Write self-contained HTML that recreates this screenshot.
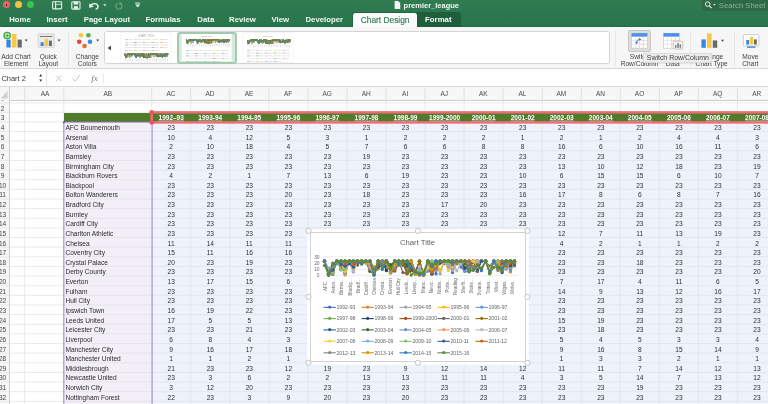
<!DOCTYPE html>
<html><head><meta charset="utf-8"><title>premier_league</title>
<style>
html,body{margin:0;padding:0}
body{width:768px;height:404px;overflow:hidden;position:relative;background:#fff;will-change:transform;font-family:"Liberation Sans",sans-serif;-webkit-font-smoothing:antialiased}
.abs{position:absolute}
.t{position:absolute;white-space:nowrap;line-height:1;transform:translate(-50%,-50%)}
.tl{position:absolute;white-space:nowrap;line-height:1;transform:translate(0,-50%)}
.tab{position:absolute;top:20.1px;font-size:7.8px;font-weight:bold;color:#f3f8f4;white-space:nowrap;line-height:1;transform:translate(-50%,-50%)}
.rl{position:absolute;font-size:6.6px;color:#3f3f3f;white-space:nowrap;line-height:1;transform:translate(-50%,-50%)}
.sep{position:absolute;width:1px;background:#e8e8e8;top:31px;height:35px}
.ch{position:absolute;font-size:6.5px;color:#4a4a4a;top:94.2px;line-height:1;transform:translate(-50%,-50%)}
.rh{position:absolute;font-size:6.6px;color:#444;line-height:1;white-space:nowrap;transform:translate(-50%,-50%)}
.c{position:absolute;font-size:6.6px;color:#2e2e2e;line-height:1;transform:translate(-50%,-50%);white-space:nowrap}
.n{position:absolute;font-size:6.6px;color:#2a2a2a;line-height:1;transform:translate(0,-50%);white-space:nowrap}
.h{position:absolute;font-size:6.5px;font-weight:bold;color:#fff;line-height:1;transform:translate(-50%,-50%);white-space:nowrap;text-decoration:underline}
</style></head><body>

<div class="abs" style="left:0;top:0;width:768px;height:26.8px;background:linear-gradient(#317b51,#27754b)"></div>
<div class="abs" style="left:0;top:25.6px;width:768px;height:1.2px;background:#1f6b42"></div>
<div class="abs" style="left:2.8px;top:1.0999999999999996px;width:7.4px;height:7.4px;border-radius:50%;background:#f05f62"></div>
<div class="abs" style="left:14.8px;top:1.0999999999999996px;width:7.4px;height:7.4px;border-radius:50%;background:#fac044"></div>
<div class="abs" style="left:26.8px;top:1.0999999999999996px;width:7.4px;height:7.4px;border-radius:50%;background:#38c64c"></div>
<div class="abs" style="left:5.8px;top:4.1px;width:1.4px;height:1.6px;border-radius:50%;background:#3a1414"></div>
<svg class="abs" style="left:0;top:0" width="768" height="27" viewBox="0 0 768 27">
<g fill="none" stroke="#e9f2ec" stroke-width="1.1">
<rect x="52.6" y="1.7" width="9" height="7.2" rx="0.8"/><line x1="55.6" y1="1.7" x2="55.6" y2="8.9"/><line x1="55.6" y1="4.4" x2="61.6" y2="4.4" stroke-width="0.8"/>
<rect x="71.8" y="1.7" width="8.2" height="7.4" rx="0.9"/><rect x="73.7" y="1.9" width="4.4" height="2.6" fill="#e9f2ec" stroke="none"/><rect x="73.9" y="6.2" width="4" height="2.7" fill="#e9f2ec" stroke="none"/>
<path d="M90.2 6.6 C91.5 2.6 97.8 2.6 98 6.6 C98 8 97 9 95.6 9.1" stroke-width="1.4"/>
</g>
<path d="M89 3.4 L89.4 8 L93.8 6.6 Z" fill="#e9f2ec"/>
<path d="M103.2 4.2 L106.4 4.2 L104.8 6.2 Z" fill="#e9f2ec"/>
<g fill="none" stroke="#6fa585" stroke-width="1.1"><path d="M117.6 3.4 A3.1 3.1 0 1 0 120.6 3.6"/></g>
<path d="M119.4 1.6 L122.2 3.4 L119.6 5.2 Z" fill="#6fa585"/>
<rect x="135.2" y="2.6" width="5" height="1" fill="#e9f2ec"/><path d="M135.2 4.6 L140.2 4.6 L137.7 7.4 Z" fill="#e9f2ec"/>
<path d="M394.6 0.9 L398.2 0.9 L400.2 2.9 L400.2 9 L394.6 9 Z" fill="#f2f7f3"/>
</svg>
<div class="tl" style="left:403.6px;top:6px;font-size:7.5px;font-weight:bold;color:#eef5f0">premier_league</div>
<div class="abs" style="left:702px;top:0;width:66px;height:10.6px;background:#2f6846;border-radius:0 0 0 2px"></div>
<svg class="abs" style="left:702px;top:0" width="20" height="11" viewBox="0 0 20 11"><circle cx="5.7" cy="4.1" r="2.3" fill="none" stroke="#e4efe7" stroke-width="1"/><line x1="7.4" y1="5.9" x2="9.6" y2="8.2" stroke="#e4efe7" stroke-width="1.2"/><path d="M11 3.9 L13.8 3.9 L12.4 5.6 Z" fill="#e4efe7"/></svg>
<div class="tl" style="left:718.8px;top:5.5px;font-size:7.7px;color:#86b197">Search Sheet</div>
<div class="tab" style="left:20px">Home</div>
<div class="tab" style="left:57px">Insert</div>
<div class="tab" style="left:107px">Page Layout</div>
<div class="tab" style="left:163px">Formulas</div>
<div class="tab" style="left:205.8px">Data</div>
<div class="tab" style="left:242.5px">Review</div>
<div class="tab" style="left:280.3px">View</div>
<div class="tab" style="left:324.3px">Developer</div>
<div class="abs" style="left:352.6px;top:12.6px;width:64.4px;height:15px;background:#fbfbfb;border-radius:2.5px 2.5px 0 0;box-shadow:0 0 0 0.9px #1e6640"></div>
<div class="tab" style="left:385.1px;top:20.1px;color:#2d7a50;font-weight:normal;font-size:8.35px;-webkit-text-stroke:0.12px #2d7a50">Chart Design</div>
<div class="abs" style="left:416.5px;top:12.4px;width:44.2px;height:14.4px;background:#1e5e3b;border-radius:0 2.5px 0 0"></div>
<div class="tab" style="left:438.3px;color:#fff">Format</div>
<div class="abs" style="left:0;top:27px;width:768px;height:42px;background:#f6f6f6"></div>
<div class="abs" style="left:0;top:68.4px;width:768px;height:1px;background:#d8d8d8"></div>
<svg class="abs" style="left:0;top:27px" width="768" height="42" viewBox="0 27 768 42">
<!-- add chart element -->
<rect x="6.4" y="39.6" width="4.3" height="7.9" fill="#3b86e0"/>
<rect x="11.9" y="33.9" width="4.6" height="13.6" fill="#f8c843"/>
<rect x="17.6" y="39.6" width="4.2" height="7.9" fill="#6b6b6b"/>
<circle cx="7.2" cy="35.6" r="3.1" fill="#fff" stroke="#3fae49" stroke-width="1.5"/>
<path d="M5.4 35.6 H9 M7.2 33.8 V37.4" stroke="#3fae49" stroke-width="1.1"/>
<path d="M24.7 39.4 L27.7 39.4 L26.2 41.4 Z" fill="#444"/>
<!-- quick layout -->
<rect x="38.2" y="34" width="16" height="13.2" rx="0.8" fill="#ececec" stroke="#c9c9c9" stroke-width="0.8"/>
<rect x="40" y="36" width="12.4" height="1" fill="#777"/>
<rect x="40.6" y="42.2" width="3" height="3.8" fill="#3b86e0"/>
<rect x="44.6" y="38.8" width="3.3" height="7.2" fill="#f8c843"/>
<rect x="48.9" y="40.6" width="3" height="5.4" fill="#6b6b6b"/>
<path d="M57.5 39.4 L60.5 39.4 L59 41.4 Z" fill="#444"/>
<!-- change colors -->
<circle cx="81" cy="35.3" r="2.3" fill="#f8c843"/>
<circle cx="88.4" cy="35.3" r="2.3" fill="#4fb355"/>
<circle cx="79.2" cy="41.8" r="2.3" fill="#e0453f"/>
<circle cx="90" cy="41.8" r="2.3" fill="#3b86e0"/>
<circle cx="84.5" cy="46" r="2.3" fill="#ee6b2d"/>
<path d="M96.2 39.4 L99.2 39.4 L97.7 41.4 Z" fill="#444"/>
</svg>
<div class="sep" style="left:68px"></div>
<div class="rl" style="left:16px;top:56.8px">Add Chart</div>
<div class="rl" style="left:16px;top:63.9px">Element</div>
<div class="rl" style="left:48.3px;top:56.8px">Quick</div>
<div class="rl" style="left:48.3px;top:63.9px">Layout</div>
<div class="rl" style="left:87.4px;top:56.8px">Change</div>
<div class="rl" style="left:87.4px;top:63.9px">Colors</div>
<div class="abs" style="left:103.5px;top:31.2px;width:506.5px;height:33.3px;background:#fff;border:0.8px solid #d4d4d4;border-radius:2.5px;box-sizing:border-box"></div>
<svg class="abs" style="left:105px;top:42px" width="8" height="10" viewBox="0 0 8 10"><path d="M6 3.4 L6 8.4 L2.6 5.9 Z" fill="#4a4a4a"/></svg>
<div class="abs" style="left:176.6px;top:31.6px;width:60px;height:32px;background:#d6e9dc;border:2px solid #a3cab0;border-radius:3px;box-sizing:border-box"></div>
<svg class="abs" style="left:0;top:27px" width="768" height="42" viewBox="0 27 768 42">
<rect x="121" y="32.4" width="50" height="30" fill="#fff" stroke="#ececec" stroke-width="0.5"/>
<text x="146" y="36.6" font-size="2.6" fill="#a5a5a5" text-anchor="middle" font-family="Liberation Sans, sans-serif">CHART TITLE</text>
<rect x="125.0" y="39.4" width="3" height="0.7" fill="#4472C4" opacity="0.55"/>
<rect x="128.4" y="39.4" width="4.2" height="0.6" fill="#9a9a9a" opacity="0.4"/>
<rect x="133.8" y="39.4" width="3" height="0.7" fill="#ED7D31" opacity="0.55"/>
<rect x="137.2" y="39.4" width="4.2" height="0.6" fill="#9a9a9a" opacity="0.4"/>
<rect x="142.6" y="39.4" width="3" height="0.7" fill="#A5A5A5" opacity="0.55"/>
<rect x="146.0" y="39.4" width="4.2" height="0.6" fill="#9a9a9a" opacity="0.4"/>
<rect x="151.4" y="39.4" width="3" height="0.7" fill="#FFC000" opacity="0.55"/>
<rect x="154.8" y="39.4" width="4.2" height="0.6" fill="#9a9a9a" opacity="0.4"/>
<rect x="160.2" y="39.4" width="3" height="0.7" fill="#5B9BD5" opacity="0.55"/>
<rect x="163.6" y="39.4" width="4.2" height="0.6" fill="#9a9a9a" opacity="0.4"/>
<rect x="125.0" y="42.0" width="3" height="0.7" fill="#70AD47" opacity="0.55"/>
<rect x="128.4" y="42.1" width="4.2" height="0.6" fill="#9a9a9a" opacity="0.4"/>
<rect x="133.8" y="42.0" width="3" height="0.7" fill="#264478" opacity="0.55"/>
<rect x="137.2" y="42.1" width="4.2" height="0.6" fill="#9a9a9a" opacity="0.4"/>
<rect x="142.6" y="42.0" width="3" height="0.7" fill="#9E480E" opacity="0.55"/>
<rect x="146.0" y="42.1" width="4.2" height="0.6" fill="#9a9a9a" opacity="0.4"/>
<rect x="151.4" y="42.0" width="3" height="0.7" fill="#636363" opacity="0.55"/>
<rect x="154.8" y="42.1" width="4.2" height="0.6" fill="#9a9a9a" opacity="0.4"/>
<rect x="160.2" y="42.0" width="3" height="0.7" fill="#997300" opacity="0.55"/>
<rect x="163.6" y="42.1" width="4.2" height="0.6" fill="#9a9a9a" opacity="0.4"/>
<rect x="125.0" y="44.6" width="3" height="0.7" fill="#255E91" opacity="0.55"/>
<rect x="128.4" y="44.7" width="4.2" height="0.6" fill="#9a9a9a" opacity="0.4"/>
<rect x="133.8" y="44.6" width="3" height="0.7" fill="#43682B" opacity="0.55"/>
<rect x="137.2" y="44.7" width="4.2" height="0.6" fill="#9a9a9a" opacity="0.4"/>
<rect x="142.6" y="44.6" width="3" height="0.7" fill="#698ED0" opacity="0.55"/>
<rect x="146.0" y="44.7" width="4.2" height="0.6" fill="#9a9a9a" opacity="0.4"/>
<rect x="151.4" y="44.6" width="3" height="0.7" fill="#F1975A" opacity="0.55"/>
<rect x="154.8" y="44.7" width="4.2" height="0.6" fill="#9a9a9a" opacity="0.4"/>
<rect x="160.2" y="44.6" width="3" height="0.7" fill="#B7B7B7" opacity="0.55"/>
<rect x="163.6" y="44.7" width="4.2" height="0.6" fill="#9a9a9a" opacity="0.4"/>
<rect x="125.0" y="47.3" width="3" height="0.7" fill="#FFCD33" opacity="0.55"/>
<rect x="128.4" y="47.4" width="4.2" height="0.6" fill="#9a9a9a" opacity="0.4"/>
<rect x="133.8" y="47.3" width="3" height="0.7" fill="#7CAFDD" opacity="0.55"/>
<rect x="137.2" y="47.4" width="4.2" height="0.6" fill="#9a9a9a" opacity="0.4"/>
<rect x="142.6" y="47.3" width="3" height="0.7" fill="#8CC168" opacity="0.55"/>
<rect x="146.0" y="47.4" width="4.2" height="0.6" fill="#9a9a9a" opacity="0.4"/>
<rect x="151.4" y="47.3" width="3" height="0.7" fill="#335AA1" opacity="0.55"/>
<rect x="154.8" y="47.4" width="4.2" height="0.6" fill="#9a9a9a" opacity="0.4"/>
<rect x="160.2" y="47.3" width="3" height="0.7" fill="#D26012" opacity="0.55"/>
<rect x="163.6" y="47.4" width="4.2" height="0.6" fill="#9a9a9a" opacity="0.4"/>
<rect x="125.0" y="50.0" width="3" height="0.7" fill="#848484" opacity="0.55"/>
<rect x="128.4" y="50.0" width="4.2" height="0.6" fill="#9a9a9a" opacity="0.4"/>
<rect x="133.8" y="50.0" width="3" height="0.7" fill="#CC9A00" opacity="0.55"/>
<rect x="137.2" y="50.0" width="4.2" height="0.6" fill="#9a9a9a" opacity="0.4"/>
<rect x="142.6" y="50.0" width="3" height="0.7" fill="#327DC2" opacity="0.55"/>
<rect x="146.0" y="50.0" width="4.2" height="0.6" fill="#9a9a9a" opacity="0.4"/>
<rect x="151.4" y="50.0" width="3" height="0.7" fill="#5A8A39" opacity="0.55"/>
<rect x="154.8" y="50.0" width="4.2" height="0.6" fill="#9a9a9a" opacity="0.4"/>
<polyline points="125.0,53.8 125.9,56.3 126.8,57.8 127.8,53.8 128.7,53.8 129.6,57.4 130.6,53.8 131.5,53.8 132.5,53.8 133.4,53.8 134.3,53.8 135.3,53.8 136.2,56.1 137.1,55.3 138.1,54.4 139.0,53.8 139.9,55.7 140.9,53.8 141.8,53.8 142.8,55.1 143.7,54.9 144.6,53.8 145.6,57.1 146.5,56.5 147.4,58.0 148.4,54.2 149.3,53.8 150.2,57.6 151.2,54.0 152.1,54.6 153.1,53.8 154.0,57.2 154.9,53.8 155.9,55.5 156.8,56.9 157.7,54.7 158.7,53.8 159.6,53.8 160.5,53.8 161.5,53.8 162.4,56.7 163.4,53.8 164.3,53.8 165.2,53.8 166.2,53.8 167.1,55.9 168.0,53.8" fill="none" stroke="#4472C4" stroke-width="0.95" stroke-linejoin="round" opacity="0.9"/>
<polyline points="125.0,53.8 125.9,57.4 126.8,56.3 127.8,53.8 128.7,53.8 129.6,57.8 130.6,53.8 131.5,53.8 132.5,53.8 133.4,53.8 134.3,53.8 135.3,53.8 136.2,55.5 137.1,56.1 138.1,53.8 139.0,53.8 139.9,54.9 140.9,53.8 141.8,53.8 142.8,54.6 143.7,57.2 144.6,53.8 145.6,56.7 146.5,55.1 147.4,58.0 148.4,53.8 149.3,57.6 150.2,55.9 151.2,53.8 152.1,54.2 153.1,53.8 154.0,56.5 154.9,53.8 155.9,54.4 156.8,56.9 157.7,54.7 158.7,53.8 159.6,53.8 160.5,53.8 161.5,54.0 162.4,55.3 163.4,53.8 164.3,53.8 165.2,55.7 166.2,53.8 167.1,57.1 168.0,53.8" fill="none" stroke="#ED7D31" stroke-width="0.95" stroke-linejoin="round" opacity="0.9"/>
<polyline points="125.0,53.8 125.9,55.9 126.8,54.7 127.8,53.8 128.7,53.8 129.6,58.0 130.6,53.8 131.5,53.8 132.5,53.8 133.4,53.8 134.3,53.8 135.3,53.8 136.2,56.1 137.1,55.1 138.1,54.6 139.0,53.8 139.9,55.3 140.9,53.8 141.8,53.8 142.8,54.0 143.7,57.2 144.6,54.2 145.6,57.4 146.5,54.9 147.4,57.8 148.4,53.8 149.3,57.1 150.2,54.4 151.2,57.6 152.1,53.8 153.1,53.8 154.0,56.7 154.9,53.8 155.9,53.8 156.8,55.7 157.7,56.3 158.7,53.8 159.6,53.8 160.5,53.8 161.5,53.8 162.4,56.9 163.4,53.8 164.3,53.8 165.2,55.5 166.2,53.8 167.1,56.5 168.0,53.8" fill="none" stroke="#A5A5A5" stroke-width="0.95" stroke-linejoin="round" opacity="0.9"/>
<polyline points="125.0,53.8 125.9,57.2 126.8,57.4 127.8,53.8 128.7,53.8 129.6,56.9 130.6,53.8 131.5,54.4 132.5,53.8 133.4,53.8 134.3,53.8 135.3,53.8 136.2,56.1 137.1,55.1 138.1,53.8 139.0,53.8 139.9,57.1 140.9,53.8 141.8,53.8 142.8,53.8 143.7,55.7 144.6,53.8 145.6,57.6 146.5,54.7 147.4,58.0 148.4,55.9 149.3,57.8 150.2,53.8 151.2,56.5 152.1,53.8 153.1,53.8 154.0,54.6 154.9,53.8 155.9,53.8 156.8,55.3 157.7,54.9 158.7,53.8 159.6,53.8 160.5,53.8 161.5,53.8 162.4,56.7 163.4,53.8 164.3,53.8 165.2,56.3 166.2,53.8 167.1,55.5 168.0,53.8" fill="none" stroke="#FFC000" stroke-width="0.95" stroke-linejoin="round" opacity="0.9"/>
<polyline points="125.0,53.8 125.9,57.6 126.8,57.2 127.8,53.8 128.7,53.8 129.6,55.7 130.6,53.8 131.5,53.8 132.5,53.8 133.4,53.8 134.3,53.8 135.3,55.3 136.2,57.1 137.1,54.9 138.1,53.8 139.0,55.9 139.9,55.3 140.9,53.8 141.8,53.8 142.8,53.8 143.7,56.1 144.6,56.5 145.6,57.4 146.5,53.8 147.4,58.0 148.4,54.6 149.3,57.8 150.2,53.8 151.2,54.4 152.1,53.8 153.1,53.8 154.0,53.8 154.9,53.8 155.9,53.8 156.8,56.9 157.7,55.1 158.7,53.8 159.6,54.7 160.5,53.8 161.5,53.8 162.4,56.3 163.4,53.8 164.3,53.8 165.2,55.5 166.2,53.8 167.1,56.7 168.0,53.8" fill="none" stroke="#5B9BD5" stroke-width="0.95" stroke-linejoin="round" opacity="0.9"/>
<polyline points="125.0,53.8 125.9,58.0 126.8,56.9 127.8,54.6 128.7,53.8 129.6,57.1 130.6,53.8 131.5,54.7 132.5,53.8 133.4,53.8 134.3,53.8 135.3,53.8 136.2,57.4 137.1,56.1 138.1,54.4 139.0,56.5 139.9,54.9 140.9,53.8 141.8,53.8 142.8,53.8 143.7,57.2 144.6,56.3 145.6,57.6 146.5,53.8 147.4,57.8 148.4,53.8 149.3,55.7 150.2,53.8 151.2,53.8 152.1,53.8 153.1,53.8 154.0,53.8 154.9,53.8 155.9,53.8 156.8,55.1 157.7,55.9 158.7,53.8 159.6,53.8 160.5,53.8 161.5,53.8 162.4,55.5 163.4,53.8 164.3,53.8 165.2,56.7 166.2,53.8 167.1,55.3 168.0,53.8" fill="none" stroke="#70AD47" stroke-width="0.95" stroke-linejoin="round" opacity="0.9"/>
<polyline points="125.0,53.8 125.9,57.8 126.8,57.1 127.8,53.8 128.7,53.8 129.6,54.6 130.6,53.8 131.5,53.8 132.5,53.8 133.4,53.8 134.3,53.8 135.3,54.7 136.2,57.6 137.1,55.3 138.1,53.8 139.0,56.7 139.9,55.5 140.9,53.8 141.8,53.8 142.8,53.8 143.7,57.4 144.6,56.3 145.6,56.9 146.5,53.8 147.4,58.0 148.4,56.5 149.3,55.7 150.2,53.8 151.2,54.4 152.1,53.8 153.1,53.8 154.0,53.8 154.9,53.8 155.9,53.8 156.8,55.9 157.7,54.9 158.7,53.8 159.6,53.8 160.5,53.8 161.5,53.8 162.4,56.1 163.4,53.8 164.3,53.8 165.2,57.2 166.2,53.8 167.1,55.1 168.0,53.8" fill="none" stroke="#264478" stroke-width="0.95" stroke-linejoin="round" opacity="0.9"/>
<polyline points="125.0,53.8 125.9,57.8 126.8,57.1 127.8,53.8 128.7,53.8 129.6,53.8 130.6,53.8 131.5,53.8 132.5,54.9 133.4,53.8 134.3,53.8 135.3,55.5 136.2,57.2 137.1,55.5 138.1,53.8 139.0,55.1 139.9,55.7 140.9,53.8 141.8,53.8 142.8,53.8 143.7,57.6 144.6,56.7 145.6,57.4 146.5,53.8 147.4,58.0 148.4,55.9 149.3,56.1 150.2,53.8 151.2,53.8 152.1,53.8 153.1,53.8 154.0,53.8 154.9,53.8 155.9,53.8 156.8,54.6 157.7,55.3 158.7,53.8 159.6,56.9 160.5,53.8 161.5,53.8 162.4,56.3 163.4,54.4 164.3,53.8 165.2,56.5 166.2,53.8 167.1,54.7 168.0,53.8" fill="none" stroke="#9E480E" stroke-width="0.95" stroke-linejoin="round" opacity="0.9"/>
<polyline points="125.0,53.8 125.9,57.8 126.8,56.7 127.8,53.8 128.7,53.8 129.6,53.8 130.6,53.8 131.5,53.8 132.5,54.4 133.4,53.8 134.3,53.8 135.3,56.5 136.2,57.1 137.1,54.6 138.1,53.8 139.0,54.9 139.9,55.1 140.9,53.8 141.8,53.8 142.8,57.2 143.7,57.4 144.6,55.7 145.6,57.6 146.5,54.7 147.4,58.0 148.4,55.5 149.3,56.1 150.2,53.8 151.2,53.8 152.1,53.8 153.1,53.8 154.0,53.8 154.9,53.8 155.9,53.8 156.8,53.8 157.7,56.3 158.7,53.8 159.6,56.9 160.5,53.8 161.5,53.8 162.4,55.9 163.4,53.8 164.3,53.8 165.2,55.3 166.2,53.8 167.1,53.8 168.0,53.8" fill="none" stroke="#636363" stroke-width="0.95" stroke-linejoin="round" opacity="0.9"/>
<polyline points="125.0,53.8 125.9,58.0 126.8,56.7 127.8,53.8 128.7,53.8 129.6,56.3 130.6,53.8 131.5,55.1 132.5,53.8 133.4,53.8 134.3,53.8 135.3,55.5 136.2,57.1 137.1,53.8 138.1,53.8 139.0,54.6 139.9,55.3 140.9,55.7 141.8,53.8 142.8,54.7 143.7,57.2 144.6,54.4 145.6,57.8 146.5,53.8 147.4,57.6 148.4,55.9 149.3,57.4 150.2,53.8 151.2,53.8 152.1,53.8 153.1,53.8 154.0,53.8 154.9,53.8 155.9,53.8 156.8,53.8 157.7,56.1 158.7,53.8 159.6,54.9 160.5,53.8 161.5,53.8 162.4,56.5 163.4,53.8 164.3,53.8 165.2,56.9 166.2,53.8 167.1,53.8 168.0,53.8" fill="none" stroke="#997300" stroke-width="0.95" stroke-linejoin="round" opacity="0.9"/>
<polyline points="125.0,53.8 125.9,57.8 126.8,55.1 127.8,53.8 128.7,55.7 129.6,57.1 130.6,53.8 131.5,54.9 132.5,53.8 133.4,53.8 134.3,53.8 135.3,55.9 136.2,57.4 137.1,53.8 138.1,53.8 139.0,53.8 139.9,56.9 140.9,55.5 141.8,53.8 142.8,53.8 143.7,55.3 144.6,53.8 145.6,57.2 146.5,56.5 147.4,58.0 148.4,56.1 149.3,57.6 150.2,53.8 151.2,53.8 152.1,53.8 153.1,53.8 154.0,53.8 154.9,53.8 155.9,53.8 156.8,53.8 157.7,56.7 158.7,53.8 159.6,54.4 160.5,53.8 161.5,53.8 162.4,56.3 163.4,53.8 164.3,54.6 165.2,54.7 166.2,53.8 167.1,53.8 168.0,53.8" fill="none" stroke="#255E91" stroke-width="0.95" stroke-linejoin="round" opacity="0.9"/>
<polyline points="125.0,53.8 125.9,58.0 126.8,57.1 127.8,53.8 128.7,56.3 129.6,55.3 130.6,53.8 131.5,56.7 132.5,53.8 133.4,53.8 134.3,53.8 135.3,56.9 136.2,57.8 137.1,53.8 138.1,53.8 139.0,53.8 139.9,54.9 140.9,56.5 141.8,53.8 142.8,53.8 143.7,54.6 144.6,54.7 145.6,57.4 146.5,55.1 147.4,57.6 148.4,56.1 149.3,57.2 150.2,53.8 151.2,53.8 152.1,53.8 153.1,55.7 154.0,53.8 154.9,53.8 155.9,53.8 156.8,53.8 157.7,55.9 158.7,53.8 159.6,53.8 160.5,53.8 161.5,53.8 162.4,55.5 163.4,53.8 164.3,53.8 165.2,53.8 166.2,53.8 167.1,53.8 168.0,54.4" fill="none" stroke="#43682B" stroke-width="0.95" stroke-linejoin="round" opacity="0.9"/>
<polyline points="125.0,53.8 125.9,57.8 126.8,56.3 127.8,53.8 128.7,55.9 129.6,55.3 130.6,53.8 131.5,57.1 132.5,53.8 133.4,53.8 134.3,53.8 135.3,56.1 136.2,58.0 137.1,53.8 138.1,54.7 139.0,53.8 139.9,57.4 140.9,55.7 141.8,53.8 142.8,53.8 143.7,53.8 144.6,53.8 145.6,57.2 146.5,56.7 147.4,57.6 148.4,56.9 149.3,55.5 150.2,54.6 151.2,53.8 152.1,53.8 153.1,55.1 154.0,53.8 154.9,53.8 155.9,53.8 156.8,53.8 157.7,54.4 158.7,53.8 159.6,53.8 160.5,53.8 161.5,53.8 162.4,56.5 163.4,53.8 164.3,54.9 165.2,53.8 166.2,53.8 167.1,53.8 168.0,53.8" fill="none" stroke="#698ED0" stroke-width="0.95" stroke-linejoin="round" opacity="0.9"/>
<polyline points="125.0,53.8 125.9,57.4 126.8,55.1 127.8,53.8 128.7,54.7 129.6,57.1 130.6,53.8 131.5,56.7 132.5,53.8 133.4,53.8 134.3,53.8 135.3,55.7 136.2,58.0 137.1,53.8 138.1,53.8 139.0,53.8 139.9,56.1 140.9,55.9 141.8,53.8 142.8,53.8 143.7,53.8 144.6,53.8 145.6,57.6 146.5,55.3 147.4,57.8 148.4,55.5 149.3,56.9 150.2,53.8 151.2,53.8 152.1,53.8 153.1,54.9 154.0,53.8 154.9,53.8 155.9,53.8 156.8,53.8 157.7,53.8 158.7,53.8 159.6,54.4 160.5,53.8 161.5,53.8 162.4,57.2 163.4,53.8 164.3,54.6 165.2,56.5 166.2,56.3 167.1,53.8 168.0,53.8" fill="none" stroke="#F1975A" stroke-width="0.95" stroke-linejoin="round" opacity="0.9"/>
<polyline points="125.0,53.8 125.9,57.4 126.8,56.1 127.8,53.8 128.7,53.8 129.6,56.3 130.6,53.8 131.5,56.9 132.5,53.8 133.4,53.8 134.3,53.8 135.3,54.6 136.2,57.8 137.1,53.8 138.1,53.8 139.0,53.8 139.9,57.1 140.9,55.1 141.8,53.8 142.8,53.8 143.7,53.8 144.6,53.8 145.6,57.6 146.5,55.5 147.4,58.0 148.4,55.9 149.3,55.7 150.2,53.8 151.2,53.8 152.1,53.8 153.1,56.5 154.0,53.8 154.9,56.7 155.9,54.7 156.8,53.8 157.7,53.8 158.7,53.8 159.6,53.8 160.5,53.8 161.5,53.8 162.4,57.2 163.4,54.4 164.3,53.8 165.2,55.3 166.2,54.9 167.1,53.8 168.0,53.8" fill="none" stroke="#B7B7B7" stroke-width="0.95" stroke-linejoin="round" opacity="0.9"/>
<polyline points="125.0,53.8 125.9,57.6 126.8,57.1 127.8,53.8 128.7,54.6 129.6,56.9 130.6,53.8 131.5,55.1 132.5,53.8 133.4,53.8 134.3,53.8 135.3,53.8 136.2,57.8 137.1,53.8 138.1,53.8 139.0,54.4 139.9,57.2 140.9,54.9 141.8,53.8 142.8,53.8 143.7,53.8 144.6,53.8 145.6,57.4 146.5,56.5 147.4,58.0 148.4,55.7 149.3,55.9 150.2,53.8 151.2,53.8 152.1,53.8 153.1,56.7 154.0,53.8 154.9,54.7 155.9,53.8 156.8,53.8 157.7,53.8 158.7,53.8 159.6,55.3 160.5,53.8 161.5,53.8 162.4,56.1 163.4,53.8 164.3,53.8 165.2,56.3 166.2,55.5 167.1,53.8 168.0,53.8" fill="none" stroke="#FFCD33" stroke-width="0.95" stroke-linejoin="round" opacity="0.9"/>
<polyline points="125.0,53.8 125.9,57.4 126.8,57.1 127.8,53.8 128.7,53.8 129.6,55.3 130.6,53.8 131.5,55.7 132.5,53.8 133.4,53.8 134.3,53.8 135.3,53.8 136.2,57.6 137.1,53.8 138.1,53.8 139.0,53.8 139.9,57.2 140.9,56.9 141.8,54.9 142.8,53.8 143.7,53.8 144.6,53.8 145.6,57.8 146.5,56.3 147.4,58.0 148.4,54.6 149.3,54.7 150.2,53.8 151.2,53.8 152.1,53.8 153.1,55.5 154.0,53.8 154.9,53.8 155.9,53.8 156.8,53.8 157.7,53.8 158.7,55.9 159.6,55.1 160.5,53.8 161.5,53.8 162.4,56.7 163.4,53.8 164.3,54.4 165.2,56.5 166.2,56.1 167.1,53.8 168.0,53.8" fill="none" stroke="#7CAFDD" stroke-width="0.95" stroke-linejoin="round" opacity="0.9"/>
<polyline points="125.0,53.8 125.9,57.6 126.8,57.1 127.8,53.8 128.7,56.5 129.6,56.3 130.6,53.8 131.5,55.5 132.5,53.8 133.4,54.7 134.3,53.8 135.3,53.8 136.2,58.0 137.1,53.8 138.1,53.8 139.0,53.8 139.9,56.7 140.9,55.9 141.8,54.6 142.8,53.8 143.7,53.8 144.6,53.8 145.6,56.9 146.5,57.2 147.4,57.8 148.4,53.8 149.3,53.8 150.2,53.8 151.2,53.8 152.1,53.8 153.1,54.4 154.0,53.8 154.9,53.8 155.9,53.8 156.8,53.8 157.7,53.8 158.7,56.1 159.6,55.7 160.5,53.8 161.5,53.8 162.4,57.4 163.4,53.8 164.3,53.8 165.2,54.9 166.2,55.1 167.1,53.8 168.0,55.3" fill="none" stroke="#8CC168" stroke-width="0.95" stroke-linejoin="round" opacity="0.9"/>
<polyline points="125.0,53.8 125.9,57.4 126.8,56.5 127.8,53.8 128.7,54.7 129.6,55.3 130.6,54.6 131.5,55.5 132.5,53.8 133.4,53.8 134.3,53.8 135.3,53.8 136.2,57.8 137.1,53.8 138.1,53.8 139.0,53.8 139.9,56.9 140.9,56.7 141.8,53.8 142.8,53.8 143.7,53.8 144.6,53.8 145.6,57.1 146.5,57.6 147.4,58.0 148.4,53.8 149.3,55.9 150.2,53.8 151.2,53.8 152.1,53.8 153.1,53.8 154.0,53.8 154.9,53.8 155.9,53.8 156.8,53.8 157.7,53.8 158.7,55.7 159.6,56.3 160.5,53.8 161.5,53.8 162.4,57.2 163.4,53.8 164.3,56.1 165.2,54.4 166.2,55.1 167.1,53.8 168.0,54.9" fill="none" stroke="#335AA1" stroke-width="0.95" stroke-linejoin="round" opacity="0.9"/>
<polyline points="125.0,53.8 125.9,57.6 126.8,55.1 127.8,53.8 128.7,53.8 129.6,54.6 130.6,53.8 131.5,54.7 132.5,53.8 133.4,53.8 134.3,53.8 135.3,53.8 136.2,57.1 137.1,53.8 138.1,53.8 139.0,53.8 139.9,56.9 140.9,56.5 141.8,53.8 142.8,53.8 143.7,53.8 144.6,53.8 145.6,56.7 146.5,58.0 147.4,57.8 148.4,53.8 149.3,57.2 150.2,55.9 151.2,53.8 152.1,53.8 153.1,53.8 154.0,54.9 154.9,53.8 155.9,53.8 156.8,53.8 157.7,53.8 158.7,55.5 159.6,55.7 160.5,56.1 161.5,53.8 162.4,57.4 163.4,53.8 164.3,56.3 165.2,53.8 166.2,55.3 167.1,53.8 168.0,54.4" fill="none" stroke="#D26012" stroke-width="0.95" stroke-linejoin="round" opacity="0.9"/>
<polyline points="125.0,53.8 125.9,57.4 126.8,55.3 127.8,53.8 128.7,53.8 129.6,53.8 130.6,53.8 131.5,53.8 132.5,53.8 133.4,53.8 134.3,53.8 135.3,53.8 136.2,57.6 137.1,53.8 138.1,53.8 139.0,53.8 139.9,57.1 140.9,55.9 141.8,53.8 142.8,53.8 143.7,53.8 144.6,53.8 145.6,56.9 146.5,57.8 147.4,58.0 148.4,53.8 149.3,55.1 150.2,56.1 151.2,53.8 152.1,53.8 153.1,53.8 154.0,54.4 154.9,54.6 155.9,53.8 156.8,53.8 157.7,55.5 158.7,55.7 159.6,54.9 160.5,56.5 161.5,53.8 162.4,57.2 163.4,53.8 164.3,56.7 165.2,56.3 166.2,54.7 167.1,53.8 168.0,53.8" fill="none" stroke="#848484" stroke-width="0.95" stroke-linejoin="round" opacity="0.9"/>
<polyline points="125.0,53.8 125.9,57.4 126.8,55.3 127.8,53.8 128.7,53.8 129.6,53.8 130.6,53.8 131.5,53.8 132.5,53.8 133.4,53.8 134.3,54.4 135.3,53.8 136.2,57.6 137.1,53.8 138.1,56.1 139.0,53.8 139.9,57.2 140.9,54.6 141.8,55.1 142.8,53.8 143.7,53.8 144.6,53.8 145.6,57.8 146.5,58.0 147.4,56.9 148.4,53.8 149.3,56.3 150.2,54.7 151.2,53.8 152.1,53.8 153.1,53.8 154.0,53.8 154.9,53.8 155.9,53.8 156.8,53.8 157.7,56.7 158.7,56.5 159.6,55.5 160.5,55.9 161.5,53.8 162.4,57.1 163.4,53.8 164.3,54.9 165.2,55.7 166.2,53.8 167.1,53.8 168.0,53.8" fill="none" stroke="#CC9A00" stroke-width="0.95" stroke-linejoin="round" opacity="0.9"/>
<polyline points="125.0,53.8 125.9,57.6 126.8,54.9 127.8,53.8 128.7,53.8 129.6,53.8 130.6,53.8 131.5,53.8 132.5,53.8 133.4,54.6 134.3,53.8 135.3,53.8 136.2,58.0 137.1,53.8 138.1,56.3 139.0,53.8 139.9,56.1 140.9,53.8 141.8,54.7 142.8,53.8 143.7,53.8 144.6,55.5 145.6,57.1 146.5,57.8 147.4,57.4 148.4,53.8 149.3,55.3 150.2,53.8 151.2,53.8 152.1,53.8 153.1,53.8 154.0,54.4 154.9,53.8 155.9,53.8 156.8,53.8 157.7,56.9 158.7,56.5 159.6,55.1 160.5,56.7 161.5,53.8 162.4,57.2 163.4,53.8 164.3,55.7 165.2,55.9 166.2,53.8 167.1,53.8 168.0,53.8" fill="none" stroke="#327DC2" stroke-width="0.95" stroke-linejoin="round" opacity="0.9"/>
<polyline points="125.0,55.1 125.9,57.8 126.8,54.4 127.8,53.8 128.7,53.8 129.6,53.8 130.6,53.8 131.5,53.8 132.5,53.8 133.4,53.8 134.3,53.8 135.3,53.8 136.2,56.3 137.1,53.8 138.1,55.3 139.0,53.8 139.9,56.1 140.9,53.8 141.8,53.8 142.8,53.8 143.7,53.8 144.6,58.0 145.6,56.7 146.5,57.4 147.4,57.2 148.4,53.8 149.3,54.7 150.2,54.6 151.2,53.8 152.1,53.8 153.1,53.8 154.0,53.8 154.9,53.8 155.9,53.8 156.8,53.8 157.7,57.1 158.7,56.5 159.6,54.9 160.5,55.9 161.5,53.8 162.4,57.6 163.4,55.7 164.3,55.5 165.2,56.9 166.2,53.8 167.1,53.8 168.0,53.8" fill="none" stroke="#5A8A39" stroke-width="0.95" stroke-linejoin="round" opacity="0.9"/>
<rect x="125.0" y="58.6" width="0.5" height="2.0" fill="#b5b5b5" opacity="0.7"/>
<rect x="126.8" y="58.6" width="0.5" height="2.6" fill="#b5b5b5" opacity="0.7"/>
<rect x="128.7" y="58.6" width="0.5" height="3.2" fill="#b5b5b5" opacity="0.7"/>
<rect x="130.5" y="58.6" width="0.5" height="2.3" fill="#b5b5b5" opacity="0.7"/>
<rect x="132.3" y="58.6" width="0.5" height="2.9" fill="#b5b5b5" opacity="0.7"/>
<rect x="134.2" y="58.6" width="0.5" height="2.0" fill="#b5b5b5" opacity="0.7"/>
<rect x="136.0" y="58.6" width="0.5" height="2.6" fill="#b5b5b5" opacity="0.7"/>
<rect x="137.8" y="58.6" width="0.5" height="3.2" fill="#b5b5b5" opacity="0.7"/>
<rect x="139.6" y="58.6" width="0.5" height="2.3" fill="#b5b5b5" opacity="0.7"/>
<rect x="141.5" y="58.6" width="0.5" height="2.9" fill="#b5b5b5" opacity="0.7"/>
<rect x="143.3" y="58.6" width="0.5" height="2.0" fill="#b5b5b5" opacity="0.7"/>
<rect x="145.1" y="58.6" width="0.5" height="2.6" fill="#b5b5b5" opacity="0.7"/>
<rect x="147.0" y="58.6" width="0.5" height="3.2" fill="#b5b5b5" opacity="0.7"/>
<rect x="148.8" y="58.6" width="0.5" height="2.3" fill="#b5b5b5" opacity="0.7"/>
<rect x="150.6" y="58.6" width="0.5" height="2.9" fill="#b5b5b5" opacity="0.7"/>
<rect x="152.4" y="58.6" width="0.5" height="2.0" fill="#b5b5b5" opacity="0.7"/>
<rect x="154.3" y="58.6" width="0.5" height="2.6" fill="#b5b5b5" opacity="0.7"/>
<rect x="156.1" y="58.6" width="0.5" height="3.2" fill="#b5b5b5" opacity="0.7"/>
<rect x="157.9" y="58.6" width="0.5" height="2.3" fill="#b5b5b5" opacity="0.7"/>
<rect x="159.8" y="58.6" width="0.5" height="2.9" fill="#b5b5b5" opacity="0.7"/>
<rect x="161.6" y="58.6" width="0.5" height="2.0" fill="#b5b5b5" opacity="0.7"/>
<rect x="163.4" y="58.6" width="0.5" height="2.6" fill="#b5b5b5" opacity="0.7"/>
<rect x="165.3" y="58.6" width="0.5" height="3.2" fill="#b5b5b5" opacity="0.7"/>
<rect x="167.1" y="58.6" width="0.5" height="2.3" fill="#b5b5b5" opacity="0.7"/>
<rect x="181.6" y="34" width="50" height="27.4" fill="#fff"/>
<text x="206.6" y="37.4" font-size="2.4" fill="#9a9a9a" text-anchor="middle" font-family="Liberation Sans, sans-serif">Chart Title</text>
<polyline points="186.5,39.6 187.4,41.9 188.3,43.3 189.3,39.6 190.2,39.6 191.1,42.9 192.1,39.6 193.0,39.6 194.0,39.6 194.9,39.6 195.8,39.6 196.8,39.6 197.7,41.7 198.6,41.0 199.6,40.1 200.5,39.6 201.4,41.3 202.4,39.6 203.3,39.6 204.3,40.8 205.2,40.6 206.1,39.6 207.1,42.6 208.0,42.0 208.9,43.4 209.9,39.9 210.8,39.6 211.7,43.1 212.7,39.7 213.6,40.3 214.6,39.6 215.5,42.7 216.4,39.6 217.4,41.1 218.3,42.4 219.2,40.4 220.2,39.6 221.1,39.6 222.0,39.6 223.0,39.6 223.9,42.2 224.9,39.6 225.8,39.6 226.7,39.6 227.7,39.6 228.6,41.5 229.5,39.6" fill="none" stroke="#4472C4" stroke-width="0.95" stroke-linejoin="round" opacity="0.9"/>
<polyline points="186.5,39.6 187.4,42.9 188.3,41.9 189.3,39.6 190.2,39.6 191.1,43.3 192.1,39.6 193.0,39.6 194.0,39.6 194.9,39.6 195.8,39.6 196.8,39.6 197.7,41.1 198.6,41.7 199.6,39.6 200.5,39.6 201.4,40.6 202.4,39.6 203.3,39.6 204.3,40.3 205.2,42.7 206.1,39.6 207.1,42.2 208.0,40.8 208.9,43.4 209.9,39.6 210.8,43.1 211.7,41.5 212.7,39.6 213.6,39.9 214.6,39.6 215.5,42.0 216.4,39.6 217.4,40.1 218.3,42.4 219.2,40.4 220.2,39.6 221.1,39.6 222.0,39.6 223.0,39.7 223.9,41.0 224.9,39.6 225.8,39.6 226.7,41.3 227.7,39.6 228.6,42.6 229.5,39.6" fill="none" stroke="#ED7D31" stroke-width="0.95" stroke-linejoin="round" opacity="0.9"/>
<polyline points="186.5,39.6 187.4,41.5 188.3,40.4 189.3,39.6 190.2,39.6 191.1,43.4 192.1,39.6 193.0,39.6 194.0,39.6 194.9,39.6 195.8,39.6 196.8,39.6 197.7,41.7 198.6,40.8 199.6,40.3 200.5,39.6 201.4,41.0 202.4,39.6 203.3,39.6 204.3,39.7 205.2,42.7 206.1,39.9 207.1,42.9 208.0,40.6 208.9,43.3 209.9,39.6 210.8,42.6 211.7,40.1 212.7,43.1 213.6,39.6 214.6,39.6 215.5,42.2 216.4,39.6 217.4,39.6 218.3,41.3 219.2,41.9 220.2,39.6 221.1,39.6 222.0,39.6 223.0,39.6 223.9,42.4 224.9,39.6 225.8,39.6 226.7,41.1 227.7,39.6 228.6,42.0 229.5,39.6" fill="none" stroke="#A5A5A5" stroke-width="0.95" stroke-linejoin="round" opacity="0.9"/>
<polyline points="186.5,39.6 187.4,42.7 188.3,42.9 189.3,39.6 190.2,39.6 191.1,42.4 192.1,39.6 193.0,40.1 194.0,39.6 194.9,39.6 195.8,39.6 196.8,39.6 197.7,41.7 198.6,40.8 199.6,39.6 200.5,39.6 201.4,42.6 202.4,39.6 203.3,39.6 204.3,39.6 205.2,41.3 206.1,39.6 207.1,43.1 208.0,40.4 208.9,43.4 209.9,41.5 210.8,43.3 211.7,39.6 212.7,42.0 213.6,39.6 214.6,39.6 215.5,40.3 216.4,39.6 217.4,39.6 218.3,41.0 219.2,40.6 220.2,39.6 221.1,39.6 222.0,39.6 223.0,39.6 223.9,42.2 224.9,39.6 225.8,39.6 226.7,41.9 227.7,39.6 228.6,41.1 229.5,39.6" fill="none" stroke="#FFC000" stroke-width="0.95" stroke-linejoin="round" opacity="0.9"/>
<polyline points="186.5,39.6 187.4,43.1 188.3,42.7 189.3,39.6 190.2,39.6 191.1,41.3 192.1,39.6 193.0,39.6 194.0,39.6 194.9,39.6 195.8,39.6 196.8,41.0 197.7,42.6 198.6,40.6 199.6,39.6 200.5,41.5 201.4,41.0 202.4,39.6 203.3,39.6 204.3,39.6 205.2,41.7 206.1,42.0 207.1,42.9 208.0,39.6 208.9,43.4 209.9,40.3 210.8,43.3 211.7,39.6 212.7,40.1 213.6,39.6 214.6,39.6 215.5,39.6 216.4,39.6 217.4,39.6 218.3,42.4 219.2,40.8 220.2,39.6 221.1,40.4 222.0,39.6 223.0,39.6 223.9,41.9 224.9,39.6 225.8,39.6 226.7,41.1 227.7,39.6 228.6,42.2 229.5,39.6" fill="none" stroke="#5B9BD5" stroke-width="0.95" stroke-linejoin="round" opacity="0.9"/>
<polyline points="186.5,39.6 187.4,43.4 188.3,42.4 189.3,40.3 190.2,39.6 191.1,42.6 192.1,39.6 193.0,40.4 194.0,39.6 194.9,39.6 195.8,39.6 196.8,39.6 197.7,42.9 198.6,41.7 199.6,40.1 200.5,42.0 201.4,40.6 202.4,39.6 203.3,39.6 204.3,39.6 205.2,42.7 206.1,41.9 207.1,43.1 208.0,39.6 208.9,43.3 209.9,39.6 210.8,41.3 211.7,39.6 212.7,39.6 213.6,39.6 214.6,39.6 215.5,39.6 216.4,39.6 217.4,39.6 218.3,40.8 219.2,41.5 220.2,39.6 221.1,39.6 222.0,39.6 223.0,39.6 223.9,41.1 224.9,39.6 225.8,39.6 226.7,42.2 227.7,39.6 228.6,41.0 229.5,39.6" fill="none" stroke="#70AD47" stroke-width="0.95" stroke-linejoin="round" opacity="0.9"/>
<polyline points="186.5,39.6 187.4,43.3 188.3,42.6 189.3,39.6 190.2,39.6 191.1,40.3 192.1,39.6 193.0,39.6 194.0,39.6 194.9,39.6 195.8,39.6 196.8,40.4 197.7,43.1 198.6,41.0 199.6,39.6 200.5,42.2 201.4,41.1 202.4,39.6 203.3,39.6 204.3,39.6 205.2,42.9 206.1,41.9 207.1,42.4 208.0,39.6 208.9,43.4 209.9,42.0 210.8,41.3 211.7,39.6 212.7,40.1 213.6,39.6 214.6,39.6 215.5,39.6 216.4,39.6 217.4,39.6 218.3,41.5 219.2,40.6 220.2,39.6 221.1,39.6 222.0,39.6 223.0,39.6 223.9,41.7 224.9,39.6 225.8,39.6 226.7,42.7 227.7,39.6 228.6,40.8 229.5,39.6" fill="none" stroke="#264478" stroke-width="0.95" stroke-linejoin="round" opacity="0.9"/>
<polyline points="186.5,39.6 187.4,43.3 188.3,42.6 189.3,39.6 190.2,39.6 191.1,39.6 192.1,39.6 193.0,39.6 194.0,40.6 194.9,39.6 195.8,39.6 196.8,41.1 197.7,42.7 198.6,41.1 199.6,39.6 200.5,40.8 201.4,41.3 202.4,39.6 203.3,39.6 204.3,39.6 205.2,43.1 206.1,42.2 207.1,42.9 208.0,39.6 208.9,43.4 209.9,41.5 210.8,41.7 211.7,39.6 212.7,39.6 213.6,39.6 214.6,39.6 215.5,39.6 216.4,39.6 217.4,39.6 218.3,40.3 219.2,41.0 220.2,39.6 221.1,42.4 222.0,39.6 223.0,39.6 223.9,41.9 224.9,40.1 225.8,39.6 226.7,42.0 227.7,39.6 228.6,40.4 229.5,39.6" fill="none" stroke="#9E480E" stroke-width="0.95" stroke-linejoin="round" opacity="0.9"/>
<polyline points="186.5,39.6 187.4,43.3 188.3,42.2 189.3,39.6 190.2,39.6 191.1,39.6 192.1,39.6 193.0,39.6 194.0,40.1 194.9,39.6 195.8,39.6 196.8,42.0 197.7,42.6 198.6,40.3 199.6,39.6 200.5,40.6 201.4,40.8 202.4,39.6 203.3,39.6 204.3,42.7 205.2,42.9 206.1,41.3 207.1,43.1 208.0,40.4 208.9,43.4 209.9,41.1 210.8,41.7 211.7,39.6 212.7,39.6 213.6,39.6 214.6,39.6 215.5,39.6 216.4,39.6 217.4,39.6 218.3,39.6 219.2,41.9 220.2,39.6 221.1,42.4 222.0,39.6 223.0,39.6 223.9,41.5 224.9,39.6 225.8,39.6 226.7,41.0 227.7,39.6 228.6,39.6 229.5,39.6" fill="none" stroke="#636363" stroke-width="0.95" stroke-linejoin="round" opacity="0.9"/>
<polyline points="186.5,39.6 187.4,43.4 188.3,42.2 189.3,39.6 190.2,39.6 191.1,41.9 192.1,39.6 193.0,40.8 194.0,39.6 194.9,39.6 195.8,39.6 196.8,41.1 197.7,42.6 198.6,39.6 199.6,39.6 200.5,40.3 201.4,41.0 202.4,41.3 203.3,39.6 204.3,40.4 205.2,42.7 206.1,40.1 207.1,43.3 208.0,39.6 208.9,43.1 209.9,41.5 210.8,42.9 211.7,39.6 212.7,39.6 213.6,39.6 214.6,39.6 215.5,39.6 216.4,39.6 217.4,39.6 218.3,39.6 219.2,41.7 220.2,39.6 221.1,40.6 222.0,39.6 223.0,39.6 223.9,42.0 224.9,39.6 225.8,39.6 226.7,42.4 227.7,39.6 228.6,39.6 229.5,39.6" fill="none" stroke="#997300" stroke-width="0.95" stroke-linejoin="round" opacity="0.9"/>
<polyline points="186.5,39.6 187.4,43.3 188.3,40.8 189.3,39.6 190.2,41.3 191.1,42.6 192.1,39.6 193.0,40.6 194.0,39.6 194.9,39.6 195.8,39.6 196.8,41.5 197.7,42.9 198.6,39.6 199.6,39.6 200.5,39.6 201.4,42.4 202.4,41.1 203.3,39.6 204.3,39.6 205.2,41.0 206.1,39.6 207.1,42.7 208.0,42.0 208.9,43.4 209.9,41.7 210.8,43.1 211.7,39.6 212.7,39.6 213.6,39.6 214.6,39.6 215.5,39.6 216.4,39.6 217.4,39.6 218.3,39.6 219.2,42.2 220.2,39.6 221.1,40.1 222.0,39.6 223.0,39.6 223.9,41.9 224.9,39.6 225.8,40.3 226.7,40.4 227.7,39.6 228.6,39.6 229.5,39.6" fill="none" stroke="#255E91" stroke-width="0.95" stroke-linejoin="round" opacity="0.9"/>
<polyline points="186.5,39.6 187.4,43.4 188.3,42.6 189.3,39.6 190.2,41.9 191.1,41.0 192.1,39.6 193.0,42.2 194.0,39.6 194.9,39.6 195.8,39.6 196.8,42.4 197.7,43.3 198.6,39.6 199.6,39.6 200.5,39.6 201.4,40.6 202.4,42.0 203.3,39.6 204.3,39.6 205.2,40.3 206.1,40.4 207.1,42.9 208.0,40.8 208.9,43.1 209.9,41.7 210.8,42.7 211.7,39.6 212.7,39.6 213.6,39.6 214.6,41.3 215.5,39.6 216.4,39.6 217.4,39.6 218.3,39.6 219.2,41.5 220.2,39.6 221.1,39.6 222.0,39.6 223.0,39.6 223.9,41.1 224.9,39.6 225.8,39.6 226.7,39.6 227.7,39.6 228.6,39.6 229.5,40.1" fill="none" stroke="#43682B" stroke-width="0.95" stroke-linejoin="round" opacity="0.9"/>
<polyline points="186.5,39.6 187.4,43.3 188.3,41.9 189.3,39.6 190.2,41.5 191.1,41.0 192.1,39.6 193.0,42.6 194.0,39.6 194.9,39.6 195.8,39.6 196.8,41.7 197.7,43.4 198.6,39.6 199.6,40.4 200.5,39.6 201.4,42.9 202.4,41.3 203.3,39.6 204.3,39.6 205.2,39.6 206.1,39.6 207.1,42.7 208.0,42.2 208.9,43.1 209.9,42.4 210.8,41.1 211.7,40.3 212.7,39.6 213.6,39.6 214.6,40.8 215.5,39.6 216.4,39.6 217.4,39.6 218.3,39.6 219.2,40.1 220.2,39.6 221.1,39.6 222.0,39.6 223.0,39.6 223.9,42.0 224.9,39.6 225.8,40.6 226.7,39.6 227.7,39.6 228.6,39.6 229.5,39.6" fill="none" stroke="#698ED0" stroke-width="0.95" stroke-linejoin="round" opacity="0.9"/>
<polyline points="186.5,39.6 187.4,42.9 188.3,40.8 189.3,39.6 190.2,40.4 191.1,42.6 192.1,39.6 193.0,42.2 194.0,39.6 194.9,39.6 195.8,39.6 196.8,41.3 197.7,43.4 198.6,39.6 199.6,39.6 200.5,39.6 201.4,41.7 202.4,41.5 203.3,39.6 204.3,39.6 205.2,39.6 206.1,39.6 207.1,43.1 208.0,41.0 208.9,43.3 209.9,41.1 210.8,42.4 211.7,39.6 212.7,39.6 213.6,39.6 214.6,40.6 215.5,39.6 216.4,39.6 217.4,39.6 218.3,39.6 219.2,39.6 220.2,39.6 221.1,40.1 222.0,39.6 223.0,39.6 223.9,42.7 224.9,39.6 225.8,40.3 226.7,42.0 227.7,41.9 228.6,39.6 229.5,39.6" fill="none" stroke="#F1975A" stroke-width="0.95" stroke-linejoin="round" opacity="0.9"/>
<polyline points="186.5,39.6 187.4,42.9 188.3,41.7 189.3,39.6 190.2,39.6 191.1,41.9 192.1,39.6 193.0,42.4 194.0,39.6 194.9,39.6 195.8,39.6 196.8,40.3 197.7,43.3 198.6,39.6 199.6,39.6 200.5,39.6 201.4,42.6 202.4,40.8 203.3,39.6 204.3,39.6 205.2,39.6 206.1,39.6 207.1,43.1 208.0,41.1 208.9,43.4 209.9,41.5 210.8,41.3 211.7,39.6 212.7,39.6 213.6,39.6 214.6,42.0 215.5,39.6 216.4,42.2 217.4,40.4 218.3,39.6 219.2,39.6 220.2,39.6 221.1,39.6 222.0,39.6 223.0,39.6 223.9,42.7 224.9,40.1 225.8,39.6 226.7,41.0 227.7,40.6 228.6,39.6 229.5,39.6" fill="none" stroke="#B7B7B7" stroke-width="0.95" stroke-linejoin="round" opacity="0.9"/>
<polyline points="186.5,39.6 187.4,43.1 188.3,42.6 189.3,39.6 190.2,40.3 191.1,42.4 192.1,39.6 193.0,40.8 194.0,39.6 194.9,39.6 195.8,39.6 196.8,39.6 197.7,43.3 198.6,39.6 199.6,39.6 200.5,40.1 201.4,42.7 202.4,40.6 203.3,39.6 204.3,39.6 205.2,39.6 206.1,39.6 207.1,42.9 208.0,42.0 208.9,43.4 209.9,41.3 210.8,41.5 211.7,39.6 212.7,39.6 213.6,39.6 214.6,42.2 215.5,39.6 216.4,40.4 217.4,39.6 218.3,39.6 219.2,39.6 220.2,39.6 221.1,41.0 222.0,39.6 223.0,39.6 223.9,41.7 224.9,39.6 225.8,39.6 226.7,41.9 227.7,41.1 228.6,39.6 229.5,39.6" fill="none" stroke="#FFCD33" stroke-width="0.95" stroke-linejoin="round" opacity="0.9"/>
<polyline points="186.5,39.6 187.4,42.9 188.3,42.6 189.3,39.6 190.2,39.6 191.1,41.0 192.1,39.6 193.0,41.3 194.0,39.6 194.9,39.6 195.8,39.6 196.8,39.6 197.7,43.1 198.6,39.6 199.6,39.6 200.5,39.6 201.4,42.7 202.4,42.4 203.3,40.6 204.3,39.6 205.2,39.6 206.1,39.6 207.1,43.3 208.0,41.9 208.9,43.4 209.9,40.3 210.8,40.4 211.7,39.6 212.7,39.6 213.6,39.6 214.6,41.1 215.5,39.6 216.4,39.6 217.4,39.6 218.3,39.6 219.2,39.6 220.2,41.5 221.1,40.8 222.0,39.6 223.0,39.6 223.9,42.2 224.9,39.6 225.8,40.1 226.7,42.0 227.7,41.7 228.6,39.6 229.5,39.6" fill="none" stroke="#7CAFDD" stroke-width="0.95" stroke-linejoin="round" opacity="0.9"/>
<polyline points="186.5,39.6 187.4,43.1 188.3,42.6 189.3,39.6 190.2,42.0 191.1,41.9 192.1,39.6 193.0,41.1 194.0,39.6 194.9,40.4 195.8,39.6 196.8,39.6 197.7,43.4 198.6,39.6 199.6,39.6 200.5,39.6 201.4,42.2 202.4,41.5 203.3,40.3 204.3,39.6 205.2,39.6 206.1,39.6 207.1,42.4 208.0,42.7 208.9,43.3 209.9,39.6 210.8,39.6 211.7,39.6 212.7,39.6 213.6,39.6 214.6,40.1 215.5,39.6 216.4,39.6 217.4,39.6 218.3,39.6 219.2,39.6 220.2,41.7 221.1,41.3 222.0,39.6 223.0,39.6 223.9,42.9 224.9,39.6 225.8,39.6 226.7,40.6 227.7,40.8 228.6,39.6 229.5,41.0" fill="none" stroke="#8CC168" stroke-width="0.95" stroke-linejoin="round" opacity="0.9"/>
<polyline points="186.5,39.6 187.4,42.9 188.3,42.0 189.3,39.6 190.2,40.4 191.1,41.0 192.1,40.3 193.0,41.1 194.0,39.6 194.9,39.6 195.8,39.6 196.8,39.6 197.7,43.3 198.6,39.6 199.6,39.6 200.5,39.6 201.4,42.4 202.4,42.2 203.3,39.6 204.3,39.6 205.2,39.6 206.1,39.6 207.1,42.6 208.0,43.1 208.9,43.4 209.9,39.6 210.8,41.5 211.7,39.6 212.7,39.6 213.6,39.6 214.6,39.6 215.5,39.6 216.4,39.6 217.4,39.6 218.3,39.6 219.2,39.6 220.2,41.3 221.1,41.9 222.0,39.6 223.0,39.6 223.9,42.7 224.9,39.6 225.8,41.7 226.7,40.1 227.7,40.8 228.6,39.6 229.5,40.6" fill="none" stroke="#335AA1" stroke-width="0.95" stroke-linejoin="round" opacity="0.9"/>
<polyline points="186.5,39.6 187.4,43.1 188.3,40.8 189.3,39.6 190.2,39.6 191.1,40.3 192.1,39.6 193.0,40.4 194.0,39.6 194.9,39.6 195.8,39.6 196.8,39.6 197.7,42.6 198.6,39.6 199.6,39.6 200.5,39.6 201.4,42.4 202.4,42.0 203.3,39.6 204.3,39.6 205.2,39.6 206.1,39.6 207.1,42.2 208.0,43.4 208.9,43.3 209.9,39.6 210.8,42.7 211.7,41.5 212.7,39.6 213.6,39.6 214.6,39.6 215.5,40.6 216.4,39.6 217.4,39.6 218.3,39.6 219.2,39.6 220.2,41.1 221.1,41.3 222.0,41.7 223.0,39.6 223.9,42.9 224.9,39.6 225.8,41.9 226.7,39.6 227.7,41.0 228.6,39.6 229.5,40.1" fill="none" stroke="#D26012" stroke-width="0.95" stroke-linejoin="round" opacity="0.9"/>
<polyline points="186.5,39.6 187.4,42.9 188.3,41.0 189.3,39.6 190.2,39.6 191.1,39.6 192.1,39.6 193.0,39.6 194.0,39.6 194.9,39.6 195.8,39.6 196.8,39.6 197.7,43.1 198.6,39.6 199.6,39.6 200.5,39.6 201.4,42.6 202.4,41.5 203.3,39.6 204.3,39.6 205.2,39.6 206.1,39.6 207.1,42.4 208.0,43.3 208.9,43.4 209.9,39.6 210.8,40.8 211.7,41.7 212.7,39.6 213.6,39.6 214.6,39.6 215.5,40.1 216.4,40.3 217.4,39.6 218.3,39.6 219.2,41.1 220.2,41.3 221.1,40.6 222.0,42.0 223.0,39.6 223.9,42.7 224.9,39.6 225.8,42.2 226.7,41.9 227.7,40.4 228.6,39.6 229.5,39.6" fill="none" stroke="#848484" stroke-width="0.95" stroke-linejoin="round" opacity="0.9"/>
<polyline points="186.5,39.6 187.4,42.9 188.3,41.0 189.3,39.6 190.2,39.6 191.1,39.6 192.1,39.6 193.0,39.6 194.0,39.6 194.9,39.6 195.8,40.1 196.8,39.6 197.7,43.1 198.6,39.6 199.6,41.7 200.5,39.6 201.4,42.7 202.4,40.3 203.3,40.8 204.3,39.6 205.2,39.6 206.1,39.6 207.1,43.3 208.0,43.4 208.9,42.4 209.9,39.6 210.8,41.9 211.7,40.4 212.7,39.6 213.6,39.6 214.6,39.6 215.5,39.6 216.4,39.6 217.4,39.6 218.3,39.6 219.2,42.2 220.2,42.0 221.1,41.1 222.0,41.5 223.0,39.6 223.9,42.6 224.9,39.6 225.8,40.6 226.7,41.3 227.7,39.6 228.6,39.6 229.5,39.6" fill="none" stroke="#CC9A00" stroke-width="0.95" stroke-linejoin="round" opacity="0.9"/>
<polyline points="186.5,39.6 187.4,43.1 188.3,40.6 189.3,39.6 190.2,39.6 191.1,39.6 192.1,39.6 193.0,39.6 194.0,39.6 194.9,40.3 195.8,39.6 196.8,39.6 197.7,43.4 198.6,39.6 199.6,41.9 200.5,39.6 201.4,41.7 202.4,39.6 203.3,40.4 204.3,39.6 205.2,39.6 206.1,41.1 207.1,42.6 208.0,43.3 208.9,42.9 209.9,39.6 210.8,41.0 211.7,39.6 212.7,39.6 213.6,39.6 214.6,39.6 215.5,40.1 216.4,39.6 217.4,39.6 218.3,39.6 219.2,42.4 220.2,42.0 221.1,40.8 222.0,42.2 223.0,39.6 223.9,42.7 224.9,39.6 225.8,41.3 226.7,41.5 227.7,39.6 228.6,39.6 229.5,39.6" fill="none" stroke="#327DC2" stroke-width="0.95" stroke-linejoin="round" opacity="0.9"/>
<polyline points="186.5,40.8 187.4,43.3 188.3,40.1 189.3,39.6 190.2,39.6 191.1,39.6 192.1,39.6 193.0,39.6 194.0,39.6 194.9,39.6 195.8,39.6 196.8,39.6 197.7,41.9 198.6,39.6 199.6,41.0 200.5,39.6 201.4,41.7 202.4,39.6 203.3,39.6 204.3,39.6 205.2,39.6 206.1,43.4 207.1,42.2 208.0,42.9 208.9,42.7 209.9,39.6 210.8,40.4 211.7,40.3 212.7,39.6 213.6,39.6 214.6,39.6 215.5,39.6 216.4,39.6 217.4,39.6 218.3,39.6 219.2,42.6 220.2,42.0 221.1,40.6 222.0,41.5 223.0,39.6 223.9,43.1 224.9,41.3 225.8,41.1 226.7,42.4 227.7,39.6 228.6,39.6 229.5,39.6" fill="none" stroke="#5A8A39" stroke-width="0.95" stroke-linejoin="round" opacity="0.9"/>
<rect x="186.5" y="44" width="0.5" height="1.8" fill="#b5b5b5" opacity="0.7"/>
<rect x="188.3" y="44" width="0.5" height="2.7" fill="#b5b5b5" opacity="0.7"/>
<rect x="190.2" y="44" width="0.5" height="2.1" fill="#b5b5b5" opacity="0.7"/>
<rect x="192.0" y="44" width="0.5" height="3.0" fill="#b5b5b5" opacity="0.7"/>
<rect x="193.8" y="44" width="0.5" height="2.4" fill="#b5b5b5" opacity="0.7"/>
<rect x="195.7" y="44" width="0.5" height="1.8" fill="#b5b5b5" opacity="0.7"/>
<rect x="197.5" y="44" width="0.5" height="2.7" fill="#b5b5b5" opacity="0.7"/>
<rect x="199.3" y="44" width="0.5" height="2.1" fill="#b5b5b5" opacity="0.7"/>
<rect x="201.1" y="44" width="0.5" height="3.0" fill="#b5b5b5" opacity="0.7"/>
<rect x="203.0" y="44" width="0.5" height="2.4" fill="#b5b5b5" opacity="0.7"/>
<rect x="204.8" y="44" width="0.5" height="1.8" fill="#b5b5b5" opacity="0.7"/>
<rect x="206.6" y="44" width="0.5" height="2.7" fill="#b5b5b5" opacity="0.7"/>
<rect x="208.5" y="44" width="0.5" height="2.1" fill="#b5b5b5" opacity="0.7"/>
<rect x="210.3" y="44" width="0.5" height="3.0" fill="#b5b5b5" opacity="0.7"/>
<rect x="212.1" y="44" width="0.5" height="2.4" fill="#b5b5b5" opacity="0.7"/>
<rect x="213.9" y="44" width="0.5" height="1.8" fill="#b5b5b5" opacity="0.7"/>
<rect x="215.8" y="44" width="0.5" height="2.7" fill="#b5b5b5" opacity="0.7"/>
<rect x="217.6" y="44" width="0.5" height="2.1" fill="#b5b5b5" opacity="0.7"/>
<rect x="219.4" y="44" width="0.5" height="3.0" fill="#b5b5b5" opacity="0.7"/>
<rect x="221.3" y="44" width="0.5" height="2.4" fill="#b5b5b5" opacity="0.7"/>
<rect x="223.1" y="44" width="0.5" height="1.8" fill="#b5b5b5" opacity="0.7"/>
<rect x="224.9" y="44" width="0.5" height="2.7" fill="#b5b5b5" opacity="0.7"/>
<rect x="226.8" y="44" width="0.5" height="2.1" fill="#b5b5b5" opacity="0.7"/>
<rect x="228.6" y="44" width="0.5" height="3.0" fill="#b5b5b5" opacity="0.7"/>
<rect x="186.0" y="50.4" width="3" height="0.7" fill="#4472C4" opacity="0.55"/>
<rect x="189.4" y="50.4" width="4.2" height="0.6" fill="#9a9a9a" opacity="0.4"/>
<rect x="194.8" y="50.4" width="3" height="0.7" fill="#ED7D31" opacity="0.55"/>
<rect x="198.2" y="50.4" width="4.2" height="0.6" fill="#9a9a9a" opacity="0.4"/>
<rect x="203.6" y="50.4" width="3" height="0.7" fill="#A5A5A5" opacity="0.55"/>
<rect x="207.0" y="50.4" width="4.2" height="0.6" fill="#9a9a9a" opacity="0.4"/>
<rect x="212.4" y="50.4" width="3" height="0.7" fill="#FFC000" opacity="0.55"/>
<rect x="215.8" y="50.4" width="4.2" height="0.6" fill="#9a9a9a" opacity="0.4"/>
<rect x="221.2" y="50.4" width="3" height="0.7" fill="#5B9BD5" opacity="0.55"/>
<rect x="224.6" y="50.4" width="4.2" height="0.6" fill="#9a9a9a" opacity="0.4"/>
<rect x="186.0" y="53.0" width="3" height="0.7" fill="#70AD47" opacity="0.55"/>
<rect x="189.4" y="53.1" width="4.2" height="0.6" fill="#9a9a9a" opacity="0.4"/>
<rect x="194.8" y="53.0" width="3" height="0.7" fill="#264478" opacity="0.55"/>
<rect x="198.2" y="53.1" width="4.2" height="0.6" fill="#9a9a9a" opacity="0.4"/>
<rect x="203.6" y="53.0" width="3" height="0.7" fill="#9E480E" opacity="0.55"/>
<rect x="207.0" y="53.1" width="4.2" height="0.6" fill="#9a9a9a" opacity="0.4"/>
<rect x="212.4" y="53.0" width="3" height="0.7" fill="#636363" opacity="0.55"/>
<rect x="215.8" y="53.1" width="4.2" height="0.6" fill="#9a9a9a" opacity="0.4"/>
<rect x="221.2" y="53.0" width="3" height="0.7" fill="#997300" opacity="0.55"/>
<rect x="224.6" y="53.1" width="4.2" height="0.6" fill="#9a9a9a" opacity="0.4"/>
<rect x="186.0" y="55.6" width="3" height="0.7" fill="#255E91" opacity="0.55"/>
<rect x="189.4" y="55.7" width="4.2" height="0.6" fill="#9a9a9a" opacity="0.4"/>
<rect x="194.8" y="55.6" width="3" height="0.7" fill="#43682B" opacity="0.55"/>
<rect x="198.2" y="55.7" width="4.2" height="0.6" fill="#9a9a9a" opacity="0.4"/>
<rect x="203.6" y="55.6" width="3" height="0.7" fill="#698ED0" opacity="0.55"/>
<rect x="207.0" y="55.7" width="4.2" height="0.6" fill="#9a9a9a" opacity="0.4"/>
<rect x="212.4" y="55.6" width="3" height="0.7" fill="#F1975A" opacity="0.55"/>
<rect x="215.8" y="55.7" width="4.2" height="0.6" fill="#9a9a9a" opacity="0.4"/>
<rect x="221.2" y="55.6" width="3" height="0.7" fill="#B7B7B7" opacity="0.55"/>
<rect x="224.6" y="55.7" width="4.2" height="0.6" fill="#9a9a9a" opacity="0.4"/>
<rect x="186.0" y="58.3" width="3" height="0.7" fill="#FFCD33" opacity="0.55"/>
<rect x="189.4" y="58.4" width="4.2" height="0.6" fill="#9a9a9a" opacity="0.4"/>
<rect x="194.8" y="58.3" width="3" height="0.7" fill="#7CAFDD" opacity="0.55"/>
<rect x="198.2" y="58.4" width="4.2" height="0.6" fill="#9a9a9a" opacity="0.4"/>
<rect x="203.6" y="58.3" width="3" height="0.7" fill="#8CC168" opacity="0.55"/>
<rect x="207.0" y="58.4" width="4.2" height="0.6" fill="#9a9a9a" opacity="0.4"/>
<rect x="212.4" y="58.3" width="3" height="0.7" fill="#335AA1" opacity="0.55"/>
<rect x="215.8" y="58.4" width="4.2" height="0.6" fill="#9a9a9a" opacity="0.4"/>
<rect x="221.2" y="58.3" width="3" height="0.7" fill="#D26012" opacity="0.55"/>
<rect x="224.6" y="58.4" width="4.2" height="0.6" fill="#9a9a9a" opacity="0.4"/>
<rect x="186.0" y="61.0" width="3" height="0.7" fill="#848484" opacity="0.55"/>
<rect x="189.4" y="61.0" width="4.2" height="0.6" fill="#9a9a9a" opacity="0.4"/>
<rect x="194.8" y="61.0" width="3" height="0.7" fill="#CC9A00" opacity="0.55"/>
<rect x="198.2" y="61.0" width="4.2" height="0.6" fill="#9a9a9a" opacity="0.4"/>
<rect x="203.6" y="61.0" width="3" height="0.7" fill="#327DC2" opacity="0.55"/>
<rect x="207.0" y="61.0" width="4.2" height="0.6" fill="#9a9a9a" opacity="0.4"/>
<rect x="212.4" y="61.0" width="3" height="0.7" fill="#5A8A39" opacity="0.55"/>
<rect x="215.8" y="61.0" width="4.2" height="0.6" fill="#9a9a9a" opacity="0.4"/>
<rect x="243" y="32.4" width="50" height="30" fill="#fff" stroke="#ececec" stroke-width="0.5"/>
<text x="268" y="36.6" font-size="2.4" fill="#a5a5a5" text-anchor="middle" font-family="Liberation Sans, sans-serif">Chart Title</text>
<polyline points="247.5,40.0 248.4,42.3 249.3,43.7 250.3,40.0 251.2,40.0 252.1,43.3 253.1,40.0 254.0,40.0 255.0,40.0 255.9,40.0 256.8,40.0 257.8,40.0 258.7,42.1 259.6,41.4 260.6,40.5 261.5,40.0 262.4,41.7 263.4,40.0 264.3,40.0 265.3,41.2 266.2,41.0 267.1,40.0 268.1,43.0 269.0,42.4 269.9,43.8 270.9,40.3 271.8,40.0 272.7,43.5 273.7,40.1 274.6,40.7 275.6,40.0 276.5,43.1 277.4,40.0 278.4,41.5 279.3,42.8 280.2,40.8 281.2,40.0 282.1,40.0 283.0,40.0 284.0,40.0 284.9,42.6 285.9,40.0 286.8,40.0 287.7,40.0 288.7,40.0 289.6,41.9 290.5,40.0" fill="none" stroke="#4472C4" stroke-width="0.95" stroke-linejoin="round" opacity="0.9"/>
<polyline points="247.5,40.0 248.4,43.3 249.3,42.3 250.3,40.0 251.2,40.0 252.1,43.7 253.1,40.0 254.0,40.0 255.0,40.0 255.9,40.0 256.8,40.0 257.8,40.0 258.7,41.5 259.6,42.1 260.6,40.0 261.5,40.0 262.4,41.0 263.4,40.0 264.3,40.0 265.3,40.7 266.2,43.1 267.1,40.0 268.1,42.6 269.0,41.2 269.9,43.8 270.9,40.0 271.8,43.5 272.7,41.9 273.7,40.0 274.6,40.3 275.6,40.0 276.5,42.4 277.4,40.0 278.4,40.5 279.3,42.8 280.2,40.8 281.2,40.0 282.1,40.0 283.0,40.0 284.0,40.1 284.9,41.4 285.9,40.0 286.8,40.0 287.7,41.7 288.7,40.0 289.6,43.0 290.5,40.0" fill="none" stroke="#ED7D31" stroke-width="0.95" stroke-linejoin="round" opacity="0.9"/>
<polyline points="247.5,40.0 248.4,41.9 249.3,40.8 250.3,40.0 251.2,40.0 252.1,43.8 253.1,40.0 254.0,40.0 255.0,40.0 255.9,40.0 256.8,40.0 257.8,40.0 258.7,42.1 259.6,41.2 260.6,40.7 261.5,40.0 262.4,41.4 263.4,40.0 264.3,40.0 265.3,40.1 266.2,43.1 267.1,40.3 268.1,43.3 269.0,41.0 269.9,43.7 270.9,40.0 271.8,43.0 272.7,40.5 273.7,43.5 274.6,40.0 275.6,40.0 276.5,42.6 277.4,40.0 278.4,40.0 279.3,41.7 280.2,42.3 281.2,40.0 282.1,40.0 283.0,40.0 284.0,40.0 284.9,42.8 285.9,40.0 286.8,40.0 287.7,41.5 288.7,40.0 289.6,42.4 290.5,40.0" fill="none" stroke="#A5A5A5" stroke-width="0.95" stroke-linejoin="round" opacity="0.9"/>
<polyline points="247.5,40.0 248.4,43.1 249.3,43.3 250.3,40.0 251.2,40.0 252.1,42.8 253.1,40.0 254.0,40.5 255.0,40.0 255.9,40.0 256.8,40.0 257.8,40.0 258.7,42.1 259.6,41.2 260.6,40.0 261.5,40.0 262.4,43.0 263.4,40.0 264.3,40.0 265.3,40.0 266.2,41.7 267.1,40.0 268.1,43.5 269.0,40.8 269.9,43.8 270.9,41.9 271.8,43.7 272.7,40.0 273.7,42.4 274.6,40.0 275.6,40.0 276.5,40.7 277.4,40.0 278.4,40.0 279.3,41.4 280.2,41.0 281.2,40.0 282.1,40.0 283.0,40.0 284.0,40.0 284.9,42.6 285.9,40.0 286.8,40.0 287.7,42.3 288.7,40.0 289.6,41.5 290.5,40.0" fill="none" stroke="#FFC000" stroke-width="0.95" stroke-linejoin="round" opacity="0.9"/>
<polyline points="247.5,40.0 248.4,43.5 249.3,43.1 250.3,40.0 251.2,40.0 252.1,41.7 253.1,40.0 254.0,40.0 255.0,40.0 255.9,40.0 256.8,40.0 257.8,41.4 258.7,43.0 259.6,41.0 260.6,40.0 261.5,41.9 262.4,41.4 263.4,40.0 264.3,40.0 265.3,40.0 266.2,42.1 267.1,42.4 268.1,43.3 269.0,40.0 269.9,43.8 270.9,40.7 271.8,43.7 272.7,40.0 273.7,40.5 274.6,40.0 275.6,40.0 276.5,40.0 277.4,40.0 278.4,40.0 279.3,42.8 280.2,41.2 281.2,40.0 282.1,40.8 283.0,40.0 284.0,40.0 284.9,42.3 285.9,40.0 286.8,40.0 287.7,41.5 288.7,40.0 289.6,42.6 290.5,40.0" fill="none" stroke="#5B9BD5" stroke-width="0.95" stroke-linejoin="round" opacity="0.9"/>
<polyline points="247.5,40.0 248.4,43.8 249.3,42.8 250.3,40.7 251.2,40.0 252.1,43.0 253.1,40.0 254.0,40.8 255.0,40.0 255.9,40.0 256.8,40.0 257.8,40.0 258.7,43.3 259.6,42.1 260.6,40.5 261.5,42.4 262.4,41.0 263.4,40.0 264.3,40.0 265.3,40.0 266.2,43.1 267.1,42.3 268.1,43.5 269.0,40.0 269.9,43.7 270.9,40.0 271.8,41.7 272.7,40.0 273.7,40.0 274.6,40.0 275.6,40.0 276.5,40.0 277.4,40.0 278.4,40.0 279.3,41.2 280.2,41.9 281.2,40.0 282.1,40.0 283.0,40.0 284.0,40.0 284.9,41.5 285.9,40.0 286.8,40.0 287.7,42.6 288.7,40.0 289.6,41.4 290.5,40.0" fill="none" stroke="#70AD47" stroke-width="0.95" stroke-linejoin="round" opacity="0.9"/>
<polyline points="247.5,40.0 248.4,43.7 249.3,43.0 250.3,40.0 251.2,40.0 252.1,40.7 253.1,40.0 254.0,40.0 255.0,40.0 255.9,40.0 256.8,40.0 257.8,40.8 258.7,43.5 259.6,41.4 260.6,40.0 261.5,42.6 262.4,41.5 263.4,40.0 264.3,40.0 265.3,40.0 266.2,43.3 267.1,42.3 268.1,42.8 269.0,40.0 269.9,43.8 270.9,42.4 271.8,41.7 272.7,40.0 273.7,40.5 274.6,40.0 275.6,40.0 276.5,40.0 277.4,40.0 278.4,40.0 279.3,41.9 280.2,41.0 281.2,40.0 282.1,40.0 283.0,40.0 284.0,40.0 284.9,42.1 285.9,40.0 286.8,40.0 287.7,43.1 288.7,40.0 289.6,41.2 290.5,40.0" fill="none" stroke="#264478" stroke-width="0.95" stroke-linejoin="round" opacity="0.9"/>
<polyline points="247.5,40.0 248.4,43.7 249.3,43.0 250.3,40.0 251.2,40.0 252.1,40.0 253.1,40.0 254.0,40.0 255.0,41.0 255.9,40.0 256.8,40.0 257.8,41.5 258.7,43.1 259.6,41.5 260.6,40.0 261.5,41.2 262.4,41.7 263.4,40.0 264.3,40.0 265.3,40.0 266.2,43.5 267.1,42.6 268.1,43.3 269.0,40.0 269.9,43.8 270.9,41.9 271.8,42.1 272.7,40.0 273.7,40.0 274.6,40.0 275.6,40.0 276.5,40.0 277.4,40.0 278.4,40.0 279.3,40.7 280.2,41.4 281.2,40.0 282.1,42.8 283.0,40.0 284.0,40.0 284.9,42.3 285.9,40.5 286.8,40.0 287.7,42.4 288.7,40.0 289.6,40.8 290.5,40.0" fill="none" stroke="#9E480E" stroke-width="0.95" stroke-linejoin="round" opacity="0.9"/>
<polyline points="247.5,40.0 248.4,43.7 249.3,42.6 250.3,40.0 251.2,40.0 252.1,40.0 253.1,40.0 254.0,40.0 255.0,40.5 255.9,40.0 256.8,40.0 257.8,42.4 258.7,43.0 259.6,40.7 260.6,40.0 261.5,41.0 262.4,41.2 263.4,40.0 264.3,40.0 265.3,43.1 266.2,43.3 267.1,41.7 268.1,43.5 269.0,40.8 269.9,43.8 270.9,41.5 271.8,42.1 272.7,40.0 273.7,40.0 274.6,40.0 275.6,40.0 276.5,40.0 277.4,40.0 278.4,40.0 279.3,40.0 280.2,42.3 281.2,40.0 282.1,42.8 283.0,40.0 284.0,40.0 284.9,41.9 285.9,40.0 286.8,40.0 287.7,41.4 288.7,40.0 289.6,40.0 290.5,40.0" fill="none" stroke="#636363" stroke-width="0.95" stroke-linejoin="round" opacity="0.9"/>
<polyline points="247.5,40.0 248.4,43.8 249.3,42.6 250.3,40.0 251.2,40.0 252.1,42.3 253.1,40.0 254.0,41.2 255.0,40.0 255.9,40.0 256.8,40.0 257.8,41.5 258.7,43.0 259.6,40.0 260.6,40.0 261.5,40.7 262.4,41.4 263.4,41.7 264.3,40.0 265.3,40.8 266.2,43.1 267.1,40.5 268.1,43.7 269.0,40.0 269.9,43.5 270.9,41.9 271.8,43.3 272.7,40.0 273.7,40.0 274.6,40.0 275.6,40.0 276.5,40.0 277.4,40.0 278.4,40.0 279.3,40.0 280.2,42.1 281.2,40.0 282.1,41.0 283.0,40.0 284.0,40.0 284.9,42.4 285.9,40.0 286.8,40.0 287.7,42.8 288.7,40.0 289.6,40.0 290.5,40.0" fill="none" stroke="#997300" stroke-width="0.95" stroke-linejoin="round" opacity="0.9"/>
<polyline points="247.5,40.0 248.4,43.7 249.3,41.2 250.3,40.0 251.2,41.7 252.1,43.0 253.1,40.0 254.0,41.0 255.0,40.0 255.9,40.0 256.8,40.0 257.8,41.9 258.7,43.3 259.6,40.0 260.6,40.0 261.5,40.0 262.4,42.8 263.4,41.5 264.3,40.0 265.3,40.0 266.2,41.4 267.1,40.0 268.1,43.1 269.0,42.4 269.9,43.8 270.9,42.1 271.8,43.5 272.7,40.0 273.7,40.0 274.6,40.0 275.6,40.0 276.5,40.0 277.4,40.0 278.4,40.0 279.3,40.0 280.2,42.6 281.2,40.0 282.1,40.5 283.0,40.0 284.0,40.0 284.9,42.3 285.9,40.0 286.8,40.7 287.7,40.8 288.7,40.0 289.6,40.0 290.5,40.0" fill="none" stroke="#255E91" stroke-width="0.95" stroke-linejoin="round" opacity="0.9"/>
<polyline points="247.5,40.0 248.4,43.8 249.3,43.0 250.3,40.0 251.2,42.3 252.1,41.4 253.1,40.0 254.0,42.6 255.0,40.0 255.9,40.0 256.8,40.0 257.8,42.8 258.7,43.7 259.6,40.0 260.6,40.0 261.5,40.0 262.4,41.0 263.4,42.4 264.3,40.0 265.3,40.0 266.2,40.7 267.1,40.8 268.1,43.3 269.0,41.2 269.9,43.5 270.9,42.1 271.8,43.1 272.7,40.0 273.7,40.0 274.6,40.0 275.6,41.7 276.5,40.0 277.4,40.0 278.4,40.0 279.3,40.0 280.2,41.9 281.2,40.0 282.1,40.0 283.0,40.0 284.0,40.0 284.9,41.5 285.9,40.0 286.8,40.0 287.7,40.0 288.7,40.0 289.6,40.0 290.5,40.5" fill="none" stroke="#43682B" stroke-width="0.95" stroke-linejoin="round" opacity="0.9"/>
<polyline points="247.5,40.0 248.4,43.7 249.3,42.3 250.3,40.0 251.2,41.9 252.1,41.4 253.1,40.0 254.0,43.0 255.0,40.0 255.9,40.0 256.8,40.0 257.8,42.1 258.7,43.8 259.6,40.0 260.6,40.8 261.5,40.0 262.4,43.3 263.4,41.7 264.3,40.0 265.3,40.0 266.2,40.0 267.1,40.0 268.1,43.1 269.0,42.6 269.9,43.5 270.9,42.8 271.8,41.5 272.7,40.7 273.7,40.0 274.6,40.0 275.6,41.2 276.5,40.0 277.4,40.0 278.4,40.0 279.3,40.0 280.2,40.5 281.2,40.0 282.1,40.0 283.0,40.0 284.0,40.0 284.9,42.4 285.9,40.0 286.8,41.0 287.7,40.0 288.7,40.0 289.6,40.0 290.5,40.0" fill="none" stroke="#698ED0" stroke-width="0.95" stroke-linejoin="round" opacity="0.9"/>
<polyline points="247.5,40.0 248.4,43.3 249.3,41.2 250.3,40.0 251.2,40.8 252.1,43.0 253.1,40.0 254.0,42.6 255.0,40.0 255.9,40.0 256.8,40.0 257.8,41.7 258.7,43.8 259.6,40.0 260.6,40.0 261.5,40.0 262.4,42.1 263.4,41.9 264.3,40.0 265.3,40.0 266.2,40.0 267.1,40.0 268.1,43.5 269.0,41.4 269.9,43.7 270.9,41.5 271.8,42.8 272.7,40.0 273.7,40.0 274.6,40.0 275.6,41.0 276.5,40.0 277.4,40.0 278.4,40.0 279.3,40.0 280.2,40.0 281.2,40.0 282.1,40.5 283.0,40.0 284.0,40.0 284.9,43.1 285.9,40.0 286.8,40.7 287.7,42.4 288.7,42.3 289.6,40.0 290.5,40.0" fill="none" stroke="#F1975A" stroke-width="0.95" stroke-linejoin="round" opacity="0.9"/>
<polyline points="247.5,40.0 248.4,43.3 249.3,42.1 250.3,40.0 251.2,40.0 252.1,42.3 253.1,40.0 254.0,42.8 255.0,40.0 255.9,40.0 256.8,40.0 257.8,40.7 258.7,43.7 259.6,40.0 260.6,40.0 261.5,40.0 262.4,43.0 263.4,41.2 264.3,40.0 265.3,40.0 266.2,40.0 267.1,40.0 268.1,43.5 269.0,41.5 269.9,43.8 270.9,41.9 271.8,41.7 272.7,40.0 273.7,40.0 274.6,40.0 275.6,42.4 276.5,40.0 277.4,42.6 278.4,40.8 279.3,40.0 280.2,40.0 281.2,40.0 282.1,40.0 283.0,40.0 284.0,40.0 284.9,43.1 285.9,40.5 286.8,40.0 287.7,41.4 288.7,41.0 289.6,40.0 290.5,40.0" fill="none" stroke="#B7B7B7" stroke-width="0.95" stroke-linejoin="round" opacity="0.9"/>
<polyline points="247.5,40.0 248.4,43.5 249.3,43.0 250.3,40.0 251.2,40.7 252.1,42.8 253.1,40.0 254.0,41.2 255.0,40.0 255.9,40.0 256.8,40.0 257.8,40.0 258.7,43.7 259.6,40.0 260.6,40.0 261.5,40.5 262.4,43.1 263.4,41.0 264.3,40.0 265.3,40.0 266.2,40.0 267.1,40.0 268.1,43.3 269.0,42.4 269.9,43.8 270.9,41.7 271.8,41.9 272.7,40.0 273.7,40.0 274.6,40.0 275.6,42.6 276.5,40.0 277.4,40.8 278.4,40.0 279.3,40.0 280.2,40.0 281.2,40.0 282.1,41.4 283.0,40.0 284.0,40.0 284.9,42.1 285.9,40.0 286.8,40.0 287.7,42.3 288.7,41.5 289.6,40.0 290.5,40.0" fill="none" stroke="#FFCD33" stroke-width="0.95" stroke-linejoin="round" opacity="0.9"/>
<polyline points="247.5,40.0 248.4,43.3 249.3,43.0 250.3,40.0 251.2,40.0 252.1,41.4 253.1,40.0 254.0,41.7 255.0,40.0 255.9,40.0 256.8,40.0 257.8,40.0 258.7,43.5 259.6,40.0 260.6,40.0 261.5,40.0 262.4,43.1 263.4,42.8 264.3,41.0 265.3,40.0 266.2,40.0 267.1,40.0 268.1,43.7 269.0,42.3 269.9,43.8 270.9,40.7 271.8,40.8 272.7,40.0 273.7,40.0 274.6,40.0 275.6,41.5 276.5,40.0 277.4,40.0 278.4,40.0 279.3,40.0 280.2,40.0 281.2,41.9 282.1,41.2 283.0,40.0 284.0,40.0 284.9,42.6 285.9,40.0 286.8,40.5 287.7,42.4 288.7,42.1 289.6,40.0 290.5,40.0" fill="none" stroke="#7CAFDD" stroke-width="0.95" stroke-linejoin="round" opacity="0.9"/>
<polyline points="247.5,40.0 248.4,43.5 249.3,43.0 250.3,40.0 251.2,42.4 252.1,42.3 253.1,40.0 254.0,41.5 255.0,40.0 255.9,40.8 256.8,40.0 257.8,40.0 258.7,43.8 259.6,40.0 260.6,40.0 261.5,40.0 262.4,42.6 263.4,41.9 264.3,40.7 265.3,40.0 266.2,40.0 267.1,40.0 268.1,42.8 269.0,43.1 269.9,43.7 270.9,40.0 271.8,40.0 272.7,40.0 273.7,40.0 274.6,40.0 275.6,40.5 276.5,40.0 277.4,40.0 278.4,40.0 279.3,40.0 280.2,40.0 281.2,42.1 282.1,41.7 283.0,40.0 284.0,40.0 284.9,43.3 285.9,40.0 286.8,40.0 287.7,41.0 288.7,41.2 289.6,40.0 290.5,41.4" fill="none" stroke="#8CC168" stroke-width="0.95" stroke-linejoin="round" opacity="0.9"/>
<polyline points="247.5,40.0 248.4,43.3 249.3,42.4 250.3,40.0 251.2,40.8 252.1,41.4 253.1,40.7 254.0,41.5 255.0,40.0 255.9,40.0 256.8,40.0 257.8,40.0 258.7,43.7 259.6,40.0 260.6,40.0 261.5,40.0 262.4,42.8 263.4,42.6 264.3,40.0 265.3,40.0 266.2,40.0 267.1,40.0 268.1,43.0 269.0,43.5 269.9,43.8 270.9,40.0 271.8,41.9 272.7,40.0 273.7,40.0 274.6,40.0 275.6,40.0 276.5,40.0 277.4,40.0 278.4,40.0 279.3,40.0 280.2,40.0 281.2,41.7 282.1,42.3 283.0,40.0 284.0,40.0 284.9,43.1 285.9,40.0 286.8,42.1 287.7,40.5 288.7,41.2 289.6,40.0 290.5,41.0" fill="none" stroke="#335AA1" stroke-width="0.95" stroke-linejoin="round" opacity="0.9"/>
<polyline points="247.5,40.0 248.4,43.5 249.3,41.2 250.3,40.0 251.2,40.0 252.1,40.7 253.1,40.0 254.0,40.8 255.0,40.0 255.9,40.0 256.8,40.0 257.8,40.0 258.7,43.0 259.6,40.0 260.6,40.0 261.5,40.0 262.4,42.8 263.4,42.4 264.3,40.0 265.3,40.0 266.2,40.0 267.1,40.0 268.1,42.6 269.0,43.8 269.9,43.7 270.9,40.0 271.8,43.1 272.7,41.9 273.7,40.0 274.6,40.0 275.6,40.0 276.5,41.0 277.4,40.0 278.4,40.0 279.3,40.0 280.2,40.0 281.2,41.5 282.1,41.7 283.0,42.1 284.0,40.0 284.9,43.3 285.9,40.0 286.8,42.3 287.7,40.0 288.7,41.4 289.6,40.0 290.5,40.5" fill="none" stroke="#D26012" stroke-width="0.95" stroke-linejoin="round" opacity="0.9"/>
<polyline points="247.5,40.0 248.4,43.3 249.3,41.4 250.3,40.0 251.2,40.0 252.1,40.0 253.1,40.0 254.0,40.0 255.0,40.0 255.9,40.0 256.8,40.0 257.8,40.0 258.7,43.5 259.6,40.0 260.6,40.0 261.5,40.0 262.4,43.0 263.4,41.9 264.3,40.0 265.3,40.0 266.2,40.0 267.1,40.0 268.1,42.8 269.0,43.7 269.9,43.8 270.9,40.0 271.8,41.2 272.7,42.1 273.7,40.0 274.6,40.0 275.6,40.0 276.5,40.5 277.4,40.7 278.4,40.0 279.3,40.0 280.2,41.5 281.2,41.7 282.1,41.0 283.0,42.4 284.0,40.0 284.9,43.1 285.9,40.0 286.8,42.6 287.7,42.3 288.7,40.8 289.6,40.0 290.5,40.0" fill="none" stroke="#848484" stroke-width="0.95" stroke-linejoin="round" opacity="0.9"/>
<polyline points="247.5,40.0 248.4,43.3 249.3,41.4 250.3,40.0 251.2,40.0 252.1,40.0 253.1,40.0 254.0,40.0 255.0,40.0 255.9,40.0 256.8,40.5 257.8,40.0 258.7,43.5 259.6,40.0 260.6,42.1 261.5,40.0 262.4,43.1 263.4,40.7 264.3,41.2 265.3,40.0 266.2,40.0 267.1,40.0 268.1,43.7 269.0,43.8 269.9,42.8 270.9,40.0 271.8,42.3 272.7,40.8 273.7,40.0 274.6,40.0 275.6,40.0 276.5,40.0 277.4,40.0 278.4,40.0 279.3,40.0 280.2,42.6 281.2,42.4 282.1,41.5 283.0,41.9 284.0,40.0 284.9,43.0 285.9,40.0 286.8,41.0 287.7,41.7 288.7,40.0 289.6,40.0 290.5,40.0" fill="none" stroke="#CC9A00" stroke-width="0.95" stroke-linejoin="round" opacity="0.9"/>
<polyline points="247.5,40.0 248.4,43.5 249.3,41.0 250.3,40.0 251.2,40.0 252.1,40.0 253.1,40.0 254.0,40.0 255.0,40.0 255.9,40.7 256.8,40.0 257.8,40.0 258.7,43.8 259.6,40.0 260.6,42.3 261.5,40.0 262.4,42.1 263.4,40.0 264.3,40.8 265.3,40.0 266.2,40.0 267.1,41.5 268.1,43.0 269.0,43.7 269.9,43.3 270.9,40.0 271.8,41.4 272.7,40.0 273.7,40.0 274.6,40.0 275.6,40.0 276.5,40.5 277.4,40.0 278.4,40.0 279.3,40.0 280.2,42.8 281.2,42.4 282.1,41.2 283.0,42.6 284.0,40.0 284.9,43.1 285.9,40.0 286.8,41.7 287.7,41.9 288.7,40.0 289.6,40.0 290.5,40.0" fill="none" stroke="#327DC2" stroke-width="0.95" stroke-linejoin="round" opacity="0.9"/>
<polyline points="247.5,41.2 248.4,43.7 249.3,40.5 250.3,40.0 251.2,40.0 252.1,40.0 253.1,40.0 254.0,40.0 255.0,40.0 255.9,40.0 256.8,40.0 257.8,40.0 258.7,42.3 259.6,40.0 260.6,41.4 261.5,40.0 262.4,42.1 263.4,40.0 264.3,40.0 265.3,40.0 266.2,40.0 267.1,43.8 268.1,42.6 269.0,43.3 269.9,43.1 270.9,40.0 271.8,40.8 272.7,40.7 273.7,40.0 274.6,40.0 275.6,40.0 276.5,40.0 277.4,40.0 278.4,40.0 279.3,40.0 280.2,43.0 281.2,42.4 282.1,41.0 283.0,41.9 284.0,40.0 284.9,43.5 285.9,41.7 286.8,41.5 287.7,42.8 288.7,40.0 289.6,40.0 290.5,40.0" fill="none" stroke="#5A8A39" stroke-width="0.95" stroke-linejoin="round" opacity="0.9"/>
<rect x="247.5" y="44.4" width="0.5" height="1.8" fill="#b5b5b5" opacity="0.7"/>
<rect x="249.3" y="44.4" width="0.5" height="2.7" fill="#b5b5b5" opacity="0.7"/>
<rect x="251.2" y="44.4" width="0.5" height="2.1" fill="#b5b5b5" opacity="0.7"/>
<rect x="253.0" y="44.4" width="0.5" height="3.0" fill="#b5b5b5" opacity="0.7"/>
<rect x="254.8" y="44.4" width="0.5" height="2.4" fill="#b5b5b5" opacity="0.7"/>
<rect x="256.6" y="44.4" width="0.5" height="1.8" fill="#b5b5b5" opacity="0.7"/>
<rect x="258.5" y="44.4" width="0.5" height="2.7" fill="#b5b5b5" opacity="0.7"/>
<rect x="260.3" y="44.4" width="0.5" height="2.1" fill="#b5b5b5" opacity="0.7"/>
<rect x="262.1" y="44.4" width="0.5" height="3.0" fill="#b5b5b5" opacity="0.7"/>
<rect x="264.0" y="44.4" width="0.5" height="2.4" fill="#b5b5b5" opacity="0.7"/>
<rect x="265.8" y="44.4" width="0.5" height="1.8" fill="#b5b5b5" opacity="0.7"/>
<rect x="267.6" y="44.4" width="0.5" height="2.7" fill="#b5b5b5" opacity="0.7"/>
<rect x="269.5" y="44.4" width="0.5" height="2.1" fill="#b5b5b5" opacity="0.7"/>
<rect x="271.3" y="44.4" width="0.5" height="3.0" fill="#b5b5b5" opacity="0.7"/>
<rect x="273.1" y="44.4" width="0.5" height="2.4" fill="#b5b5b5" opacity="0.7"/>
<rect x="274.9" y="44.4" width="0.5" height="1.8" fill="#b5b5b5" opacity="0.7"/>
<rect x="276.8" y="44.4" width="0.5" height="2.7" fill="#b5b5b5" opacity="0.7"/>
<rect x="278.6" y="44.4" width="0.5" height="2.1" fill="#b5b5b5" opacity="0.7"/>
<rect x="280.4" y="44.4" width="0.5" height="3.0" fill="#b5b5b5" opacity="0.7"/>
<rect x="282.3" y="44.4" width="0.5" height="2.4" fill="#b5b5b5" opacity="0.7"/>
<rect x="284.1" y="44.4" width="0.5" height="1.8" fill="#b5b5b5" opacity="0.7"/>
<rect x="285.9" y="44.4" width="0.5" height="2.7" fill="#b5b5b5" opacity="0.7"/>
<rect x="287.8" y="44.4" width="0.5" height="2.1" fill="#b5b5b5" opacity="0.7"/>
<rect x="289.6" y="44.4" width="0.5" height="3.0" fill="#b5b5b5" opacity="0.7"/>
<rect x="247.0" y="49.9" width="3" height="0.7" fill="#4472C4" opacity="0.55"/>
<rect x="250.4" y="49.9" width="4.2" height="0.6" fill="#9a9a9a" opacity="0.4"/>
<rect x="255.8" y="49.9" width="3" height="0.7" fill="#ED7D31" opacity="0.55"/>
<rect x="259.2" y="49.9" width="4.2" height="0.6" fill="#9a9a9a" opacity="0.4"/>
<rect x="264.6" y="49.9" width="3" height="0.7" fill="#A5A5A5" opacity="0.55"/>
<rect x="268.0" y="49.9" width="4.2" height="0.6" fill="#9a9a9a" opacity="0.4"/>
<rect x="273.4" y="49.9" width="3" height="0.7" fill="#FFC000" opacity="0.55"/>
<rect x="276.8" y="49.9" width="4.2" height="0.6" fill="#9a9a9a" opacity="0.4"/>
<rect x="282.2" y="49.9" width="3" height="0.7" fill="#5B9BD5" opacity="0.55"/>
<rect x="285.6" y="49.9" width="4.2" height="0.6" fill="#9a9a9a" opacity="0.4"/>
<rect x="247.0" y="52.7" width="3" height="0.7" fill="#70AD47" opacity="0.55"/>
<rect x="250.4" y="52.8" width="4.2" height="0.6" fill="#9a9a9a" opacity="0.4"/>
<rect x="255.8" y="52.7" width="3" height="0.7" fill="#264478" opacity="0.55"/>
<rect x="259.2" y="52.8" width="4.2" height="0.6" fill="#9a9a9a" opacity="0.4"/>
<rect x="264.6" y="52.7" width="3" height="0.7" fill="#9E480E" opacity="0.55"/>
<rect x="268.0" y="52.8" width="4.2" height="0.6" fill="#9a9a9a" opacity="0.4"/>
<rect x="273.4" y="52.7" width="3" height="0.7" fill="#636363" opacity="0.55"/>
<rect x="276.8" y="52.8" width="4.2" height="0.6" fill="#9a9a9a" opacity="0.4"/>
<rect x="282.2" y="52.7" width="3" height="0.7" fill="#997300" opacity="0.55"/>
<rect x="285.6" y="52.8" width="4.2" height="0.6" fill="#9a9a9a" opacity="0.4"/>
<rect x="247.0" y="55.6" width="3" height="0.7" fill="#255E91" opacity="0.55"/>
<rect x="250.4" y="55.6" width="4.2" height="0.6" fill="#9a9a9a" opacity="0.4"/>
<rect x="255.8" y="55.6" width="3" height="0.7" fill="#43682B" opacity="0.55"/>
<rect x="259.2" y="55.6" width="4.2" height="0.6" fill="#9a9a9a" opacity="0.4"/>
<rect x="264.6" y="55.6" width="3" height="0.7" fill="#698ED0" opacity="0.55"/>
<rect x="268.0" y="55.6" width="4.2" height="0.6" fill="#9a9a9a" opacity="0.4"/>
<rect x="273.4" y="55.6" width="3" height="0.7" fill="#F1975A" opacity="0.55"/>
<rect x="276.8" y="55.6" width="4.2" height="0.6" fill="#9a9a9a" opacity="0.4"/>
<rect x="282.2" y="55.6" width="3" height="0.7" fill="#B7B7B7" opacity="0.55"/>
<rect x="285.6" y="55.6" width="4.2" height="0.6" fill="#9a9a9a" opacity="0.4"/>
<rect x="247.0" y="58.4" width="3" height="0.7" fill="#FFCD33" opacity="0.55"/>
<rect x="250.4" y="58.5" width="4.2" height="0.6" fill="#9a9a9a" opacity="0.4"/>
<rect x="255.8" y="58.4" width="3" height="0.7" fill="#7CAFDD" opacity="0.55"/>
<rect x="259.2" y="58.5" width="4.2" height="0.6" fill="#9a9a9a" opacity="0.4"/>
<rect x="264.6" y="58.4" width="3" height="0.7" fill="#8CC168" opacity="0.55"/>
<rect x="268.0" y="58.5" width="4.2" height="0.6" fill="#9a9a9a" opacity="0.4"/>
<rect x="273.4" y="58.4" width="3" height="0.7" fill="#335AA1" opacity="0.55"/>
<rect x="276.8" y="58.5" width="4.2" height="0.6" fill="#9a9a9a" opacity="0.4"/>
<rect x="282.2" y="58.4" width="3" height="0.7" fill="#D26012" opacity="0.55"/>
<rect x="285.6" y="58.5" width="4.2" height="0.6" fill="#9a9a9a" opacity="0.4"/>
<rect x="247.0" y="61.2" width="3" height="0.7" fill="#848484" opacity="0.55"/>
<rect x="250.4" y="61.3" width="4.2" height="0.6" fill="#9a9a9a" opacity="0.4"/>
<rect x="255.8" y="61.2" width="3" height="0.7" fill="#CC9A00" opacity="0.55"/>
<rect x="259.2" y="61.3" width="4.2" height="0.6" fill="#9a9a9a" opacity="0.4"/>
<rect x="264.6" y="61.2" width="3" height="0.7" fill="#327DC2" opacity="0.55"/>
<rect x="268.0" y="61.3" width="4.2" height="0.6" fill="#9a9a9a" opacity="0.4"/>
<rect x="273.4" y="61.2" width="3" height="0.7" fill="#5A8A39" opacity="0.55"/>
<rect x="276.8" y="61.3" width="4.2" height="0.6" fill="#9a9a9a" opacity="0.4"/>
</svg>
<div class="sep" style="left:615px"></div>
<div class="sep" style="left:689.6px"></div>
<div class="sep" style="left:734px"></div>
<div class="abs" style="left:628.2px;top:29.8px;width:22.4px;height:21.8px;background:#dedede;border:0.8px solid #c6c6c6;border-radius:2px;box-sizing:border-box"></div>
<svg class="abs" style="left:600px;top:27px" width="168" height="42" viewBox="600 27 168 42">
<!-- switch row/column icon -->
<rect x="631.6" y="33.2" width="15.6" height="15" fill="#fff" stroke="#c4c4c4" stroke-width="0.6"/>
<rect x="631.6" y="33.2" width="15.6" height="3.4" fill="#3b86e0"/>
<path d="M632.6 34.9 H646.2" stroke="#9cc3f0" stroke-width="0.7" stroke-dasharray="1.2 0.8"/>
<path d="M631.6 40.4 H639.4 M631.6 44.2 H639.4 M635.5 36.6 V48.2" stroke="#dcdcdc" stroke-width="0.6"/>
<path d="M639.4 40.4 H647.2 M639.4 44.2 H647.2 M639.4 36.6 V48.2 M643.3 36.6 V48.2" stroke="#f3c0a8" stroke-width="0.6"/>
<path d="M636.6 42.4 A3 3 0 0 1 639.6 39.4" fill="none" stroke="#2d6fd0" stroke-width="0.9"/>
<path d="M639.2 38 L641.4 39.4 L639.2 40.8 Z M635.2 42 L636.6 44.2 L638 42 Z" fill="#2d6fd0"/>
<!-- select data icon -->
<rect x="663.6" y="33.2" width="15.6" height="15" fill="#fff" stroke="#c4c4c4" stroke-width="0.6"/>
<rect x="663.6" y="33.2" width="15.6" height="3.4" fill="#3b86e0"/>
<path d="M664.6 34.9 H678.2" stroke="#9cc3f0" stroke-width="0.7" stroke-dasharray="1.2 0.8"/>
<path d="M663.6 40.4 H671.4 M663.6 44.2 H671.4 M667.5 36.6 V48.2" stroke="#dcdcdc" stroke-width="0.6"/>
<path d="M671.4 40.4 H679.2 M671.4 44.2 H679.2 M671.4 36.6 V48.2 M675.3 36.6 V48.2" stroke="#f3c0a8" stroke-width="0.6"/>
<rect x="673.2" y="41.2" width="9.6" height="7.8" rx="0.6" fill="#f4f4f4" stroke="#a8a8a8" stroke-width="0.6"/>
<rect x="675" y="45.2" width="1.5" height="2.6" fill="#7d7d7d"/><rect x="677.3" y="43" width="1.5" height="4.8" fill="#7d7d7d"/><rect x="679.6" y="44.4" width="1.5" height="3.4" fill="#7d7d7d"/>
<!-- change chart type -->
<rect x="701.4" y="39.4" width="4.4" height="8.4" fill="#3b86e0"/>
<rect x="707" y="33.4" width="4.6" height="14.4" fill="#f8c843"/>
<rect x="712.8" y="40.4" width="4.4" height="7.4" fill="#6b6b6b"/>
<path d="M721 39.8 L724 39.8 L722.5 41.8 Z" fill="#444"/>
<!-- move chart -->
<rect x="743.4" y="34.6" width="15.4" height="11.4" rx="0.8" fill="#fdfdfd" stroke="#c4c4c4" stroke-width="0.8"/>
<rect x="746.2" y="40" width="3" height="4.6" fill="#3b86e0"/>
<rect x="750" y="37" width="3.2" height="7.6" fill="#f8c843"/>
<rect x="754" y="39.4" width="2.8" height="5.2" fill="#6b6b6b"/>
<rect x="747" y="46.4" width="8.4" height="1.4" fill="#3b86e0"/>
</svg>
<div class="rl" style="left:639.5px;top:56.6px">Switch</div>
<div class="rl" style="left:639.5px;top:63.9px">Row/Column</div>
<div class="rl" style="left:672.7px;top:56.6px">Select</div>
<div class="rl" style="left:672.7px;top:63.9px">Data</div>
<div class="rl" style="left:711.7px;top:56.6px">Change</div>
<div class="rl" style="left:711.7px;top:63.9px">Chart Type</div>
<div class="rl" style="left:750.4px;top:56.6px">Move</div>
<div class="rl" style="left:750.4px;top:63.9px">Chart</div>
<div class="abs" style="left:642.6px;top:53.2px;width:69.6px;height:10.2px;background:#ececec;border:0.5px solid #dcdcdc;box-sizing:border-box;box-shadow:0 0.5px 1.5px rgba(0,0,0,0.18)"></div>
<div class="tl" style="left:646.8px;top:58.3px;font-size:6.95px;color:#444">Switch Row/Column</div>
<div class="abs" style="left:0;top:69.4px;width:768px;height:16.4px;background:#fff"></div>
<div class="abs" style="left:0;top:85.6px;width:768px;height:1.6px;background:#dadada"></div>
<div class="tl" style="left:1.4px;top:79.3px;font-size:7.45px;color:#3a3a3a">Chart 2</div>
<svg class="abs" style="left:0;top:69px" width="120" height="17" viewBox="0 69 120 17">
<path d="M39.2 76.4 L42.2 76.4 L40.7 74 Z M39.2 79.4 L42.2 79.4 L40.7 81.8 Z" fill="#3c3c3c"/>
<line x1="46.6" y1="70" x2="46.6" y2="85.4" stroke="#dcdcdc" stroke-width="0.8"/>
<path d="M55.8 75.4 L61.2 81.2 M61.2 75.4 L55.8 81.2" stroke="#c2c2c2" stroke-width="0.9" fill="none"/>
<path d="M72.8 78.6 L75.2 81.2 L79.8 75.2" stroke="#c2c2c2" stroke-width="0.9" fill="none"/>
<line x1="103.4" y1="73.6" x2="103.4" y2="83.2" stroke="#e1e1e1" stroke-width="0.8"/>
</svg>
<div class="t" style="left:94.6px;top:78.8px;font-size:9.1px;color:#7a7a7a;font-family:'Liberation Serif',serif;font-style:italic">fx</div>
<div class="abs" style="left:0;top:87.2px;width:768px;height:13.1px;background:#f7f7f7"></div>
<div class="abs" style="left:0;top:99.8px;width:768px;height:0.9px;background:#cdcdcd"></div>
<div class="abs" style="left:0;top:100.3px;width:9.6px;height:304px;background:#f7f7f7"></div>
<div class="abs" style="left:9.2px;top:87.2px;width:0.9px;height:317px;background:#cdcdcd"></div>
<svg class="abs" style="left:0;top:87px" width="10" height="14" viewBox="0 87 10 14"><path d="M0.8 98.6 L7.6 98.6 L7.6 90.4 Z" fill="#d0d0d0"/></svg>
<div class="abs" style="left:63.8px;top:121.9px;width:87.89999999999999px;height:300px;background:#f3eff9"></div>
<div class="abs" style="left:151.7px;top:121.9px;width:616.3px;height:300px;background:#eef2fb"></div>
<div class="abs" style="left:63.8px;top:112.665px;width:704.2px;height:9.435px;background:#4f7b2b"></div>
<svg class="abs" style="left:0;top:0" width="768" height="404" viewBox="0 0 768 404">
<line x1="24.60" y1="87.6" x2="24.60" y2="99.8" stroke="#dadada" stroke-width="0.8"/>
<line x1="24.60" y1="100.6" x2="24.60" y2="404" stroke="#dfe1e3" stroke-width="0.7"/>
<line x1="63.80" y1="87.6" x2="63.80" y2="99.8" stroke="#dadada" stroke-width="0.8"/>
<line x1="63.80" y1="100.6" x2="63.80" y2="404" stroke="#dfe1e3" stroke-width="0.7"/>
<line x1="151.70" y1="87.6" x2="151.70" y2="99.8" stroke="#dadada" stroke-width="0.8"/>
<line x1="151.70" y1="100.6" x2="151.70" y2="404" stroke="#dfe1e3" stroke-width="0.7"/>
<line x1="190.75" y1="87.6" x2="190.75" y2="99.8" stroke="#dadada" stroke-width="0.8"/>
<line x1="190.75" y1="100.6" x2="190.75" y2="404" stroke="#dfe1e3" stroke-width="0.7"/>
<line x1="229.80" y1="87.6" x2="229.80" y2="99.8" stroke="#dadada" stroke-width="0.8"/>
<line x1="229.80" y1="100.6" x2="229.80" y2="404" stroke="#dfe1e3" stroke-width="0.7"/>
<line x1="268.85" y1="87.6" x2="268.85" y2="99.8" stroke="#dadada" stroke-width="0.8"/>
<line x1="268.85" y1="100.6" x2="268.85" y2="404" stroke="#dfe1e3" stroke-width="0.7"/>
<line x1="307.90" y1="87.6" x2="307.90" y2="99.8" stroke="#dadada" stroke-width="0.8"/>
<line x1="307.90" y1="100.6" x2="307.90" y2="404" stroke="#dfe1e3" stroke-width="0.7"/>
<line x1="346.95" y1="87.6" x2="346.95" y2="99.8" stroke="#dadada" stroke-width="0.8"/>
<line x1="346.95" y1="100.6" x2="346.95" y2="404" stroke="#dfe1e3" stroke-width="0.7"/>
<line x1="386.00" y1="87.6" x2="386.00" y2="99.8" stroke="#dadada" stroke-width="0.8"/>
<line x1="386.00" y1="100.6" x2="386.00" y2="404" stroke="#dfe1e3" stroke-width="0.7"/>
<line x1="425.05" y1="87.6" x2="425.05" y2="99.8" stroke="#dadada" stroke-width="0.8"/>
<line x1="425.05" y1="100.6" x2="425.05" y2="404" stroke="#dfe1e3" stroke-width="0.7"/>
<line x1="464.10" y1="87.6" x2="464.10" y2="99.8" stroke="#dadada" stroke-width="0.8"/>
<line x1="464.10" y1="100.6" x2="464.10" y2="404" stroke="#dfe1e3" stroke-width="0.7"/>
<line x1="503.15" y1="87.6" x2="503.15" y2="99.8" stroke="#dadada" stroke-width="0.8"/>
<line x1="503.15" y1="100.6" x2="503.15" y2="404" stroke="#dfe1e3" stroke-width="0.7"/>
<line x1="542.20" y1="87.6" x2="542.20" y2="99.8" stroke="#dadada" stroke-width="0.8"/>
<line x1="542.20" y1="100.6" x2="542.20" y2="404" stroke="#dfe1e3" stroke-width="0.7"/>
<line x1="581.25" y1="87.6" x2="581.25" y2="99.8" stroke="#dadada" stroke-width="0.8"/>
<line x1="581.25" y1="100.6" x2="581.25" y2="404" stroke="#dfe1e3" stroke-width="0.7"/>
<line x1="620.30" y1="87.6" x2="620.30" y2="99.8" stroke="#dadada" stroke-width="0.8"/>
<line x1="620.30" y1="100.6" x2="620.30" y2="404" stroke="#dfe1e3" stroke-width="0.7"/>
<line x1="659.35" y1="87.6" x2="659.35" y2="99.8" stroke="#dadada" stroke-width="0.8"/>
<line x1="659.35" y1="100.6" x2="659.35" y2="404" stroke="#dfe1e3" stroke-width="0.7"/>
<line x1="698.40" y1="87.6" x2="698.40" y2="99.8" stroke="#dadada" stroke-width="0.8"/>
<line x1="698.40" y1="100.6" x2="698.40" y2="404" stroke="#dfe1e3" stroke-width="0.7"/>
<line x1="737.45" y1="87.6" x2="737.45" y2="99.8" stroke="#dadada" stroke-width="0.8"/>
<line x1="737.45" y1="100.6" x2="737.45" y2="404" stroke="#dfe1e3" stroke-width="0.7"/>
<line x1="776.50" y1="87.6" x2="776.50" y2="99.8" stroke="#dadada" stroke-width="0.8"/>
<line x1="776.50" y1="100.6" x2="776.50" y2="404" stroke="#dfe1e3" stroke-width="0.7"/>
<line x1="0" y1="102.90" x2="768" y2="102.90" stroke="#dfe1e3" stroke-width="0.7"/>
<line x1="0" y1="112.27" x2="768" y2="112.27" stroke="#dfe1e3" stroke-width="0.7"/>
<line x1="0" y1="121.90" x2="768" y2="121.90" stroke="#dfe1e3" stroke-width="0.7"/>
<line x1="0" y1="131.53" x2="768" y2="131.53" stroke="#dfe1e3" stroke-width="0.7"/>
<line x1="0" y1="141.17" x2="768" y2="141.17" stroke="#dfe1e3" stroke-width="0.7"/>
<line x1="0" y1="150.81" x2="768" y2="150.81" stroke="#dfe1e3" stroke-width="0.7"/>
<line x1="0" y1="160.44" x2="768" y2="160.44" stroke="#dfe1e3" stroke-width="0.7"/>
<line x1="0" y1="170.07" x2="768" y2="170.07" stroke="#dfe1e3" stroke-width="0.7"/>
<line x1="0" y1="179.71" x2="768" y2="179.71" stroke="#dfe1e3" stroke-width="0.7"/>
<line x1="0" y1="189.34" x2="768" y2="189.34" stroke="#dfe1e3" stroke-width="0.7"/>
<line x1="0" y1="198.98" x2="768" y2="198.98" stroke="#dfe1e3" stroke-width="0.7"/>
<line x1="0" y1="208.62" x2="768" y2="208.62" stroke="#dfe1e3" stroke-width="0.7"/>
<line x1="0" y1="218.25" x2="768" y2="218.25" stroke="#dfe1e3" stroke-width="0.7"/>
<line x1="0" y1="227.88" x2="768" y2="227.88" stroke="#dfe1e3" stroke-width="0.7"/>
<line x1="0" y1="237.52" x2="768" y2="237.52" stroke="#dfe1e3" stroke-width="0.7"/>
<line x1="0" y1="247.16" x2="768" y2="247.16" stroke="#dfe1e3" stroke-width="0.7"/>
<line x1="0" y1="256.79" x2="768" y2="256.79" stroke="#dfe1e3" stroke-width="0.7"/>
<line x1="0" y1="266.43" x2="768" y2="266.43" stroke="#dfe1e3" stroke-width="0.7"/>
<line x1="0" y1="276.06" x2="768" y2="276.06" stroke="#dfe1e3" stroke-width="0.7"/>
<line x1="0" y1="285.69" x2="768" y2="285.69" stroke="#dfe1e3" stroke-width="0.7"/>
<line x1="0" y1="295.33" x2="768" y2="295.33" stroke="#dfe1e3" stroke-width="0.7"/>
<line x1="0" y1="304.97" x2="768" y2="304.97" stroke="#dfe1e3" stroke-width="0.7"/>
<line x1="0" y1="314.60" x2="768" y2="314.60" stroke="#dfe1e3" stroke-width="0.7"/>
<line x1="0" y1="324.24" x2="768" y2="324.24" stroke="#dfe1e3" stroke-width="0.7"/>
<line x1="0" y1="333.87" x2="768" y2="333.87" stroke="#dfe1e3" stroke-width="0.7"/>
<line x1="0" y1="343.50" x2="768" y2="343.50" stroke="#dfe1e3" stroke-width="0.7"/>
<line x1="0" y1="353.14" x2="768" y2="353.14" stroke="#dfe1e3" stroke-width="0.7"/>
<line x1="0" y1="362.77" x2="768" y2="362.77" stroke="#dfe1e3" stroke-width="0.7"/>
<line x1="0" y1="372.41" x2="768" y2="372.41" stroke="#dfe1e3" stroke-width="0.7"/>
<line x1="0" y1="382.04" x2="768" y2="382.04" stroke="#dfe1e3" stroke-width="0.7"/>
<line x1="0" y1="391.68" x2="768" y2="391.68" stroke="#dfe1e3" stroke-width="0.7"/>
<line x1="0" y1="401.32" x2="768" y2="401.32" stroke="#dfe1e3" stroke-width="0.7"/>
<line x1="0" y1="410.95" x2="768" y2="410.95" stroke="#dfe1e3" stroke-width="0.7"/>
</svg>
<div class="abs" style="left:63.8px;top:112.765px;width:704.2px;height:9.035px;background:#4f7b2b"></div>
<div class="ch" style="left:45px">AA</div>
<div class="ch" style="left:107.8px">AB</div>
<div class="ch" style="left:170.9px">AC</div>
<div class="ch" style="left:210.0px">AD</div>
<div class="ch" style="left:249.0px">AE</div>
<div class="ch" style="left:288.1px">AF</div>
<div class="ch" style="left:327.1px">AG</div>
<div class="ch" style="left:366.2px">AH</div>
<div class="ch" style="left:405.2px">AI</div>
<div class="ch" style="left:444.3px">AJ</div>
<div class="ch" style="left:483.3px">AK</div>
<div class="ch" style="left:522.4px">AL</div>
<div class="ch" style="left:561.4px">AM</div>
<div class="ch" style="left:600.5px">AN</div>
<div class="ch" style="left:639.5px">AO</div>
<div class="ch" style="left:678.6px">AP</div>
<div class="ch" style="left:717.6px">AQ</div>
<div class="ch" style="left:756.7px">AR</div>
<div class="rh" style="left:2.6px;top:99.3px;clip-path:inset(4.4px 0 0 0)">1</div>
<div class="rh" style="left:2.6px;top:108.6px">2</div>
<div class="rh" style="left:2.6px;top:118.3px">3</div>
<div class="rh" style="left:2.6px;top:127.9px">4</div>
<div class="rh" style="left:2.6px;top:137.6px">5</div>
<div class="rh" style="left:2.6px;top:147.2px">6</div>
<div class="rh" style="left:2.6px;top:156.8px">7</div>
<div class="rh" style="left:2.6px;top:166.5px">8</div>
<div class="rh" style="left:2.6px;top:176.1px">9</div>
<div class="rh" style="left:2.6px;top:185.7px">10</div>
<div class="rh" style="left:2.6px;top:195.4px">11</div>
<div class="rh" style="left:2.6px;top:205.0px">12</div>
<div class="rh" style="left:2.6px;top:214.6px">13</div>
<div class="rh" style="left:2.6px;top:224.3px">14</div>
<div class="rh" style="left:2.6px;top:233.9px">15</div>
<div class="rh" style="left:2.6px;top:243.5px">16</div>
<div class="rh" style="left:2.6px;top:253.2px">17</div>
<div class="rh" style="left:2.6px;top:262.8px">18</div>
<div class="rh" style="left:2.6px;top:272.4px">19</div>
<div class="rh" style="left:2.6px;top:282.1px">20</div>
<div class="rh" style="left:2.6px;top:291.7px">21</div>
<div class="rh" style="left:2.6px;top:301.3px">22</div>
<div class="rh" style="left:2.6px;top:311.0px">23</div>
<div class="rh" style="left:2.6px;top:320.6px">24</div>
<div class="rh" style="left:2.6px;top:330.3px">25</div>
<div class="rh" style="left:2.6px;top:339.9px">26</div>
<div class="rh" style="left:2.6px;top:349.5px">27</div>
<div class="rh" style="left:2.6px;top:359.2px">28</div>
<div class="rh" style="left:2.6px;top:368.8px">29</div>
<div class="rh" style="left:2.6px;top:378.4px">30</div>
<div class="rh" style="left:2.6px;top:388.1px">31</div>
<div class="rh" style="left:2.6px;top:397.7px">32</div>
<div class="rh" style="left:2.6px;top:407.3px">33</div>
<div class="h" style="left:171.2px;top:117.5px">1992–93</div>
<div class="h" style="left:210.3px;top:117.5px">1993-94</div>
<div class="h" style="left:249.3px;top:117.5px">1994-95</div>
<div class="h" style="left:288.4px;top:117.5px">1995-96</div>
<div class="h" style="left:327.4px;top:117.5px">1996-97</div>
<div class="h" style="left:366.5px;top:117.5px">1997-98</div>
<div class="h" style="left:405.5px;top:117.5px">1998-99</div>
<div class="h" style="left:444.6px;top:117.5px">1999-2000</div>
<div class="h" style="left:483.6px;top:117.5px">2000-01</div>
<div class="h" style="left:522.7px;top:117.5px">2001-02</div>
<div class="h" style="left:561.7px;top:117.5px">2002-03</div>
<div class="h" style="left:600.8px;top:117.5px">2003-04</div>
<div class="h" style="left:639.8px;top:117.5px">2004-05</div>
<div class="h" style="left:678.9px;top:117.5px">2005-06</div>
<div class="h" style="left:717.9px;top:117.5px">2006-07</div>
<div class="h" style="left:757.0px;top:117.5px">2007-08</div>
<div class="n" style="left:65.39999999999999px;top:127.9px">AFC Bournemouth</div>
<div class="c" style="left:171.2px;top:127.9px">23</div>
<div class="c" style="left:210.3px;top:127.9px">23</div>
<div class="c" style="left:249.3px;top:127.9px">23</div>
<div class="c" style="left:288.4px;top:127.9px">23</div>
<div class="c" style="left:327.4px;top:127.9px">23</div>
<div class="c" style="left:366.5px;top:127.9px">23</div>
<div class="c" style="left:405.5px;top:127.9px">23</div>
<div class="c" style="left:444.6px;top:127.9px">23</div>
<div class="c" style="left:483.6px;top:127.9px">23</div>
<div class="c" style="left:522.7px;top:127.9px">23</div>
<div class="c" style="left:561.7px;top:127.9px">23</div>
<div class="c" style="left:600.8px;top:127.9px">23</div>
<div class="c" style="left:639.8px;top:127.9px">23</div>
<div class="c" style="left:678.9px;top:127.9px">23</div>
<div class="c" style="left:717.9px;top:127.9px">23</div>
<div class="c" style="left:757.0px;top:127.9px">23</div>
<div class="n" style="left:65.39999999999999px;top:137.6px">Arsenal</div>
<div class="c" style="left:171.2px;top:137.6px">10</div>
<div class="c" style="left:210.3px;top:137.6px">4</div>
<div class="c" style="left:249.3px;top:137.6px">12</div>
<div class="c" style="left:288.4px;top:137.6px">5</div>
<div class="c" style="left:327.4px;top:137.6px">3</div>
<div class="c" style="left:366.5px;top:137.6px">1</div>
<div class="c" style="left:405.5px;top:137.6px">2</div>
<div class="c" style="left:444.6px;top:137.6px">2</div>
<div class="c" style="left:483.6px;top:137.6px">2</div>
<div class="c" style="left:522.7px;top:137.6px">1</div>
<div class="c" style="left:561.7px;top:137.6px">2</div>
<div class="c" style="left:600.8px;top:137.6px">1</div>
<div class="c" style="left:639.8px;top:137.6px">2</div>
<div class="c" style="left:678.9px;top:137.6px">4</div>
<div class="c" style="left:717.9px;top:137.6px">4</div>
<div class="c" style="left:757.0px;top:137.6px">3</div>
<div class="n" style="left:65.39999999999999px;top:147.2px">Aston Villa</div>
<div class="c" style="left:171.2px;top:147.2px">2</div>
<div class="c" style="left:210.3px;top:147.2px">10</div>
<div class="c" style="left:249.3px;top:147.2px">18</div>
<div class="c" style="left:288.4px;top:147.2px">4</div>
<div class="c" style="left:327.4px;top:147.2px">5</div>
<div class="c" style="left:366.5px;top:147.2px">7</div>
<div class="c" style="left:405.5px;top:147.2px">6</div>
<div class="c" style="left:444.6px;top:147.2px">6</div>
<div class="c" style="left:483.6px;top:147.2px">8</div>
<div class="c" style="left:522.7px;top:147.2px">8</div>
<div class="c" style="left:561.7px;top:147.2px">16</div>
<div class="c" style="left:600.8px;top:147.2px">6</div>
<div class="c" style="left:639.8px;top:147.2px">10</div>
<div class="c" style="left:678.9px;top:147.2px">16</div>
<div class="c" style="left:717.9px;top:147.2px">11</div>
<div class="c" style="left:757.0px;top:147.2px">6</div>
<div class="n" style="left:65.39999999999999px;top:156.8px">Barnsley</div>
<div class="c" style="left:171.2px;top:156.8px">23</div>
<div class="c" style="left:210.3px;top:156.8px">23</div>
<div class="c" style="left:249.3px;top:156.8px">23</div>
<div class="c" style="left:288.4px;top:156.8px">23</div>
<div class="c" style="left:327.4px;top:156.8px">23</div>
<div class="c" style="left:366.5px;top:156.8px">19</div>
<div class="c" style="left:405.5px;top:156.8px">23</div>
<div class="c" style="left:444.6px;top:156.8px">23</div>
<div class="c" style="left:483.6px;top:156.8px">23</div>
<div class="c" style="left:522.7px;top:156.8px">23</div>
<div class="c" style="left:561.7px;top:156.8px">23</div>
<div class="c" style="left:600.8px;top:156.8px">23</div>
<div class="c" style="left:639.8px;top:156.8px">23</div>
<div class="c" style="left:678.9px;top:156.8px">23</div>
<div class="c" style="left:717.9px;top:156.8px">23</div>
<div class="c" style="left:757.0px;top:156.8px">23</div>
<div class="n" style="left:65.39999999999999px;top:166.5px">Birmingham City</div>
<div class="c" style="left:171.2px;top:166.5px">23</div>
<div class="c" style="left:210.3px;top:166.5px">23</div>
<div class="c" style="left:249.3px;top:166.5px">23</div>
<div class="c" style="left:288.4px;top:166.5px">23</div>
<div class="c" style="left:327.4px;top:166.5px">23</div>
<div class="c" style="left:366.5px;top:166.5px">23</div>
<div class="c" style="left:405.5px;top:166.5px">23</div>
<div class="c" style="left:444.6px;top:166.5px">23</div>
<div class="c" style="left:483.6px;top:166.5px">23</div>
<div class="c" style="left:522.7px;top:166.5px">23</div>
<div class="c" style="left:561.7px;top:166.5px">13</div>
<div class="c" style="left:600.8px;top:166.5px">10</div>
<div class="c" style="left:639.8px;top:166.5px">12</div>
<div class="c" style="left:678.9px;top:166.5px">18</div>
<div class="c" style="left:717.9px;top:166.5px">23</div>
<div class="c" style="left:757.0px;top:166.5px">19</div>
<div class="n" style="left:65.39999999999999px;top:176.1px">Blackburn Rovers</div>
<div class="c" style="left:171.2px;top:176.1px">4</div>
<div class="c" style="left:210.3px;top:176.1px">2</div>
<div class="c" style="left:249.3px;top:176.1px">1</div>
<div class="c" style="left:288.4px;top:176.1px">7</div>
<div class="c" style="left:327.4px;top:176.1px">13</div>
<div class="c" style="left:366.5px;top:176.1px">6</div>
<div class="c" style="left:405.5px;top:176.1px">19</div>
<div class="c" style="left:444.6px;top:176.1px">23</div>
<div class="c" style="left:483.6px;top:176.1px">23</div>
<div class="c" style="left:522.7px;top:176.1px">10</div>
<div class="c" style="left:561.7px;top:176.1px">6</div>
<div class="c" style="left:600.8px;top:176.1px">15</div>
<div class="c" style="left:639.8px;top:176.1px">15</div>
<div class="c" style="left:678.9px;top:176.1px">6</div>
<div class="c" style="left:717.9px;top:176.1px">10</div>
<div class="c" style="left:757.0px;top:176.1px">7</div>
<div class="n" style="left:65.39999999999999px;top:185.7px">Blackpool</div>
<div class="c" style="left:171.2px;top:185.7px">23</div>
<div class="c" style="left:210.3px;top:185.7px">23</div>
<div class="c" style="left:249.3px;top:185.7px">23</div>
<div class="c" style="left:288.4px;top:185.7px">23</div>
<div class="c" style="left:327.4px;top:185.7px">23</div>
<div class="c" style="left:366.5px;top:185.7px">23</div>
<div class="c" style="left:405.5px;top:185.7px">23</div>
<div class="c" style="left:444.6px;top:185.7px">23</div>
<div class="c" style="left:483.6px;top:185.7px">23</div>
<div class="c" style="left:522.7px;top:185.7px">23</div>
<div class="c" style="left:561.7px;top:185.7px">23</div>
<div class="c" style="left:600.8px;top:185.7px">23</div>
<div class="c" style="left:639.8px;top:185.7px">23</div>
<div class="c" style="left:678.9px;top:185.7px">23</div>
<div class="c" style="left:717.9px;top:185.7px">23</div>
<div class="c" style="left:757.0px;top:185.7px">23</div>
<div class="n" style="left:65.39999999999999px;top:195.4px">Bolton Wanderers</div>
<div class="c" style="left:171.2px;top:195.4px">23</div>
<div class="c" style="left:210.3px;top:195.4px">23</div>
<div class="c" style="left:249.3px;top:195.4px">23</div>
<div class="c" style="left:288.4px;top:195.4px">20</div>
<div class="c" style="left:327.4px;top:195.4px">23</div>
<div class="c" style="left:366.5px;top:195.4px">18</div>
<div class="c" style="left:405.5px;top:195.4px">23</div>
<div class="c" style="left:444.6px;top:195.4px">23</div>
<div class="c" style="left:483.6px;top:195.4px">23</div>
<div class="c" style="left:522.7px;top:195.4px">16</div>
<div class="c" style="left:561.7px;top:195.4px">17</div>
<div class="c" style="left:600.8px;top:195.4px">8</div>
<div class="c" style="left:639.8px;top:195.4px">6</div>
<div class="c" style="left:678.9px;top:195.4px">8</div>
<div class="c" style="left:717.9px;top:195.4px">7</div>
<div class="c" style="left:757.0px;top:195.4px">16</div>
<div class="n" style="left:65.39999999999999px;top:205.0px">Bradford City</div>
<div class="c" style="left:171.2px;top:205.0px">23</div>
<div class="c" style="left:210.3px;top:205.0px">23</div>
<div class="c" style="left:249.3px;top:205.0px">23</div>
<div class="c" style="left:288.4px;top:205.0px">23</div>
<div class="c" style="left:327.4px;top:205.0px">23</div>
<div class="c" style="left:366.5px;top:205.0px">23</div>
<div class="c" style="left:405.5px;top:205.0px">23</div>
<div class="c" style="left:444.6px;top:205.0px">17</div>
<div class="c" style="left:483.6px;top:205.0px">20</div>
<div class="c" style="left:522.7px;top:205.0px">23</div>
<div class="c" style="left:561.7px;top:205.0px">23</div>
<div class="c" style="left:600.8px;top:205.0px">23</div>
<div class="c" style="left:639.8px;top:205.0px">23</div>
<div class="c" style="left:678.9px;top:205.0px">23</div>
<div class="c" style="left:717.9px;top:205.0px">23</div>
<div class="c" style="left:757.0px;top:205.0px">23</div>
<div class="n" style="left:65.39999999999999px;top:214.6px">Burnley</div>
<div class="c" style="left:171.2px;top:214.6px">23</div>
<div class="c" style="left:210.3px;top:214.6px">23</div>
<div class="c" style="left:249.3px;top:214.6px">23</div>
<div class="c" style="left:288.4px;top:214.6px">23</div>
<div class="c" style="left:327.4px;top:214.6px">23</div>
<div class="c" style="left:366.5px;top:214.6px">23</div>
<div class="c" style="left:405.5px;top:214.6px">23</div>
<div class="c" style="left:444.6px;top:214.6px">23</div>
<div class="c" style="left:483.6px;top:214.6px">23</div>
<div class="c" style="left:522.7px;top:214.6px">23</div>
<div class="c" style="left:561.7px;top:214.6px">23</div>
<div class="c" style="left:600.8px;top:214.6px">23</div>
<div class="c" style="left:639.8px;top:214.6px">23</div>
<div class="c" style="left:678.9px;top:214.6px">23</div>
<div class="c" style="left:717.9px;top:214.6px">23</div>
<div class="c" style="left:757.0px;top:214.6px">23</div>
<div class="n" style="left:65.39999999999999px;top:224.3px">Cardiff City</div>
<div class="c" style="left:171.2px;top:224.3px">23</div>
<div class="c" style="left:210.3px;top:224.3px">23</div>
<div class="c" style="left:249.3px;top:224.3px">23</div>
<div class="c" style="left:288.4px;top:224.3px">23</div>
<div class="c" style="left:327.4px;top:224.3px">23</div>
<div class="c" style="left:366.5px;top:224.3px">23</div>
<div class="c" style="left:405.5px;top:224.3px">23</div>
<div class="c" style="left:444.6px;top:224.3px">23</div>
<div class="c" style="left:483.6px;top:224.3px">23</div>
<div class="c" style="left:522.7px;top:224.3px">23</div>
<div class="c" style="left:561.7px;top:224.3px">23</div>
<div class="c" style="left:600.8px;top:224.3px">23</div>
<div class="c" style="left:639.8px;top:224.3px">23</div>
<div class="c" style="left:678.9px;top:224.3px">23</div>
<div class="c" style="left:717.9px;top:224.3px">23</div>
<div class="c" style="left:757.0px;top:224.3px">23</div>
<div class="n" style="left:65.39999999999999px;top:233.9px">Charlton Athletic</div>
<div class="c" style="left:171.2px;top:233.9px">23</div>
<div class="c" style="left:210.3px;top:233.9px">23</div>
<div class="c" style="left:249.3px;top:233.9px">23</div>
<div class="c" style="left:288.4px;top:233.9px">23</div>
<div class="c" style="left:327.4px;top:233.9px">15</div>
<div class="c" style="left:366.5px;top:233.9px">23</div>
<div class="c" style="left:405.5px;top:233.9px">18</div>
<div class="c" style="left:444.6px;top:233.9px">14</div>
<div class="c" style="left:483.6px;top:233.9px">9</div>
<div class="c" style="left:522.7px;top:233.9px">14</div>
<div class="c" style="left:561.7px;top:233.9px">12</div>
<div class="c" style="left:600.8px;top:233.9px">7</div>
<div class="c" style="left:639.8px;top:233.9px">11</div>
<div class="c" style="left:678.9px;top:233.9px">13</div>
<div class="c" style="left:717.9px;top:233.9px">19</div>
<div class="c" style="left:757.0px;top:233.9px">23</div>
<div class="n" style="left:65.39999999999999px;top:243.5px">Chelsea</div>
<div class="c" style="left:171.2px;top:243.5px">11</div>
<div class="c" style="left:210.3px;top:243.5px">14</div>
<div class="c" style="left:249.3px;top:243.5px">11</div>
<div class="c" style="left:288.4px;top:243.5px">11</div>
<div class="c" style="left:327.4px;top:243.5px">6</div>
<div class="c" style="left:366.5px;top:243.5px">4</div>
<div class="c" style="left:405.5px;top:243.5px">3</div>
<div class="c" style="left:444.6px;top:243.5px">5</div>
<div class="c" style="left:483.6px;top:243.5px">6</div>
<div class="c" style="left:522.7px;top:243.5px">6</div>
<div class="c" style="left:561.7px;top:243.5px">4</div>
<div class="c" style="left:600.8px;top:243.5px">2</div>
<div class="c" style="left:639.8px;top:243.5px">1</div>
<div class="c" style="left:678.9px;top:243.5px">1</div>
<div class="c" style="left:717.9px;top:243.5px">2</div>
<div class="c" style="left:757.0px;top:243.5px">2</div>
<div class="n" style="left:65.39999999999999px;top:253.2px">Coventry City</div>
<div class="c" style="left:171.2px;top:253.2px">15</div>
<div class="c" style="left:210.3px;top:253.2px">11</div>
<div class="c" style="left:249.3px;top:253.2px">16</div>
<div class="c" style="left:288.4px;top:253.2px">16</div>
<div class="c" style="left:327.4px;top:253.2px">17</div>
<div class="c" style="left:366.5px;top:253.2px">11</div>
<div class="c" style="left:405.5px;top:253.2px">15</div>
<div class="c" style="left:444.6px;top:253.2px">14</div>
<div class="c" style="left:483.6px;top:253.2px">19</div>
<div class="c" style="left:522.7px;top:253.2px">23</div>
<div class="c" style="left:561.7px;top:253.2px">23</div>
<div class="c" style="left:600.8px;top:253.2px">23</div>
<div class="c" style="left:639.8px;top:253.2px">23</div>
<div class="c" style="left:678.9px;top:253.2px">23</div>
<div class="c" style="left:717.9px;top:253.2px">23</div>
<div class="c" style="left:757.0px;top:253.2px">23</div>
<div class="n" style="left:65.39999999999999px;top:262.8px">Crystal Palace</div>
<div class="c" style="left:171.2px;top:262.8px">20</div>
<div class="c" style="left:210.3px;top:262.8px">23</div>
<div class="c" style="left:249.3px;top:262.8px">19</div>
<div class="c" style="left:288.4px;top:262.8px">23</div>
<div class="c" style="left:327.4px;top:262.8px">23</div>
<div class="c" style="left:366.5px;top:262.8px">20</div>
<div class="c" style="left:405.5px;top:262.8px">23</div>
<div class="c" style="left:444.6px;top:262.8px">23</div>
<div class="c" style="left:483.6px;top:262.8px">23</div>
<div class="c" style="left:522.7px;top:262.8px">23</div>
<div class="c" style="left:561.7px;top:262.8px">23</div>
<div class="c" style="left:600.8px;top:262.8px">23</div>
<div class="c" style="left:639.8px;top:262.8px">18</div>
<div class="c" style="left:678.9px;top:262.8px">23</div>
<div class="c" style="left:717.9px;top:262.8px">23</div>
<div class="c" style="left:757.0px;top:262.8px">23</div>
<div class="n" style="left:65.39999999999999px;top:272.4px">Derby County</div>
<div class="c" style="left:171.2px;top:272.4px">23</div>
<div class="c" style="left:210.3px;top:272.4px">23</div>
<div class="c" style="left:249.3px;top:272.4px">23</div>
<div class="c" style="left:288.4px;top:272.4px">23</div>
<div class="c" style="left:327.4px;top:272.4px">12</div>
<div class="c" style="left:366.5px;top:272.4px">9</div>
<div class="c" style="left:405.5px;top:272.4px">8</div>
<div class="c" style="left:444.6px;top:272.4px">16</div>
<div class="c" style="left:483.6px;top:272.4px">17</div>
<div class="c" style="left:522.7px;top:272.4px">19</div>
<div class="c" style="left:561.7px;top:272.4px">23</div>
<div class="c" style="left:600.8px;top:272.4px">23</div>
<div class="c" style="left:639.8px;top:272.4px">23</div>
<div class="c" style="left:678.9px;top:272.4px">23</div>
<div class="c" style="left:717.9px;top:272.4px">23</div>
<div class="c" style="left:757.0px;top:272.4px">20</div>
<div class="n" style="left:65.39999999999999px;top:282.1px">Everton</div>
<div class="c" style="left:171.2px;top:282.1px">13</div>
<div class="c" style="left:210.3px;top:282.1px">17</div>
<div class="c" style="left:249.3px;top:282.1px">15</div>
<div class="c" style="left:288.4px;top:282.1px">6</div>
<div class="c" style="left:327.4px;top:282.1px">15</div>
<div class="c" style="left:366.5px;top:282.1px">17</div>
<div class="c" style="left:405.5px;top:282.1px">14</div>
<div class="c" style="left:444.6px;top:282.1px">13</div>
<div class="c" style="left:483.6px;top:282.1px">16</div>
<div class="c" style="left:522.7px;top:282.1px">15</div>
<div class="c" style="left:561.7px;top:282.1px">7</div>
<div class="c" style="left:600.8px;top:282.1px">17</div>
<div class="c" style="left:639.8px;top:282.1px">4</div>
<div class="c" style="left:678.9px;top:282.1px">11</div>
<div class="c" style="left:717.9px;top:282.1px">6</div>
<div class="c" style="left:757.0px;top:282.1px">5</div>
<div class="n" style="left:65.39999999999999px;top:291.7px">Fulham</div>
<div class="c" style="left:171.2px;top:291.7px">23</div>
<div class="c" style="left:210.3px;top:291.7px">23</div>
<div class="c" style="left:249.3px;top:291.7px">23</div>
<div class="c" style="left:288.4px;top:291.7px">23</div>
<div class="c" style="left:327.4px;top:291.7px">23</div>
<div class="c" style="left:366.5px;top:291.7px">23</div>
<div class="c" style="left:405.5px;top:291.7px">23</div>
<div class="c" style="left:444.6px;top:291.7px">23</div>
<div class="c" style="left:483.6px;top:291.7px">23</div>
<div class="c" style="left:522.7px;top:291.7px">13</div>
<div class="c" style="left:561.7px;top:291.7px">14</div>
<div class="c" style="left:600.8px;top:291.7px">9</div>
<div class="c" style="left:639.8px;top:291.7px">13</div>
<div class="c" style="left:678.9px;top:291.7px">12</div>
<div class="c" style="left:717.9px;top:291.7px">16</div>
<div class="c" style="left:757.0px;top:291.7px">17</div>
<div class="n" style="left:65.39999999999999px;top:301.3px">Hull City</div>
<div class="c" style="left:171.2px;top:301.3px">23</div>
<div class="c" style="left:210.3px;top:301.3px">23</div>
<div class="c" style="left:249.3px;top:301.3px">23</div>
<div class="c" style="left:288.4px;top:301.3px">23</div>
<div class="c" style="left:327.4px;top:301.3px">23</div>
<div class="c" style="left:366.5px;top:301.3px">23</div>
<div class="c" style="left:405.5px;top:301.3px">23</div>
<div class="c" style="left:444.6px;top:301.3px">23</div>
<div class="c" style="left:483.6px;top:301.3px">23</div>
<div class="c" style="left:522.7px;top:301.3px">23</div>
<div class="c" style="left:561.7px;top:301.3px">23</div>
<div class="c" style="left:600.8px;top:301.3px">23</div>
<div class="c" style="left:639.8px;top:301.3px">23</div>
<div class="c" style="left:678.9px;top:301.3px">23</div>
<div class="c" style="left:717.9px;top:301.3px">23</div>
<div class="c" style="left:757.0px;top:301.3px">23</div>
<div class="n" style="left:65.39999999999999px;top:311.0px">Ipswich Town</div>
<div class="c" style="left:171.2px;top:311.0px">16</div>
<div class="c" style="left:210.3px;top:311.0px">19</div>
<div class="c" style="left:249.3px;top:311.0px">22</div>
<div class="c" style="left:288.4px;top:311.0px">23</div>
<div class="c" style="left:327.4px;top:311.0px">23</div>
<div class="c" style="left:366.5px;top:311.0px">23</div>
<div class="c" style="left:405.5px;top:311.0px">23</div>
<div class="c" style="left:444.6px;top:311.0px">23</div>
<div class="c" style="left:483.6px;top:311.0px">5</div>
<div class="c" style="left:522.7px;top:311.0px">18</div>
<div class="c" style="left:561.7px;top:311.0px">23</div>
<div class="c" style="left:600.8px;top:311.0px">23</div>
<div class="c" style="left:639.8px;top:311.0px">23</div>
<div class="c" style="left:678.9px;top:311.0px">23</div>
<div class="c" style="left:717.9px;top:311.0px">23</div>
<div class="c" style="left:757.0px;top:311.0px">23</div>
<div class="n" style="left:65.39999999999999px;top:320.6px">Leeds United</div>
<div class="c" style="left:171.2px;top:320.6px">17</div>
<div class="c" style="left:210.3px;top:320.6px">5</div>
<div class="c" style="left:249.3px;top:320.6px">5</div>
<div class="c" style="left:288.4px;top:320.6px">13</div>
<div class="c" style="left:327.4px;top:320.6px">11</div>
<div class="c" style="left:366.5px;top:320.6px">5</div>
<div class="c" style="left:405.5px;top:320.6px">4</div>
<div class="c" style="left:444.6px;top:320.6px">3</div>
<div class="c" style="left:483.6px;top:320.6px">4</div>
<div class="c" style="left:522.7px;top:320.6px">5</div>
<div class="c" style="left:561.7px;top:320.6px">15</div>
<div class="c" style="left:600.8px;top:320.6px">19</div>
<div class="c" style="left:639.8px;top:320.6px">23</div>
<div class="c" style="left:678.9px;top:320.6px">23</div>
<div class="c" style="left:717.9px;top:320.6px">23</div>
<div class="c" style="left:757.0px;top:320.6px">23</div>
<div class="n" style="left:65.39999999999999px;top:330.3px">Leicester City</div>
<div class="c" style="left:171.2px;top:330.3px">23</div>
<div class="c" style="left:210.3px;top:330.3px">23</div>
<div class="c" style="left:249.3px;top:330.3px">21</div>
<div class="c" style="left:288.4px;top:330.3px">23</div>
<div class="c" style="left:327.4px;top:330.3px">9</div>
<div class="c" style="left:366.5px;top:330.3px">10</div>
<div class="c" style="left:405.5px;top:330.3px">10</div>
<div class="c" style="left:444.6px;top:330.3px">8</div>
<div class="c" style="left:483.6px;top:330.3px">13</div>
<div class="c" style="left:522.7px;top:330.3px">20</div>
<div class="c" style="left:561.7px;top:330.3px">23</div>
<div class="c" style="left:600.8px;top:330.3px">18</div>
<div class="c" style="left:639.8px;top:330.3px">23</div>
<div class="c" style="left:678.9px;top:330.3px">23</div>
<div class="c" style="left:717.9px;top:330.3px">23</div>
<div class="c" style="left:757.0px;top:330.3px">23</div>
<div class="n" style="left:65.39999999999999px;top:339.9px">Liverpool</div>
<div class="c" style="left:171.2px;top:339.9px">6</div>
<div class="c" style="left:210.3px;top:339.9px">8</div>
<div class="c" style="left:249.3px;top:339.9px">4</div>
<div class="c" style="left:288.4px;top:339.9px">3</div>
<div class="c" style="left:327.4px;top:339.9px">4</div>
<div class="c" style="left:366.5px;top:339.9px">3</div>
<div class="c" style="left:405.5px;top:339.9px">7</div>
<div class="c" style="left:444.6px;top:339.9px">4</div>
<div class="c" style="left:483.6px;top:339.9px">3</div>
<div class="c" style="left:522.7px;top:339.9px">2</div>
<div class="c" style="left:561.7px;top:339.9px">5</div>
<div class="c" style="left:600.8px;top:339.9px">4</div>
<div class="c" style="left:639.8px;top:339.9px">5</div>
<div class="c" style="left:678.9px;top:339.9px">3</div>
<div class="c" style="left:717.9px;top:339.9px">3</div>
<div class="c" style="left:757.0px;top:339.9px">4</div>
<div class="n" style="left:65.39999999999999px;top:349.5px">Manchester City</div>
<div class="c" style="left:171.2px;top:349.5px">9</div>
<div class="c" style="left:210.3px;top:349.5px">16</div>
<div class="c" style="left:249.3px;top:349.5px">17</div>
<div class="c" style="left:288.4px;top:349.5px">18</div>
<div class="c" style="left:327.4px;top:349.5px">23</div>
<div class="c" style="left:366.5px;top:349.5px">23</div>
<div class="c" style="left:405.5px;top:349.5px">23</div>
<div class="c" style="left:444.6px;top:349.5px">23</div>
<div class="c" style="left:483.6px;top:349.5px">18</div>
<div class="c" style="left:522.7px;top:349.5px">23</div>
<div class="c" style="left:561.7px;top:349.5px">9</div>
<div class="c" style="left:600.8px;top:349.5px">16</div>
<div class="c" style="left:639.8px;top:349.5px">8</div>
<div class="c" style="left:678.9px;top:349.5px">15</div>
<div class="c" style="left:717.9px;top:349.5px">14</div>
<div class="c" style="left:757.0px;top:349.5px">9</div>
<div class="n" style="left:65.39999999999999px;top:359.2px">Manchester United</div>
<div class="c" style="left:171.2px;top:359.2px">1</div>
<div class="c" style="left:210.3px;top:359.2px">1</div>
<div class="c" style="left:249.3px;top:359.2px">2</div>
<div class="c" style="left:288.4px;top:359.2px">1</div>
<div class="c" style="left:327.4px;top:359.2px">1</div>
<div class="c" style="left:366.5px;top:359.2px">2</div>
<div class="c" style="left:405.5px;top:359.2px">1</div>
<div class="c" style="left:444.6px;top:359.2px">1</div>
<div class="c" style="left:483.6px;top:359.2px">1</div>
<div class="c" style="left:522.7px;top:359.2px">3</div>
<div class="c" style="left:561.7px;top:359.2px">1</div>
<div class="c" style="left:600.8px;top:359.2px">3</div>
<div class="c" style="left:639.8px;top:359.2px">3</div>
<div class="c" style="left:678.9px;top:359.2px">2</div>
<div class="c" style="left:717.9px;top:359.2px">1</div>
<div class="c" style="left:757.0px;top:359.2px">1</div>
<div class="n" style="left:65.39999999999999px;top:368.8px">Middlesbrough</div>
<div class="c" style="left:171.2px;top:368.8px">21</div>
<div class="c" style="left:210.3px;top:368.8px">23</div>
<div class="c" style="left:249.3px;top:368.8px">23</div>
<div class="c" style="left:288.4px;top:368.8px">12</div>
<div class="c" style="left:327.4px;top:368.8px">19</div>
<div class="c" style="left:366.5px;top:368.8px">23</div>
<div class="c" style="left:405.5px;top:368.8px">9</div>
<div class="c" style="left:444.6px;top:368.8px">12</div>
<div class="c" style="left:483.6px;top:368.8px">14</div>
<div class="c" style="left:522.7px;top:368.8px">12</div>
<div class="c" style="left:561.7px;top:368.8px">11</div>
<div class="c" style="left:600.8px;top:368.8px">11</div>
<div class="c" style="left:639.8px;top:368.8px">7</div>
<div class="c" style="left:678.9px;top:368.8px">14</div>
<div class="c" style="left:717.9px;top:368.8px">12</div>
<div class="c" style="left:757.0px;top:368.8px">13</div>
<div class="n" style="left:65.39999999999999px;top:378.4px">Newcastle United</div>
<div class="c" style="left:171.2px;top:378.4px">23</div>
<div class="c" style="left:210.3px;top:378.4px">3</div>
<div class="c" style="left:249.3px;top:378.4px">6</div>
<div class="c" style="left:288.4px;top:378.4px">2</div>
<div class="c" style="left:327.4px;top:378.4px">2</div>
<div class="c" style="left:366.5px;top:378.4px">13</div>
<div class="c" style="left:405.5px;top:378.4px">13</div>
<div class="c" style="left:444.6px;top:378.4px">11</div>
<div class="c" style="left:483.6px;top:378.4px">11</div>
<div class="c" style="left:522.7px;top:378.4px">4</div>
<div class="c" style="left:561.7px;top:378.4px">3</div>
<div class="c" style="left:600.8px;top:378.4px">5</div>
<div class="c" style="left:639.8px;top:378.4px">14</div>
<div class="c" style="left:678.9px;top:378.4px">7</div>
<div class="c" style="left:717.9px;top:378.4px">13</div>
<div class="c" style="left:757.0px;top:378.4px">12</div>
<div class="n" style="left:65.39999999999999px;top:388.1px">Norwich City</div>
<div class="c" style="left:171.2px;top:388.1px">3</div>
<div class="c" style="left:210.3px;top:388.1px">12</div>
<div class="c" style="left:249.3px;top:388.1px">20</div>
<div class="c" style="left:288.4px;top:388.1px">23</div>
<div class="c" style="left:327.4px;top:388.1px">23</div>
<div class="c" style="left:366.5px;top:388.1px">23</div>
<div class="c" style="left:405.5px;top:388.1px">23</div>
<div class="c" style="left:444.6px;top:388.1px">23</div>
<div class="c" style="left:483.6px;top:388.1px">23</div>
<div class="c" style="left:522.7px;top:388.1px">23</div>
<div class="c" style="left:561.7px;top:388.1px">23</div>
<div class="c" style="left:600.8px;top:388.1px">23</div>
<div class="c" style="left:639.8px;top:388.1px">19</div>
<div class="c" style="left:678.9px;top:388.1px">23</div>
<div class="c" style="left:717.9px;top:388.1px">23</div>
<div class="c" style="left:757.0px;top:388.1px">23</div>
<div class="n" style="left:65.39999999999999px;top:397.7px">Nottingham Forest</div>
<div class="c" style="left:171.2px;top:397.7px">22</div>
<div class="c" style="left:210.3px;top:397.7px">23</div>
<div class="c" style="left:249.3px;top:397.7px">3</div>
<div class="c" style="left:288.4px;top:397.7px">9</div>
<div class="c" style="left:327.4px;top:397.7px">20</div>
<div class="c" style="left:366.5px;top:397.7px">23</div>
<div class="c" style="left:405.5px;top:397.7px">20</div>
<div class="c" style="left:444.6px;top:397.7px">23</div>
<div class="c" style="left:483.6px;top:397.7px">23</div>
<div class="c" style="left:522.7px;top:397.7px">23</div>
<div class="c" style="left:561.7px;top:397.7px">23</div>
<div class="c" style="left:600.8px;top:397.7px">23</div>
<div class="c" style="left:639.8px;top:397.7px">23</div>
<div class="c" style="left:678.9px;top:397.7px">23</div>
<div class="c" style="left:717.9px;top:397.7px">23</div>
<div class="c" style="left:757.0px;top:397.7px">23</div>
<div class="n" style="left:65.39999999999999px;top:407.3px">Oldham Athletic</div>
<div class="c" style="left:171.2px;top:407.3px">19</div>
<div class="c" style="left:210.3px;top:407.3px">21</div>
<div class="c" style="left:249.3px;top:407.3px">23</div>
<div class="c" style="left:288.4px;top:407.3px">23</div>
<div class="c" style="left:327.4px;top:407.3px">23</div>
<div class="c" style="left:366.5px;top:407.3px">23</div>
<div class="c" style="left:405.5px;top:407.3px">23</div>
<div class="c" style="left:444.6px;top:407.3px">23</div>
<div class="c" style="left:483.6px;top:407.3px">23</div>
<div class="c" style="left:522.7px;top:407.3px">23</div>
<div class="c" style="left:561.7px;top:407.3px">23</div>
<div class="c" style="left:600.8px;top:407.3px">23</div>
<div class="c" style="left:639.8px;top:407.3px">23</div>
<div class="c" style="left:678.9px;top:407.3px">23</div>
<div class="c" style="left:717.9px;top:407.3px">23</div>
<div class="c" style="left:757.0px;top:407.3px">23</div>
<svg class="abs" style="left:0;top:0" width="768" height="404" viewBox="0 0 768 404">
<path d="M63.8 404 V122.30000000000001 H152.1 V404" fill="none" stroke="#a78dd9" stroke-width="1.1"/>
<rect x="62.9" y="121.30000000000001" width="2" height="2" fill="#7a5cc0"/>
<rect x="151.7" y="112.365" width="620.3" height="10.035" fill="none" stroke="#f16b76" stroke-width="2.5"/>
<circle cx="151.7" cy="112.465" r="2.4" fill="#f0525e"/>
<circle cx="151.7" cy="122.4" r="2.4" fill="#f0525e"/>
</svg>
<div class="abs" style="left:309.8px;top:231.9px;width:216.4px;height:129.9px;background:#fff;border:1px solid #d2d2d2;box-sizing:border-box;box-shadow:0 0 0 2.8px #fff"></div>
<svg class="abs" style="left:300px;top:225px" width="236" height="146" viewBox="300 225 236 146" font-family="Liberation Sans, sans-serif">
<line x1="323.4" y1="275.70" x2="517.6" y2="275.70" stroke="#dcdcdc" stroke-width="0.6"/>
<text x="319.6" y="277.40" font-size="4.9" fill="#6a6a6a" text-anchor="end">0</text>
<line x1="323.4" y1="269.40" x2="517.6" y2="269.40" stroke="#dcdcdc" stroke-width="0.6"/>
<text x="319.6" y="271.10" font-size="4.9" fill="#6a6a6a" text-anchor="end">10</text>
<line x1="323.4" y1="263.10" x2="517.6" y2="263.10" stroke="#dcdcdc" stroke-width="0.6"/>
<text x="319.6" y="264.80" font-size="4.9" fill="#6a6a6a" text-anchor="end">20</text>
<line x1="323.4" y1="256.80" x2="517.6" y2="256.80" stroke="#dcdcdc" stroke-width="0.6"/>
<text x="319.6" y="258.50" font-size="4.9" fill="#6a6a6a" text-anchor="end">30</text>
<text x="417.5" y="245.1" font-size="7.7" fill="#5f5f5f" text-anchor="middle">Chart Title</text>
<polyline points="324.5,261.2 328.6,269.4 332.8,274.4 336.9,261.2 341.0,261.2 345.1,273.2 349.3,261.2 353.4,261.2 357.5,261.2 361.7,261.2 365.8,261.2 369.9,261.2 374.1,268.8 378.2,266.2 382.3,263.1 386.4,261.2 390.6,267.5 394.7,261.2 398.8,261.2 403.0,265.6 407.1,265.0 411.2,261.2 415.4,271.9 419.5,270.0 423.6,275.1 427.8,262.5 431.9,261.2 436.0,273.8 440.1,261.8 444.3,263.7 448.4,261.2 452.5,272.6 456.7,261.2 460.8,266.9 464.9,271.3 469.0,264.4 473.2,261.2 477.3,261.2 481.4,261.2 485.6,261.2 489.7,270.7 493.8,261.2 498.0,261.2 502.1,261.2 506.2,261.2 510.4,268.1 514.5,261.2" fill="none" stroke="#4472C4" stroke-width="1.1" stroke-linejoin="round" stroke-linecap="round"/>
<g fill="#4472C4"><circle cx="324.5" cy="261.2" r="1.65"/><circle cx="328.6" cy="269.4" r="1.65"/><circle cx="332.8" cy="274.4" r="1.65"/><circle cx="336.9" cy="261.2" r="1.65"/><circle cx="341.0" cy="261.2" r="1.65"/><circle cx="345.1" cy="273.2" r="1.65"/><circle cx="349.3" cy="261.2" r="1.65"/><circle cx="353.4" cy="261.2" r="1.65"/><circle cx="357.5" cy="261.2" r="1.65"/><circle cx="361.7" cy="261.2" r="1.65"/><circle cx="365.8" cy="261.2" r="1.65"/><circle cx="369.9" cy="261.2" r="1.65"/><circle cx="374.1" cy="268.8" r="1.65"/><circle cx="378.2" cy="266.2" r="1.65"/><circle cx="382.3" cy="263.1" r="1.65"/><circle cx="386.4" cy="261.2" r="1.65"/><circle cx="390.6" cy="267.5" r="1.65"/><circle cx="394.7" cy="261.2" r="1.65"/><circle cx="398.8" cy="261.2" r="1.65"/><circle cx="403.0" cy="265.6" r="1.65"/><circle cx="407.1" cy="265.0" r="1.65"/><circle cx="411.2" cy="261.2" r="1.65"/><circle cx="415.4" cy="271.9" r="1.65"/><circle cx="419.5" cy="270.0" r="1.65"/><circle cx="423.6" cy="275.1" r="1.65"/><circle cx="427.8" cy="262.5" r="1.65"/><circle cx="431.9" cy="261.2" r="1.65"/><circle cx="436.0" cy="273.8" r="1.65"/><circle cx="440.1" cy="261.8" r="1.65"/><circle cx="444.3" cy="263.7" r="1.65"/><circle cx="448.4" cy="261.2" r="1.65"/><circle cx="452.5" cy="272.6" r="1.65"/><circle cx="456.7" cy="261.2" r="1.65"/><circle cx="460.8" cy="266.9" r="1.65"/><circle cx="464.9" cy="271.3" r="1.65"/><circle cx="469.0" cy="264.4" r="1.65"/><circle cx="473.2" cy="261.2" r="1.65"/><circle cx="477.3" cy="261.2" r="1.65"/><circle cx="481.4" cy="261.2" r="1.65"/><circle cx="485.6" cy="261.2" r="1.65"/><circle cx="489.7" cy="270.7" r="1.65"/><circle cx="493.8" cy="261.2" r="1.65"/><circle cx="498.0" cy="261.2" r="1.65"/><circle cx="502.1" cy="261.2" r="1.65"/><circle cx="506.2" cy="261.2" r="1.65"/><circle cx="510.4" cy="268.1" r="1.65"/><circle cx="514.5" cy="261.2" r="1.65"/></g>
<polyline points="324.5,261.2 328.6,273.2 332.8,269.4 336.9,261.2 341.0,261.2 345.1,274.4 349.3,261.2 353.4,261.2 357.5,261.2 361.7,261.2 365.8,261.2 369.9,261.2 374.1,266.9 378.2,268.8 382.3,261.2 386.4,261.2 390.6,265.0 394.7,261.2 398.8,261.2 403.0,263.7 407.1,272.6 411.2,261.2 415.4,270.7 419.5,265.6 423.6,275.1 427.8,261.2 431.9,273.8 436.0,268.1 440.1,261.2 444.3,262.5 448.4,261.2 452.5,270.0 456.7,261.2 460.8,263.1 464.9,271.3 469.0,264.4 473.2,261.2 477.3,261.2 481.4,261.2 485.6,261.8 489.7,266.2 493.8,261.2 498.0,261.2 502.1,267.5 506.2,261.2 510.4,271.9 514.5,261.2" fill="none" stroke="#ED7D31" stroke-width="1.1" stroke-linejoin="round" stroke-linecap="round"/>
<g fill="#ED7D31"><circle cx="324.5" cy="261.2" r="1.65"/><circle cx="328.6" cy="273.2" r="1.65"/><circle cx="332.8" cy="269.4" r="1.65"/><circle cx="336.9" cy="261.2" r="1.65"/><circle cx="341.0" cy="261.2" r="1.65"/><circle cx="345.1" cy="274.4" r="1.65"/><circle cx="349.3" cy="261.2" r="1.65"/><circle cx="353.4" cy="261.2" r="1.65"/><circle cx="357.5" cy="261.2" r="1.65"/><circle cx="361.7" cy="261.2" r="1.65"/><circle cx="365.8" cy="261.2" r="1.65"/><circle cx="369.9" cy="261.2" r="1.65"/><circle cx="374.1" cy="266.9" r="1.65"/><circle cx="378.2" cy="268.8" r="1.65"/><circle cx="382.3" cy="261.2" r="1.65"/><circle cx="386.4" cy="261.2" r="1.65"/><circle cx="390.6" cy="265.0" r="1.65"/><circle cx="394.7" cy="261.2" r="1.65"/><circle cx="398.8" cy="261.2" r="1.65"/><circle cx="403.0" cy="263.7" r="1.65"/><circle cx="407.1" cy="272.6" r="1.65"/><circle cx="411.2" cy="261.2" r="1.65"/><circle cx="415.4" cy="270.7" r="1.65"/><circle cx="419.5" cy="265.6" r="1.65"/><circle cx="423.6" cy="275.1" r="1.65"/><circle cx="427.8" cy="261.2" r="1.65"/><circle cx="431.9" cy="273.8" r="1.65"/><circle cx="436.0" cy="268.1" r="1.65"/><circle cx="440.1" cy="261.2" r="1.65"/><circle cx="444.3" cy="262.5" r="1.65"/><circle cx="448.4" cy="261.2" r="1.65"/><circle cx="452.5" cy="270.0" r="1.65"/><circle cx="456.7" cy="261.2" r="1.65"/><circle cx="460.8" cy="263.1" r="1.65"/><circle cx="464.9" cy="271.3" r="1.65"/><circle cx="469.0" cy="264.4" r="1.65"/><circle cx="473.2" cy="261.2" r="1.65"/><circle cx="477.3" cy="261.2" r="1.65"/><circle cx="481.4" cy="261.2" r="1.65"/><circle cx="485.6" cy="261.8" r="1.65"/><circle cx="489.7" cy="266.2" r="1.65"/><circle cx="493.8" cy="261.2" r="1.65"/><circle cx="498.0" cy="261.2" r="1.65"/><circle cx="502.1" cy="267.5" r="1.65"/><circle cx="506.2" cy="261.2" r="1.65"/><circle cx="510.4" cy="271.9" r="1.65"/><circle cx="514.5" cy="261.2" r="1.65"/></g>
<polyline points="324.5,261.2 328.6,268.1 332.8,264.4 336.9,261.2 341.0,261.2 345.1,275.1 349.3,261.2 353.4,261.2 357.5,261.2 361.7,261.2 365.8,261.2 369.9,261.2 374.1,268.8 378.2,265.6 382.3,263.7 386.4,261.2 390.6,266.2 394.7,261.2 398.8,261.2 403.0,261.8 407.1,272.6 411.2,262.5 415.4,273.2 419.5,265.0 423.6,274.4 427.8,261.2 431.9,271.9 436.0,263.1 440.1,273.8 444.3,261.2 448.4,261.2 452.5,270.7 456.7,261.2 460.8,261.2 464.9,267.5 469.0,269.4 473.2,261.2 477.3,261.2 481.4,261.2 485.6,261.2 489.7,271.3 493.8,261.2 498.0,261.2 502.1,266.9 506.2,261.2 510.4,270.0 514.5,261.2" fill="none" stroke="#A5A5A5" stroke-width="1.1" stroke-linejoin="round" stroke-linecap="round"/>
<g fill="#A5A5A5"><circle cx="324.5" cy="261.2" r="1.65"/><circle cx="328.6" cy="268.1" r="1.65"/><circle cx="332.8" cy="264.4" r="1.65"/><circle cx="336.9" cy="261.2" r="1.65"/><circle cx="341.0" cy="261.2" r="1.65"/><circle cx="345.1" cy="275.1" r="1.65"/><circle cx="349.3" cy="261.2" r="1.65"/><circle cx="353.4" cy="261.2" r="1.65"/><circle cx="357.5" cy="261.2" r="1.65"/><circle cx="361.7" cy="261.2" r="1.65"/><circle cx="365.8" cy="261.2" r="1.65"/><circle cx="369.9" cy="261.2" r="1.65"/><circle cx="374.1" cy="268.8" r="1.65"/><circle cx="378.2" cy="265.6" r="1.65"/><circle cx="382.3" cy="263.7" r="1.65"/><circle cx="386.4" cy="261.2" r="1.65"/><circle cx="390.6" cy="266.2" r="1.65"/><circle cx="394.7" cy="261.2" r="1.65"/><circle cx="398.8" cy="261.2" r="1.65"/><circle cx="403.0" cy="261.8" r="1.65"/><circle cx="407.1" cy="272.6" r="1.65"/><circle cx="411.2" cy="262.5" r="1.65"/><circle cx="415.4" cy="273.2" r="1.65"/><circle cx="419.5" cy="265.0" r="1.65"/><circle cx="423.6" cy="274.4" r="1.65"/><circle cx="427.8" cy="261.2" r="1.65"/><circle cx="431.9" cy="271.9" r="1.65"/><circle cx="436.0" cy="263.1" r="1.65"/><circle cx="440.1" cy="273.8" r="1.65"/><circle cx="444.3" cy="261.2" r="1.65"/><circle cx="448.4" cy="261.2" r="1.65"/><circle cx="452.5" cy="270.7" r="1.65"/><circle cx="456.7" cy="261.2" r="1.65"/><circle cx="460.8" cy="261.2" r="1.65"/><circle cx="464.9" cy="267.5" r="1.65"/><circle cx="469.0" cy="269.4" r="1.65"/><circle cx="473.2" cy="261.2" r="1.65"/><circle cx="477.3" cy="261.2" r="1.65"/><circle cx="481.4" cy="261.2" r="1.65"/><circle cx="485.6" cy="261.2" r="1.65"/><circle cx="489.7" cy="271.3" r="1.65"/><circle cx="493.8" cy="261.2" r="1.65"/><circle cx="498.0" cy="261.2" r="1.65"/><circle cx="502.1" cy="266.9" r="1.65"/><circle cx="506.2" cy="261.2" r="1.65"/><circle cx="510.4" cy="270.0" r="1.65"/><circle cx="514.5" cy="261.2" r="1.65"/></g>
<polyline points="324.5,261.2 328.6,272.6 332.8,273.2 336.9,261.2 341.0,261.2 345.1,271.3 349.3,261.2 353.4,263.1 357.5,261.2 361.7,261.2 365.8,261.2 369.9,261.2 374.1,268.8 378.2,265.6 382.3,261.2 386.4,261.2 390.6,271.9 394.7,261.2 398.8,261.2 403.0,261.2 407.1,267.5 411.2,261.2 415.4,273.8 419.5,264.4 423.6,275.1 427.8,268.1 431.9,274.4 436.0,261.2 440.1,270.0 444.3,261.2 448.4,261.2 452.5,263.7 456.7,261.2 460.8,261.2 464.9,266.2 469.0,265.0 473.2,261.2 477.3,261.2 481.4,261.2 485.6,261.2 489.7,270.7 493.8,261.2 498.0,261.2 502.1,269.4 506.2,261.2 510.4,266.9 514.5,261.2" fill="none" stroke="#FFC000" stroke-width="1.1" stroke-linejoin="round" stroke-linecap="round"/>
<g fill="#FFC000"><circle cx="324.5" cy="261.2" r="1.65"/><circle cx="328.6" cy="272.6" r="1.65"/><circle cx="332.8" cy="273.2" r="1.65"/><circle cx="336.9" cy="261.2" r="1.65"/><circle cx="341.0" cy="261.2" r="1.65"/><circle cx="345.1" cy="271.3" r="1.65"/><circle cx="349.3" cy="261.2" r="1.65"/><circle cx="353.4" cy="263.1" r="1.65"/><circle cx="357.5" cy="261.2" r="1.65"/><circle cx="361.7" cy="261.2" r="1.65"/><circle cx="365.8" cy="261.2" r="1.65"/><circle cx="369.9" cy="261.2" r="1.65"/><circle cx="374.1" cy="268.8" r="1.65"/><circle cx="378.2" cy="265.6" r="1.65"/><circle cx="382.3" cy="261.2" r="1.65"/><circle cx="386.4" cy="261.2" r="1.65"/><circle cx="390.6" cy="271.9" r="1.65"/><circle cx="394.7" cy="261.2" r="1.65"/><circle cx="398.8" cy="261.2" r="1.65"/><circle cx="403.0" cy="261.2" r="1.65"/><circle cx="407.1" cy="267.5" r="1.65"/><circle cx="411.2" cy="261.2" r="1.65"/><circle cx="415.4" cy="273.8" r="1.65"/><circle cx="419.5" cy="264.4" r="1.65"/><circle cx="423.6" cy="275.1" r="1.65"/><circle cx="427.8" cy="268.1" r="1.65"/><circle cx="431.9" cy="274.4" r="1.65"/><circle cx="436.0" cy="261.2" r="1.65"/><circle cx="440.1" cy="270.0" r="1.65"/><circle cx="444.3" cy="261.2" r="1.65"/><circle cx="448.4" cy="261.2" r="1.65"/><circle cx="452.5" cy="263.7" r="1.65"/><circle cx="456.7" cy="261.2" r="1.65"/><circle cx="460.8" cy="261.2" r="1.65"/><circle cx="464.9" cy="266.2" r="1.65"/><circle cx="469.0" cy="265.0" r="1.65"/><circle cx="473.2" cy="261.2" r="1.65"/><circle cx="477.3" cy="261.2" r="1.65"/><circle cx="481.4" cy="261.2" r="1.65"/><circle cx="485.6" cy="261.2" r="1.65"/><circle cx="489.7" cy="270.7" r="1.65"/><circle cx="493.8" cy="261.2" r="1.65"/><circle cx="498.0" cy="261.2" r="1.65"/><circle cx="502.1" cy="269.4" r="1.65"/><circle cx="506.2" cy="261.2" r="1.65"/><circle cx="510.4" cy="266.9" r="1.65"/><circle cx="514.5" cy="261.2" r="1.65"/></g>
<polyline points="324.5,261.2 328.6,273.8 332.8,272.6 336.9,261.2 341.0,261.2 345.1,267.5 349.3,261.2 353.4,261.2 357.5,261.2 361.7,261.2 365.8,261.2 369.9,266.2 374.1,271.9 378.2,265.0 382.3,261.2 386.4,268.1 390.6,266.2 394.7,261.2 398.8,261.2 403.0,261.2 407.1,268.8 411.2,270.0 415.4,273.2 419.5,261.2 423.6,275.1 427.8,263.7 431.9,274.4 436.0,261.2 440.1,263.1 444.3,261.2 448.4,261.2 452.5,261.2 456.7,261.2 460.8,261.2 464.9,271.3 469.0,265.6 473.2,261.2 477.3,264.4 481.4,261.2 485.6,261.2 489.7,269.4 493.8,261.2 498.0,261.2 502.1,266.9 506.2,261.2 510.4,270.7 514.5,261.2" fill="none" stroke="#5B9BD5" stroke-width="1.1" stroke-linejoin="round" stroke-linecap="round"/>
<g fill="#5B9BD5"><circle cx="324.5" cy="261.2" r="1.65"/><circle cx="328.6" cy="273.8" r="1.65"/><circle cx="332.8" cy="272.6" r="1.65"/><circle cx="336.9" cy="261.2" r="1.65"/><circle cx="341.0" cy="261.2" r="1.65"/><circle cx="345.1" cy="267.5" r="1.65"/><circle cx="349.3" cy="261.2" r="1.65"/><circle cx="353.4" cy="261.2" r="1.65"/><circle cx="357.5" cy="261.2" r="1.65"/><circle cx="361.7" cy="261.2" r="1.65"/><circle cx="365.8" cy="261.2" r="1.65"/><circle cx="369.9" cy="266.2" r="1.65"/><circle cx="374.1" cy="271.9" r="1.65"/><circle cx="378.2" cy="265.0" r="1.65"/><circle cx="382.3" cy="261.2" r="1.65"/><circle cx="386.4" cy="268.1" r="1.65"/><circle cx="390.6" cy="266.2" r="1.65"/><circle cx="394.7" cy="261.2" r="1.65"/><circle cx="398.8" cy="261.2" r="1.65"/><circle cx="403.0" cy="261.2" r="1.65"/><circle cx="407.1" cy="268.8" r="1.65"/><circle cx="411.2" cy="270.0" r="1.65"/><circle cx="415.4" cy="273.2" r="1.65"/><circle cx="419.5" cy="261.2" r="1.65"/><circle cx="423.6" cy="275.1" r="1.65"/><circle cx="427.8" cy="263.7" r="1.65"/><circle cx="431.9" cy="274.4" r="1.65"/><circle cx="436.0" cy="261.2" r="1.65"/><circle cx="440.1" cy="263.1" r="1.65"/><circle cx="444.3" cy="261.2" r="1.65"/><circle cx="448.4" cy="261.2" r="1.65"/><circle cx="452.5" cy="261.2" r="1.65"/><circle cx="456.7" cy="261.2" r="1.65"/><circle cx="460.8" cy="261.2" r="1.65"/><circle cx="464.9" cy="271.3" r="1.65"/><circle cx="469.0" cy="265.6" r="1.65"/><circle cx="473.2" cy="261.2" r="1.65"/><circle cx="477.3" cy="264.4" r="1.65"/><circle cx="481.4" cy="261.2" r="1.65"/><circle cx="485.6" cy="261.2" r="1.65"/><circle cx="489.7" cy="269.4" r="1.65"/><circle cx="493.8" cy="261.2" r="1.65"/><circle cx="498.0" cy="261.2" r="1.65"/><circle cx="502.1" cy="266.9" r="1.65"/><circle cx="506.2" cy="261.2" r="1.65"/><circle cx="510.4" cy="270.7" r="1.65"/><circle cx="514.5" cy="261.2" r="1.65"/></g>
<polyline points="324.5,261.2 328.6,275.1 332.8,271.3 336.9,263.7 341.0,261.2 345.1,271.9 349.3,261.2 353.4,264.4 357.5,261.2 361.7,261.2 365.8,261.2 369.9,261.2 374.1,273.2 378.2,268.8 382.3,263.1 386.4,270.0 390.6,265.0 394.7,261.2 398.8,261.2 403.0,261.2 407.1,272.6 411.2,269.4 415.4,273.8 419.5,261.2 423.6,274.4 427.8,261.2 431.9,267.5 436.0,261.2 440.1,261.2 444.3,261.2 448.4,261.2 452.5,261.2 456.7,261.2 460.8,261.2 464.9,265.6 469.0,268.1 473.2,261.2 477.3,261.2 481.4,261.2 485.6,261.2 489.7,266.9 493.8,261.2 498.0,261.2 502.1,270.7 506.2,261.2 510.4,266.2 514.5,261.2" fill="none" stroke="#70AD47" stroke-width="1.1" stroke-linejoin="round" stroke-linecap="round"/>
<g fill="#70AD47"><circle cx="324.5" cy="261.2" r="1.65"/><circle cx="328.6" cy="275.1" r="1.65"/><circle cx="332.8" cy="271.3" r="1.65"/><circle cx="336.9" cy="263.7" r="1.65"/><circle cx="341.0" cy="261.2" r="1.65"/><circle cx="345.1" cy="271.9" r="1.65"/><circle cx="349.3" cy="261.2" r="1.65"/><circle cx="353.4" cy="264.4" r="1.65"/><circle cx="357.5" cy="261.2" r="1.65"/><circle cx="361.7" cy="261.2" r="1.65"/><circle cx="365.8" cy="261.2" r="1.65"/><circle cx="369.9" cy="261.2" r="1.65"/><circle cx="374.1" cy="273.2" r="1.65"/><circle cx="378.2" cy="268.8" r="1.65"/><circle cx="382.3" cy="263.1" r="1.65"/><circle cx="386.4" cy="270.0" r="1.65"/><circle cx="390.6" cy="265.0" r="1.65"/><circle cx="394.7" cy="261.2" r="1.65"/><circle cx="398.8" cy="261.2" r="1.65"/><circle cx="403.0" cy="261.2" r="1.65"/><circle cx="407.1" cy="272.6" r="1.65"/><circle cx="411.2" cy="269.4" r="1.65"/><circle cx="415.4" cy="273.8" r="1.65"/><circle cx="419.5" cy="261.2" r="1.65"/><circle cx="423.6" cy="274.4" r="1.65"/><circle cx="427.8" cy="261.2" r="1.65"/><circle cx="431.9" cy="267.5" r="1.65"/><circle cx="436.0" cy="261.2" r="1.65"/><circle cx="440.1" cy="261.2" r="1.65"/><circle cx="444.3" cy="261.2" r="1.65"/><circle cx="448.4" cy="261.2" r="1.65"/><circle cx="452.5" cy="261.2" r="1.65"/><circle cx="456.7" cy="261.2" r="1.65"/><circle cx="460.8" cy="261.2" r="1.65"/><circle cx="464.9" cy="265.6" r="1.65"/><circle cx="469.0" cy="268.1" r="1.65"/><circle cx="473.2" cy="261.2" r="1.65"/><circle cx="477.3" cy="261.2" r="1.65"/><circle cx="481.4" cy="261.2" r="1.65"/><circle cx="485.6" cy="261.2" r="1.65"/><circle cx="489.7" cy="266.9" r="1.65"/><circle cx="493.8" cy="261.2" r="1.65"/><circle cx="498.0" cy="261.2" r="1.65"/><circle cx="502.1" cy="270.7" r="1.65"/><circle cx="506.2" cy="261.2" r="1.65"/><circle cx="510.4" cy="266.2" r="1.65"/><circle cx="514.5" cy="261.2" r="1.65"/></g>
<polyline points="324.5,261.2 328.6,274.4 332.8,271.9 336.9,261.2 341.0,261.2 345.1,263.7 349.3,261.2 353.4,261.2 357.5,261.2 361.7,261.2 365.8,261.2 369.9,264.4 374.1,273.8 378.2,266.2 382.3,261.2 386.4,270.7 390.6,266.9 394.7,261.2 398.8,261.2 403.0,261.2 407.1,273.2 411.2,269.4 415.4,271.3 419.5,261.2 423.6,275.1 427.8,270.0 431.9,267.5 436.0,261.2 440.1,263.1 444.3,261.2 448.4,261.2 452.5,261.2 456.7,261.2 460.8,261.2 464.9,268.1 469.0,265.0 473.2,261.2 477.3,261.2 481.4,261.2 485.6,261.2 489.7,268.8 493.8,261.2 498.0,261.2 502.1,272.6 506.2,261.2 510.4,265.6 514.5,261.2" fill="none" stroke="#264478" stroke-width="1.1" stroke-linejoin="round" stroke-linecap="round"/>
<g fill="#264478"><circle cx="324.5" cy="261.2" r="1.65"/><circle cx="328.6" cy="274.4" r="1.65"/><circle cx="332.8" cy="271.9" r="1.65"/><circle cx="336.9" cy="261.2" r="1.65"/><circle cx="341.0" cy="261.2" r="1.65"/><circle cx="345.1" cy="263.7" r="1.65"/><circle cx="349.3" cy="261.2" r="1.65"/><circle cx="353.4" cy="261.2" r="1.65"/><circle cx="357.5" cy="261.2" r="1.65"/><circle cx="361.7" cy="261.2" r="1.65"/><circle cx="365.8" cy="261.2" r="1.65"/><circle cx="369.9" cy="264.4" r="1.65"/><circle cx="374.1" cy="273.8" r="1.65"/><circle cx="378.2" cy="266.2" r="1.65"/><circle cx="382.3" cy="261.2" r="1.65"/><circle cx="386.4" cy="270.7" r="1.65"/><circle cx="390.6" cy="266.9" r="1.65"/><circle cx="394.7" cy="261.2" r="1.65"/><circle cx="398.8" cy="261.2" r="1.65"/><circle cx="403.0" cy="261.2" r="1.65"/><circle cx="407.1" cy="273.2" r="1.65"/><circle cx="411.2" cy="269.4" r="1.65"/><circle cx="415.4" cy="271.3" r="1.65"/><circle cx="419.5" cy="261.2" r="1.65"/><circle cx="423.6" cy="275.1" r="1.65"/><circle cx="427.8" cy="270.0" r="1.65"/><circle cx="431.9" cy="267.5" r="1.65"/><circle cx="436.0" cy="261.2" r="1.65"/><circle cx="440.1" cy="263.1" r="1.65"/><circle cx="444.3" cy="261.2" r="1.65"/><circle cx="448.4" cy="261.2" r="1.65"/><circle cx="452.5" cy="261.2" r="1.65"/><circle cx="456.7" cy="261.2" r="1.65"/><circle cx="460.8" cy="261.2" r="1.65"/><circle cx="464.9" cy="268.1" r="1.65"/><circle cx="469.0" cy="265.0" r="1.65"/><circle cx="473.2" cy="261.2" r="1.65"/><circle cx="477.3" cy="261.2" r="1.65"/><circle cx="481.4" cy="261.2" r="1.65"/><circle cx="485.6" cy="261.2" r="1.65"/><circle cx="489.7" cy="268.8" r="1.65"/><circle cx="493.8" cy="261.2" r="1.65"/><circle cx="498.0" cy="261.2" r="1.65"/><circle cx="502.1" cy="272.6" r="1.65"/><circle cx="506.2" cy="261.2" r="1.65"/><circle cx="510.4" cy="265.6" r="1.65"/><circle cx="514.5" cy="261.2" r="1.65"/></g>
<polyline points="324.5,261.2 328.6,274.4 332.8,271.9 336.9,261.2 341.0,261.2 345.1,261.2 349.3,261.2 353.4,261.2 357.5,265.0 361.7,261.2 365.8,261.2 369.9,266.9 374.1,272.6 378.2,266.9 382.3,261.2 386.4,265.6 390.6,267.5 394.7,261.2 398.8,261.2 403.0,261.2 407.1,273.8 411.2,270.7 415.4,273.2 419.5,261.2 423.6,275.1 427.8,268.1 431.9,268.8 436.0,261.2 440.1,261.2 444.3,261.2 448.4,261.2 452.5,261.2 456.7,261.2 460.8,261.2 464.9,263.7 469.0,266.2 473.2,261.2 477.3,271.3 481.4,261.2 485.6,261.2 489.7,269.4 493.8,263.1 498.0,261.2 502.1,270.0 506.2,261.2 510.4,264.4 514.5,261.2" fill="none" stroke="#9E480E" stroke-width="1.1" stroke-linejoin="round" stroke-linecap="round"/>
<g fill="#9E480E"><circle cx="324.5" cy="261.2" r="1.65"/><circle cx="328.6" cy="274.4" r="1.65"/><circle cx="332.8" cy="271.9" r="1.65"/><circle cx="336.9" cy="261.2" r="1.65"/><circle cx="341.0" cy="261.2" r="1.65"/><circle cx="345.1" cy="261.2" r="1.65"/><circle cx="349.3" cy="261.2" r="1.65"/><circle cx="353.4" cy="261.2" r="1.65"/><circle cx="357.5" cy="265.0" r="1.65"/><circle cx="361.7" cy="261.2" r="1.65"/><circle cx="365.8" cy="261.2" r="1.65"/><circle cx="369.9" cy="266.9" r="1.65"/><circle cx="374.1" cy="272.6" r="1.65"/><circle cx="378.2" cy="266.9" r="1.65"/><circle cx="382.3" cy="261.2" r="1.65"/><circle cx="386.4" cy="265.6" r="1.65"/><circle cx="390.6" cy="267.5" r="1.65"/><circle cx="394.7" cy="261.2" r="1.65"/><circle cx="398.8" cy="261.2" r="1.65"/><circle cx="403.0" cy="261.2" r="1.65"/><circle cx="407.1" cy="273.8" r="1.65"/><circle cx="411.2" cy="270.7" r="1.65"/><circle cx="415.4" cy="273.2" r="1.65"/><circle cx="419.5" cy="261.2" r="1.65"/><circle cx="423.6" cy="275.1" r="1.65"/><circle cx="427.8" cy="268.1" r="1.65"/><circle cx="431.9" cy="268.8" r="1.65"/><circle cx="436.0" cy="261.2" r="1.65"/><circle cx="440.1" cy="261.2" r="1.65"/><circle cx="444.3" cy="261.2" r="1.65"/><circle cx="448.4" cy="261.2" r="1.65"/><circle cx="452.5" cy="261.2" r="1.65"/><circle cx="456.7" cy="261.2" r="1.65"/><circle cx="460.8" cy="261.2" r="1.65"/><circle cx="464.9" cy="263.7" r="1.65"/><circle cx="469.0" cy="266.2" r="1.65"/><circle cx="473.2" cy="261.2" r="1.65"/><circle cx="477.3" cy="271.3" r="1.65"/><circle cx="481.4" cy="261.2" r="1.65"/><circle cx="485.6" cy="261.2" r="1.65"/><circle cx="489.7" cy="269.4" r="1.65"/><circle cx="493.8" cy="263.1" r="1.65"/><circle cx="498.0" cy="261.2" r="1.65"/><circle cx="502.1" cy="270.0" r="1.65"/><circle cx="506.2" cy="261.2" r="1.65"/><circle cx="510.4" cy="264.4" r="1.65"/><circle cx="514.5" cy="261.2" r="1.65"/></g>
<polyline points="324.5,261.2 328.6,274.4 332.8,270.7 336.9,261.2 341.0,261.2 345.1,261.2 349.3,261.2 353.4,261.2 357.5,263.1 361.7,261.2 365.8,261.2 369.9,270.0 374.1,271.9 378.2,263.7 382.3,261.2 386.4,265.0 390.6,265.6 394.7,261.2 398.8,261.2 403.0,272.6 407.1,273.2 411.2,267.5 415.4,273.8 419.5,264.4 423.6,275.1 427.8,266.9 431.9,268.8 436.0,261.2 440.1,261.2 444.3,261.2 448.4,261.2 452.5,261.2 456.7,261.2 460.8,261.2 464.9,261.2 469.0,269.4 473.2,261.2 477.3,271.3 481.4,261.2 485.6,261.2 489.7,268.1 493.8,261.2 498.0,261.2 502.1,266.2 506.2,261.2 510.4,261.2 514.5,261.2" fill="none" stroke="#636363" stroke-width="1.1" stroke-linejoin="round" stroke-linecap="round"/>
<g fill="#636363"><circle cx="324.5" cy="261.2" r="1.65"/><circle cx="328.6" cy="274.4" r="1.65"/><circle cx="332.8" cy="270.7" r="1.65"/><circle cx="336.9" cy="261.2" r="1.65"/><circle cx="341.0" cy="261.2" r="1.65"/><circle cx="345.1" cy="261.2" r="1.65"/><circle cx="349.3" cy="261.2" r="1.65"/><circle cx="353.4" cy="261.2" r="1.65"/><circle cx="357.5" cy="263.1" r="1.65"/><circle cx="361.7" cy="261.2" r="1.65"/><circle cx="365.8" cy="261.2" r="1.65"/><circle cx="369.9" cy="270.0" r="1.65"/><circle cx="374.1" cy="271.9" r="1.65"/><circle cx="378.2" cy="263.7" r="1.65"/><circle cx="382.3" cy="261.2" r="1.65"/><circle cx="386.4" cy="265.0" r="1.65"/><circle cx="390.6" cy="265.6" r="1.65"/><circle cx="394.7" cy="261.2" r="1.65"/><circle cx="398.8" cy="261.2" r="1.65"/><circle cx="403.0" cy="272.6" r="1.65"/><circle cx="407.1" cy="273.2" r="1.65"/><circle cx="411.2" cy="267.5" r="1.65"/><circle cx="415.4" cy="273.8" r="1.65"/><circle cx="419.5" cy="264.4" r="1.65"/><circle cx="423.6" cy="275.1" r="1.65"/><circle cx="427.8" cy="266.9" r="1.65"/><circle cx="431.9" cy="268.8" r="1.65"/><circle cx="436.0" cy="261.2" r="1.65"/><circle cx="440.1" cy="261.2" r="1.65"/><circle cx="444.3" cy="261.2" r="1.65"/><circle cx="448.4" cy="261.2" r="1.65"/><circle cx="452.5" cy="261.2" r="1.65"/><circle cx="456.7" cy="261.2" r="1.65"/><circle cx="460.8" cy="261.2" r="1.65"/><circle cx="464.9" cy="261.2" r="1.65"/><circle cx="469.0" cy="269.4" r="1.65"/><circle cx="473.2" cy="261.2" r="1.65"/><circle cx="477.3" cy="271.3" r="1.65"/><circle cx="481.4" cy="261.2" r="1.65"/><circle cx="485.6" cy="261.2" r="1.65"/><circle cx="489.7" cy="268.1" r="1.65"/><circle cx="493.8" cy="261.2" r="1.65"/><circle cx="498.0" cy="261.2" r="1.65"/><circle cx="502.1" cy="266.2" r="1.65"/><circle cx="506.2" cy="261.2" r="1.65"/><circle cx="510.4" cy="261.2" r="1.65"/><circle cx="514.5" cy="261.2" r="1.65"/></g>
<polyline points="324.5,261.2 328.6,275.1 332.8,270.7 336.9,261.2 341.0,261.2 345.1,269.4 349.3,261.2 353.4,265.6 357.5,261.2 361.7,261.2 365.8,261.2 369.9,266.9 374.1,271.9 378.2,261.2 382.3,261.2 386.4,263.7 390.6,266.2 394.7,267.5 398.8,261.2 403.0,264.4 407.1,272.6 411.2,263.1 415.4,274.4 419.5,261.2 423.6,273.8 427.8,268.1 431.9,273.2 436.0,261.2 440.1,261.2 444.3,261.2 448.4,261.2 452.5,261.2 456.7,261.2 460.8,261.2 464.9,261.2 469.0,268.8 473.2,261.2 477.3,265.0 481.4,261.2 485.6,261.2 489.7,270.0 493.8,261.2 498.0,261.2 502.1,271.3 506.2,261.2 510.4,261.2 514.5,261.2" fill="none" stroke="#997300" stroke-width="1.1" stroke-linejoin="round" stroke-linecap="round"/>
<g fill="#997300"><circle cx="324.5" cy="261.2" r="1.65"/><circle cx="328.6" cy="275.1" r="1.65"/><circle cx="332.8" cy="270.7" r="1.65"/><circle cx="336.9" cy="261.2" r="1.65"/><circle cx="341.0" cy="261.2" r="1.65"/><circle cx="345.1" cy="269.4" r="1.65"/><circle cx="349.3" cy="261.2" r="1.65"/><circle cx="353.4" cy="265.6" r="1.65"/><circle cx="357.5" cy="261.2" r="1.65"/><circle cx="361.7" cy="261.2" r="1.65"/><circle cx="365.8" cy="261.2" r="1.65"/><circle cx="369.9" cy="266.9" r="1.65"/><circle cx="374.1" cy="271.9" r="1.65"/><circle cx="378.2" cy="261.2" r="1.65"/><circle cx="382.3" cy="261.2" r="1.65"/><circle cx="386.4" cy="263.7" r="1.65"/><circle cx="390.6" cy="266.2" r="1.65"/><circle cx="394.7" cy="267.5" r="1.65"/><circle cx="398.8" cy="261.2" r="1.65"/><circle cx="403.0" cy="264.4" r="1.65"/><circle cx="407.1" cy="272.6" r="1.65"/><circle cx="411.2" cy="263.1" r="1.65"/><circle cx="415.4" cy="274.4" r="1.65"/><circle cx="419.5" cy="261.2" r="1.65"/><circle cx="423.6" cy="273.8" r="1.65"/><circle cx="427.8" cy="268.1" r="1.65"/><circle cx="431.9" cy="273.2" r="1.65"/><circle cx="436.0" cy="261.2" r="1.65"/><circle cx="440.1" cy="261.2" r="1.65"/><circle cx="444.3" cy="261.2" r="1.65"/><circle cx="448.4" cy="261.2" r="1.65"/><circle cx="452.5" cy="261.2" r="1.65"/><circle cx="456.7" cy="261.2" r="1.65"/><circle cx="460.8" cy="261.2" r="1.65"/><circle cx="464.9" cy="261.2" r="1.65"/><circle cx="469.0" cy="268.8" r="1.65"/><circle cx="473.2" cy="261.2" r="1.65"/><circle cx="477.3" cy="265.0" r="1.65"/><circle cx="481.4" cy="261.2" r="1.65"/><circle cx="485.6" cy="261.2" r="1.65"/><circle cx="489.7" cy="270.0" r="1.65"/><circle cx="493.8" cy="261.2" r="1.65"/><circle cx="498.0" cy="261.2" r="1.65"/><circle cx="502.1" cy="271.3" r="1.65"/><circle cx="506.2" cy="261.2" r="1.65"/><circle cx="510.4" cy="261.2" r="1.65"/><circle cx="514.5" cy="261.2" r="1.65"/></g>
<polyline points="324.5,261.2 328.6,274.4 332.8,265.6 336.9,261.2 341.0,267.5 345.1,271.9 349.3,261.2 353.4,265.0 357.5,261.2 361.7,261.2 365.8,261.2 369.9,268.1 374.1,273.2 378.2,261.2 382.3,261.2 386.4,261.2 390.6,271.3 394.7,266.9 398.8,261.2 403.0,261.2 407.1,266.2 411.2,261.2 415.4,272.6 419.5,270.0 423.6,275.1 427.8,268.8 431.9,273.8 436.0,261.2 440.1,261.2 444.3,261.2 448.4,261.2 452.5,261.2 456.7,261.2 460.8,261.2 464.9,261.2 469.0,270.7 473.2,261.2 477.3,263.1 481.4,261.2 485.6,261.2 489.7,269.4 493.8,261.2 498.0,263.7 502.1,264.4 506.2,261.2 510.4,261.2 514.5,261.2" fill="none" stroke="#255E91" stroke-width="1.1" stroke-linejoin="round" stroke-linecap="round"/>
<g fill="#255E91"><circle cx="324.5" cy="261.2" r="1.65"/><circle cx="328.6" cy="274.4" r="1.65"/><circle cx="332.8" cy="265.6" r="1.65"/><circle cx="336.9" cy="261.2" r="1.65"/><circle cx="341.0" cy="267.5" r="1.65"/><circle cx="345.1" cy="271.9" r="1.65"/><circle cx="349.3" cy="261.2" r="1.65"/><circle cx="353.4" cy="265.0" r="1.65"/><circle cx="357.5" cy="261.2" r="1.65"/><circle cx="361.7" cy="261.2" r="1.65"/><circle cx="365.8" cy="261.2" r="1.65"/><circle cx="369.9" cy="268.1" r="1.65"/><circle cx="374.1" cy="273.2" r="1.65"/><circle cx="378.2" cy="261.2" r="1.65"/><circle cx="382.3" cy="261.2" r="1.65"/><circle cx="386.4" cy="261.2" r="1.65"/><circle cx="390.6" cy="271.3" r="1.65"/><circle cx="394.7" cy="266.9" r="1.65"/><circle cx="398.8" cy="261.2" r="1.65"/><circle cx="403.0" cy="261.2" r="1.65"/><circle cx="407.1" cy="266.2" r="1.65"/><circle cx="411.2" cy="261.2" r="1.65"/><circle cx="415.4" cy="272.6" r="1.65"/><circle cx="419.5" cy="270.0" r="1.65"/><circle cx="423.6" cy="275.1" r="1.65"/><circle cx="427.8" cy="268.8" r="1.65"/><circle cx="431.9" cy="273.8" r="1.65"/><circle cx="436.0" cy="261.2" r="1.65"/><circle cx="440.1" cy="261.2" r="1.65"/><circle cx="444.3" cy="261.2" r="1.65"/><circle cx="448.4" cy="261.2" r="1.65"/><circle cx="452.5" cy="261.2" r="1.65"/><circle cx="456.7" cy="261.2" r="1.65"/><circle cx="460.8" cy="261.2" r="1.65"/><circle cx="464.9" cy="261.2" r="1.65"/><circle cx="469.0" cy="270.7" r="1.65"/><circle cx="473.2" cy="261.2" r="1.65"/><circle cx="477.3" cy="263.1" r="1.65"/><circle cx="481.4" cy="261.2" r="1.65"/><circle cx="485.6" cy="261.2" r="1.65"/><circle cx="489.7" cy="269.4" r="1.65"/><circle cx="493.8" cy="261.2" r="1.65"/><circle cx="498.0" cy="263.7" r="1.65"/><circle cx="502.1" cy="264.4" r="1.65"/><circle cx="506.2" cy="261.2" r="1.65"/><circle cx="510.4" cy="261.2" r="1.65"/><circle cx="514.5" cy="261.2" r="1.65"/></g>
<polyline points="324.5,261.2 328.6,275.1 332.8,271.9 336.9,261.2 341.0,269.4 345.1,266.2 349.3,261.2 353.4,270.7 357.5,261.2 361.7,261.2 365.8,261.2 369.9,271.3 374.1,274.4 378.2,261.2 382.3,261.2 386.4,261.2 390.6,265.0 394.7,270.0 398.8,261.2 403.0,261.2 407.1,263.7 411.2,264.4 415.4,273.2 419.5,265.6 423.6,273.8 427.8,268.8 431.9,272.6 436.0,261.2 440.1,261.2 444.3,261.2 448.4,267.5 452.5,261.2 456.7,261.2 460.8,261.2 464.9,261.2 469.0,268.1 473.2,261.2 477.3,261.2 481.4,261.2 485.6,261.2 489.7,266.9 493.8,261.2 498.0,261.2 502.1,261.2 506.2,261.2 510.4,261.2 514.5,263.1" fill="none" stroke="#43682B" stroke-width="1.1" stroke-linejoin="round" stroke-linecap="round"/>
<g fill="#43682B"><circle cx="324.5" cy="261.2" r="1.65"/><circle cx="328.6" cy="275.1" r="1.65"/><circle cx="332.8" cy="271.9" r="1.65"/><circle cx="336.9" cy="261.2" r="1.65"/><circle cx="341.0" cy="269.4" r="1.65"/><circle cx="345.1" cy="266.2" r="1.65"/><circle cx="349.3" cy="261.2" r="1.65"/><circle cx="353.4" cy="270.7" r="1.65"/><circle cx="357.5" cy="261.2" r="1.65"/><circle cx="361.7" cy="261.2" r="1.65"/><circle cx="365.8" cy="261.2" r="1.65"/><circle cx="369.9" cy="271.3" r="1.65"/><circle cx="374.1" cy="274.4" r="1.65"/><circle cx="378.2" cy="261.2" r="1.65"/><circle cx="382.3" cy="261.2" r="1.65"/><circle cx="386.4" cy="261.2" r="1.65"/><circle cx="390.6" cy="265.0" r="1.65"/><circle cx="394.7" cy="270.0" r="1.65"/><circle cx="398.8" cy="261.2" r="1.65"/><circle cx="403.0" cy="261.2" r="1.65"/><circle cx="407.1" cy="263.7" r="1.65"/><circle cx="411.2" cy="264.4" r="1.65"/><circle cx="415.4" cy="273.2" r="1.65"/><circle cx="419.5" cy="265.6" r="1.65"/><circle cx="423.6" cy="273.8" r="1.65"/><circle cx="427.8" cy="268.8" r="1.65"/><circle cx="431.9" cy="272.6" r="1.65"/><circle cx="436.0" cy="261.2" r="1.65"/><circle cx="440.1" cy="261.2" r="1.65"/><circle cx="444.3" cy="261.2" r="1.65"/><circle cx="448.4" cy="267.5" r="1.65"/><circle cx="452.5" cy="261.2" r="1.65"/><circle cx="456.7" cy="261.2" r="1.65"/><circle cx="460.8" cy="261.2" r="1.65"/><circle cx="464.9" cy="261.2" r="1.65"/><circle cx="469.0" cy="268.1" r="1.65"/><circle cx="473.2" cy="261.2" r="1.65"/><circle cx="477.3" cy="261.2" r="1.65"/><circle cx="481.4" cy="261.2" r="1.65"/><circle cx="485.6" cy="261.2" r="1.65"/><circle cx="489.7" cy="266.9" r="1.65"/><circle cx="493.8" cy="261.2" r="1.65"/><circle cx="498.0" cy="261.2" r="1.65"/><circle cx="502.1" cy="261.2" r="1.65"/><circle cx="506.2" cy="261.2" r="1.65"/><circle cx="510.4" cy="261.2" r="1.65"/><circle cx="514.5" cy="263.1" r="1.65"/></g>
<polyline points="324.5,261.2 328.6,274.4 332.8,269.4 336.9,261.2 341.0,268.1 345.1,266.2 349.3,261.2 353.4,271.9 357.5,261.2 361.7,261.2 365.8,261.2 369.9,268.8 374.1,275.1 378.2,261.2 382.3,264.4 386.4,261.2 390.6,273.2 394.7,267.5 398.8,261.2 403.0,261.2 407.1,261.2 411.2,261.2 415.4,272.6 419.5,270.7 423.6,273.8 427.8,271.3 431.9,266.9 436.0,263.7 440.1,261.2 444.3,261.2 448.4,265.6 452.5,261.2 456.7,261.2 460.8,261.2 464.9,261.2 469.0,263.1 473.2,261.2 477.3,261.2 481.4,261.2 485.6,261.2 489.7,270.0 493.8,261.2 498.0,265.0 502.1,261.2 506.2,261.2 510.4,261.2 514.5,261.2" fill="none" stroke="#698ED0" stroke-width="1.1" stroke-linejoin="round" stroke-linecap="round"/>
<g fill="#698ED0"><circle cx="324.5" cy="261.2" r="1.65"/><circle cx="328.6" cy="274.4" r="1.65"/><circle cx="332.8" cy="269.4" r="1.65"/><circle cx="336.9" cy="261.2" r="1.65"/><circle cx="341.0" cy="268.1" r="1.65"/><circle cx="345.1" cy="266.2" r="1.65"/><circle cx="349.3" cy="261.2" r="1.65"/><circle cx="353.4" cy="271.9" r="1.65"/><circle cx="357.5" cy="261.2" r="1.65"/><circle cx="361.7" cy="261.2" r="1.65"/><circle cx="365.8" cy="261.2" r="1.65"/><circle cx="369.9" cy="268.8" r="1.65"/><circle cx="374.1" cy="275.1" r="1.65"/><circle cx="378.2" cy="261.2" r="1.65"/><circle cx="382.3" cy="264.4" r="1.65"/><circle cx="386.4" cy="261.2" r="1.65"/><circle cx="390.6" cy="273.2" r="1.65"/><circle cx="394.7" cy="267.5" r="1.65"/><circle cx="398.8" cy="261.2" r="1.65"/><circle cx="403.0" cy="261.2" r="1.65"/><circle cx="407.1" cy="261.2" r="1.65"/><circle cx="411.2" cy="261.2" r="1.65"/><circle cx="415.4" cy="272.6" r="1.65"/><circle cx="419.5" cy="270.7" r="1.65"/><circle cx="423.6" cy="273.8" r="1.65"/><circle cx="427.8" cy="271.3" r="1.65"/><circle cx="431.9" cy="266.9" r="1.65"/><circle cx="436.0" cy="263.7" r="1.65"/><circle cx="440.1" cy="261.2" r="1.65"/><circle cx="444.3" cy="261.2" r="1.65"/><circle cx="448.4" cy="265.6" r="1.65"/><circle cx="452.5" cy="261.2" r="1.65"/><circle cx="456.7" cy="261.2" r="1.65"/><circle cx="460.8" cy="261.2" r="1.65"/><circle cx="464.9" cy="261.2" r="1.65"/><circle cx="469.0" cy="263.1" r="1.65"/><circle cx="473.2" cy="261.2" r="1.65"/><circle cx="477.3" cy="261.2" r="1.65"/><circle cx="481.4" cy="261.2" r="1.65"/><circle cx="485.6" cy="261.2" r="1.65"/><circle cx="489.7" cy="270.0" r="1.65"/><circle cx="493.8" cy="261.2" r="1.65"/><circle cx="498.0" cy="265.0" r="1.65"/><circle cx="502.1" cy="261.2" r="1.65"/><circle cx="506.2" cy="261.2" r="1.65"/><circle cx="510.4" cy="261.2" r="1.65"/><circle cx="514.5" cy="261.2" r="1.65"/></g>
<polyline points="324.5,261.2 328.6,273.2 332.8,265.6 336.9,261.2 341.0,264.4 345.1,271.9 349.3,261.2 353.4,270.7 357.5,261.2 361.7,261.2 365.8,261.2 369.9,267.5 374.1,275.1 378.2,261.2 382.3,261.2 386.4,261.2 390.6,268.8 394.7,268.1 398.8,261.2 403.0,261.2 407.1,261.2 411.2,261.2 415.4,273.8 419.5,266.2 423.6,274.4 427.8,266.9 431.9,271.3 436.0,261.2 440.1,261.2 444.3,261.2 448.4,265.0 452.5,261.2 456.7,261.2 460.8,261.2 464.9,261.2 469.0,261.2 473.2,261.2 477.3,263.1 481.4,261.2 485.6,261.2 489.7,272.6 493.8,261.2 498.0,263.7 502.1,270.0 506.2,269.4 510.4,261.2 514.5,261.2" fill="none" stroke="#F1975A" stroke-width="1.1" stroke-linejoin="round" stroke-linecap="round"/>
<g fill="#F1975A"><circle cx="324.5" cy="261.2" r="1.65"/><circle cx="328.6" cy="273.2" r="1.65"/><circle cx="332.8" cy="265.6" r="1.65"/><circle cx="336.9" cy="261.2" r="1.65"/><circle cx="341.0" cy="264.4" r="1.65"/><circle cx="345.1" cy="271.9" r="1.65"/><circle cx="349.3" cy="261.2" r="1.65"/><circle cx="353.4" cy="270.7" r="1.65"/><circle cx="357.5" cy="261.2" r="1.65"/><circle cx="361.7" cy="261.2" r="1.65"/><circle cx="365.8" cy="261.2" r="1.65"/><circle cx="369.9" cy="267.5" r="1.65"/><circle cx="374.1" cy="275.1" r="1.65"/><circle cx="378.2" cy="261.2" r="1.65"/><circle cx="382.3" cy="261.2" r="1.65"/><circle cx="386.4" cy="261.2" r="1.65"/><circle cx="390.6" cy="268.8" r="1.65"/><circle cx="394.7" cy="268.1" r="1.65"/><circle cx="398.8" cy="261.2" r="1.65"/><circle cx="403.0" cy="261.2" r="1.65"/><circle cx="407.1" cy="261.2" r="1.65"/><circle cx="411.2" cy="261.2" r="1.65"/><circle cx="415.4" cy="273.8" r="1.65"/><circle cx="419.5" cy="266.2" r="1.65"/><circle cx="423.6" cy="274.4" r="1.65"/><circle cx="427.8" cy="266.9" r="1.65"/><circle cx="431.9" cy="271.3" r="1.65"/><circle cx="436.0" cy="261.2" r="1.65"/><circle cx="440.1" cy="261.2" r="1.65"/><circle cx="444.3" cy="261.2" r="1.65"/><circle cx="448.4" cy="265.0" r="1.65"/><circle cx="452.5" cy="261.2" r="1.65"/><circle cx="456.7" cy="261.2" r="1.65"/><circle cx="460.8" cy="261.2" r="1.65"/><circle cx="464.9" cy="261.2" r="1.65"/><circle cx="469.0" cy="261.2" r="1.65"/><circle cx="473.2" cy="261.2" r="1.65"/><circle cx="477.3" cy="263.1" r="1.65"/><circle cx="481.4" cy="261.2" r="1.65"/><circle cx="485.6" cy="261.2" r="1.65"/><circle cx="489.7" cy="272.6" r="1.65"/><circle cx="493.8" cy="261.2" r="1.65"/><circle cx="498.0" cy="263.7" r="1.65"/><circle cx="502.1" cy="270.0" r="1.65"/><circle cx="506.2" cy="269.4" r="1.65"/><circle cx="510.4" cy="261.2" r="1.65"/><circle cx="514.5" cy="261.2" r="1.65"/></g>
<polyline points="324.5,261.2 328.6,273.2 332.8,268.8 336.9,261.2 341.0,261.2 345.1,269.4 349.3,261.2 353.4,271.3 357.5,261.2 361.7,261.2 365.8,261.2 369.9,263.7 374.1,274.4 378.2,261.2 382.3,261.2 386.4,261.2 390.6,271.9 394.7,265.6 398.8,261.2 403.0,261.2 407.1,261.2 411.2,261.2 415.4,273.8 419.5,266.9 423.6,275.1 427.8,268.1 431.9,267.5 436.0,261.2 440.1,261.2 444.3,261.2 448.4,270.0 452.5,261.2 456.7,270.7 460.8,264.4 464.9,261.2 469.0,261.2 473.2,261.2 477.3,261.2 481.4,261.2 485.6,261.2 489.7,272.6 493.8,263.1 498.0,261.2 502.1,266.2 506.2,265.0 510.4,261.2 514.5,261.2" fill="none" stroke="#B7B7B7" stroke-width="1.1" stroke-linejoin="round" stroke-linecap="round"/>
<g fill="#B7B7B7"><circle cx="324.5" cy="261.2" r="1.65"/><circle cx="328.6" cy="273.2" r="1.65"/><circle cx="332.8" cy="268.8" r="1.65"/><circle cx="336.9" cy="261.2" r="1.65"/><circle cx="341.0" cy="261.2" r="1.65"/><circle cx="345.1" cy="269.4" r="1.65"/><circle cx="349.3" cy="261.2" r="1.65"/><circle cx="353.4" cy="271.3" r="1.65"/><circle cx="357.5" cy="261.2" r="1.65"/><circle cx="361.7" cy="261.2" r="1.65"/><circle cx="365.8" cy="261.2" r="1.65"/><circle cx="369.9" cy="263.7" r="1.65"/><circle cx="374.1" cy="274.4" r="1.65"/><circle cx="378.2" cy="261.2" r="1.65"/><circle cx="382.3" cy="261.2" r="1.65"/><circle cx="386.4" cy="261.2" r="1.65"/><circle cx="390.6" cy="271.9" r="1.65"/><circle cx="394.7" cy="265.6" r="1.65"/><circle cx="398.8" cy="261.2" r="1.65"/><circle cx="403.0" cy="261.2" r="1.65"/><circle cx="407.1" cy="261.2" r="1.65"/><circle cx="411.2" cy="261.2" r="1.65"/><circle cx="415.4" cy="273.8" r="1.65"/><circle cx="419.5" cy="266.9" r="1.65"/><circle cx="423.6" cy="275.1" r="1.65"/><circle cx="427.8" cy="268.1" r="1.65"/><circle cx="431.9" cy="267.5" r="1.65"/><circle cx="436.0" cy="261.2" r="1.65"/><circle cx="440.1" cy="261.2" r="1.65"/><circle cx="444.3" cy="261.2" r="1.65"/><circle cx="448.4" cy="270.0" r="1.65"/><circle cx="452.5" cy="261.2" r="1.65"/><circle cx="456.7" cy="270.7" r="1.65"/><circle cx="460.8" cy="264.4" r="1.65"/><circle cx="464.9" cy="261.2" r="1.65"/><circle cx="469.0" cy="261.2" r="1.65"/><circle cx="473.2" cy="261.2" r="1.65"/><circle cx="477.3" cy="261.2" r="1.65"/><circle cx="481.4" cy="261.2" r="1.65"/><circle cx="485.6" cy="261.2" r="1.65"/><circle cx="489.7" cy="272.6" r="1.65"/><circle cx="493.8" cy="263.1" r="1.65"/><circle cx="498.0" cy="261.2" r="1.65"/><circle cx="502.1" cy="266.2" r="1.65"/><circle cx="506.2" cy="265.0" r="1.65"/><circle cx="510.4" cy="261.2" r="1.65"/><circle cx="514.5" cy="261.2" r="1.65"/></g>
<polyline points="324.5,261.2 328.6,273.8 332.8,271.9 336.9,261.2 341.0,263.7 345.1,271.3 349.3,261.2 353.4,265.6 357.5,261.2 361.7,261.2 365.8,261.2 369.9,261.2 374.1,274.4 378.2,261.2 382.3,261.2 386.4,263.1 390.6,272.6 394.7,265.0 398.8,261.2 403.0,261.2 407.1,261.2 411.2,261.2 415.4,273.2 419.5,270.0 423.6,275.1 427.8,267.5 431.9,268.1 436.0,261.2 440.1,261.2 444.3,261.2 448.4,270.7 452.5,261.2 456.7,264.4 460.8,261.2 464.9,261.2 469.0,261.2 473.2,261.2 477.3,266.2 481.4,261.2 485.6,261.2 489.7,268.8 493.8,261.2 498.0,261.2 502.1,269.4 506.2,266.9 510.4,261.2 514.5,261.2" fill="none" stroke="#FFCD33" stroke-width="1.1" stroke-linejoin="round" stroke-linecap="round"/>
<g fill="#FFCD33"><circle cx="324.5" cy="261.2" r="1.65"/><circle cx="328.6" cy="273.8" r="1.65"/><circle cx="332.8" cy="271.9" r="1.65"/><circle cx="336.9" cy="261.2" r="1.65"/><circle cx="341.0" cy="263.7" r="1.65"/><circle cx="345.1" cy="271.3" r="1.65"/><circle cx="349.3" cy="261.2" r="1.65"/><circle cx="353.4" cy="265.6" r="1.65"/><circle cx="357.5" cy="261.2" r="1.65"/><circle cx="361.7" cy="261.2" r="1.65"/><circle cx="365.8" cy="261.2" r="1.65"/><circle cx="369.9" cy="261.2" r="1.65"/><circle cx="374.1" cy="274.4" r="1.65"/><circle cx="378.2" cy="261.2" r="1.65"/><circle cx="382.3" cy="261.2" r="1.65"/><circle cx="386.4" cy="263.1" r="1.65"/><circle cx="390.6" cy="272.6" r="1.65"/><circle cx="394.7" cy="265.0" r="1.65"/><circle cx="398.8" cy="261.2" r="1.65"/><circle cx="403.0" cy="261.2" r="1.65"/><circle cx="407.1" cy="261.2" r="1.65"/><circle cx="411.2" cy="261.2" r="1.65"/><circle cx="415.4" cy="273.2" r="1.65"/><circle cx="419.5" cy="270.0" r="1.65"/><circle cx="423.6" cy="275.1" r="1.65"/><circle cx="427.8" cy="267.5" r="1.65"/><circle cx="431.9" cy="268.1" r="1.65"/><circle cx="436.0" cy="261.2" r="1.65"/><circle cx="440.1" cy="261.2" r="1.65"/><circle cx="444.3" cy="261.2" r="1.65"/><circle cx="448.4" cy="270.7" r="1.65"/><circle cx="452.5" cy="261.2" r="1.65"/><circle cx="456.7" cy="264.4" r="1.65"/><circle cx="460.8" cy="261.2" r="1.65"/><circle cx="464.9" cy="261.2" r="1.65"/><circle cx="469.0" cy="261.2" r="1.65"/><circle cx="473.2" cy="261.2" r="1.65"/><circle cx="477.3" cy="266.2" r="1.65"/><circle cx="481.4" cy="261.2" r="1.65"/><circle cx="485.6" cy="261.2" r="1.65"/><circle cx="489.7" cy="268.8" r="1.65"/><circle cx="493.8" cy="261.2" r="1.65"/><circle cx="498.0" cy="261.2" r="1.65"/><circle cx="502.1" cy="269.4" r="1.65"/><circle cx="506.2" cy="266.9" r="1.65"/><circle cx="510.4" cy="261.2" r="1.65"/><circle cx="514.5" cy="261.2" r="1.65"/></g>
<polyline points="324.5,261.2 328.6,273.2 332.8,271.9 336.9,261.2 341.0,261.2 345.1,266.2 349.3,261.2 353.4,267.5 357.5,261.2 361.7,261.2 365.8,261.2 369.9,261.2 374.1,273.8 378.2,261.2 382.3,261.2 386.4,261.2 390.6,272.6 394.7,271.3 398.8,265.0 403.0,261.2 407.1,261.2 411.2,261.2 415.4,274.4 419.5,269.4 423.6,275.1 427.8,263.7 431.9,264.4 436.0,261.2 440.1,261.2 444.3,261.2 448.4,266.9 452.5,261.2 456.7,261.2 460.8,261.2 464.9,261.2 469.0,261.2 473.2,268.1 477.3,265.6 481.4,261.2 485.6,261.2 489.7,270.7 493.8,261.2 498.0,263.1 502.1,270.0 506.2,268.8 510.4,261.2 514.5,261.2" fill="none" stroke="#7CAFDD" stroke-width="1.1" stroke-linejoin="round" stroke-linecap="round"/>
<g fill="#7CAFDD"><circle cx="324.5" cy="261.2" r="1.65"/><circle cx="328.6" cy="273.2" r="1.65"/><circle cx="332.8" cy="271.9" r="1.65"/><circle cx="336.9" cy="261.2" r="1.65"/><circle cx="341.0" cy="261.2" r="1.65"/><circle cx="345.1" cy="266.2" r="1.65"/><circle cx="349.3" cy="261.2" r="1.65"/><circle cx="353.4" cy="267.5" r="1.65"/><circle cx="357.5" cy="261.2" r="1.65"/><circle cx="361.7" cy="261.2" r="1.65"/><circle cx="365.8" cy="261.2" r="1.65"/><circle cx="369.9" cy="261.2" r="1.65"/><circle cx="374.1" cy="273.8" r="1.65"/><circle cx="378.2" cy="261.2" r="1.65"/><circle cx="382.3" cy="261.2" r="1.65"/><circle cx="386.4" cy="261.2" r="1.65"/><circle cx="390.6" cy="272.6" r="1.65"/><circle cx="394.7" cy="271.3" r="1.65"/><circle cx="398.8" cy="265.0" r="1.65"/><circle cx="403.0" cy="261.2" r="1.65"/><circle cx="407.1" cy="261.2" r="1.65"/><circle cx="411.2" cy="261.2" r="1.65"/><circle cx="415.4" cy="274.4" r="1.65"/><circle cx="419.5" cy="269.4" r="1.65"/><circle cx="423.6" cy="275.1" r="1.65"/><circle cx="427.8" cy="263.7" r="1.65"/><circle cx="431.9" cy="264.4" r="1.65"/><circle cx="436.0" cy="261.2" r="1.65"/><circle cx="440.1" cy="261.2" r="1.65"/><circle cx="444.3" cy="261.2" r="1.65"/><circle cx="448.4" cy="266.9" r="1.65"/><circle cx="452.5" cy="261.2" r="1.65"/><circle cx="456.7" cy="261.2" r="1.65"/><circle cx="460.8" cy="261.2" r="1.65"/><circle cx="464.9" cy="261.2" r="1.65"/><circle cx="469.0" cy="261.2" r="1.65"/><circle cx="473.2" cy="268.1" r="1.65"/><circle cx="477.3" cy="265.6" r="1.65"/><circle cx="481.4" cy="261.2" r="1.65"/><circle cx="485.6" cy="261.2" r="1.65"/><circle cx="489.7" cy="270.7" r="1.65"/><circle cx="493.8" cy="261.2" r="1.65"/><circle cx="498.0" cy="263.1" r="1.65"/><circle cx="502.1" cy="270.0" r="1.65"/><circle cx="506.2" cy="268.8" r="1.65"/><circle cx="510.4" cy="261.2" r="1.65"/><circle cx="514.5" cy="261.2" r="1.65"/></g>
<polyline points="324.5,261.2 328.6,273.8 332.8,271.9 336.9,261.2 341.0,270.0 345.1,269.4 349.3,261.2 353.4,266.9 357.5,261.2 361.7,264.4 365.8,261.2 369.9,261.2 374.1,275.1 378.2,261.2 382.3,261.2 386.4,261.2 390.6,270.7 394.7,268.1 398.8,263.7 403.0,261.2 407.1,261.2 411.2,261.2 415.4,271.3 419.5,272.6 423.6,274.4 427.8,261.2 431.9,261.2 436.0,261.2 440.1,261.2 444.3,261.2 448.4,263.1 452.5,261.2 456.7,261.2 460.8,261.2 464.9,261.2 469.0,261.2 473.2,268.8 477.3,267.5 481.4,261.2 485.6,261.2 489.7,273.2 493.8,261.2 498.0,261.2 502.1,265.0 506.2,265.6 510.4,261.2 514.5,266.2" fill="none" stroke="#8CC168" stroke-width="1.1" stroke-linejoin="round" stroke-linecap="round"/>
<g fill="#8CC168"><circle cx="324.5" cy="261.2" r="1.65"/><circle cx="328.6" cy="273.8" r="1.65"/><circle cx="332.8" cy="271.9" r="1.65"/><circle cx="336.9" cy="261.2" r="1.65"/><circle cx="341.0" cy="270.0" r="1.65"/><circle cx="345.1" cy="269.4" r="1.65"/><circle cx="349.3" cy="261.2" r="1.65"/><circle cx="353.4" cy="266.9" r="1.65"/><circle cx="357.5" cy="261.2" r="1.65"/><circle cx="361.7" cy="264.4" r="1.65"/><circle cx="365.8" cy="261.2" r="1.65"/><circle cx="369.9" cy="261.2" r="1.65"/><circle cx="374.1" cy="275.1" r="1.65"/><circle cx="378.2" cy="261.2" r="1.65"/><circle cx="382.3" cy="261.2" r="1.65"/><circle cx="386.4" cy="261.2" r="1.65"/><circle cx="390.6" cy="270.7" r="1.65"/><circle cx="394.7" cy="268.1" r="1.65"/><circle cx="398.8" cy="263.7" r="1.65"/><circle cx="403.0" cy="261.2" r="1.65"/><circle cx="407.1" cy="261.2" r="1.65"/><circle cx="411.2" cy="261.2" r="1.65"/><circle cx="415.4" cy="271.3" r="1.65"/><circle cx="419.5" cy="272.6" r="1.65"/><circle cx="423.6" cy="274.4" r="1.65"/><circle cx="427.8" cy="261.2" r="1.65"/><circle cx="431.9" cy="261.2" r="1.65"/><circle cx="436.0" cy="261.2" r="1.65"/><circle cx="440.1" cy="261.2" r="1.65"/><circle cx="444.3" cy="261.2" r="1.65"/><circle cx="448.4" cy="263.1" r="1.65"/><circle cx="452.5" cy="261.2" r="1.65"/><circle cx="456.7" cy="261.2" r="1.65"/><circle cx="460.8" cy="261.2" r="1.65"/><circle cx="464.9" cy="261.2" r="1.65"/><circle cx="469.0" cy="261.2" r="1.65"/><circle cx="473.2" cy="268.8" r="1.65"/><circle cx="477.3" cy="267.5" r="1.65"/><circle cx="481.4" cy="261.2" r="1.65"/><circle cx="485.6" cy="261.2" r="1.65"/><circle cx="489.7" cy="273.2" r="1.65"/><circle cx="493.8" cy="261.2" r="1.65"/><circle cx="498.0" cy="261.2" r="1.65"/><circle cx="502.1" cy="265.0" r="1.65"/><circle cx="506.2" cy="265.6" r="1.65"/><circle cx="510.4" cy="261.2" r="1.65"/><circle cx="514.5" cy="266.2" r="1.65"/></g>
<polyline points="324.5,261.2 328.6,273.2 332.8,270.0 336.9,261.2 341.0,264.4 345.1,266.2 349.3,263.7 353.4,266.9 357.5,261.2 361.7,261.2 365.8,261.2 369.9,261.2 374.1,274.4 378.2,261.2 382.3,261.2 386.4,261.2 390.6,271.3 394.7,270.7 398.8,261.2 403.0,261.2 407.1,261.2 411.2,261.2 415.4,271.9 419.5,273.8 423.6,275.1 427.8,261.2 431.9,268.1 436.0,261.2 440.1,261.2 444.3,261.2 448.4,261.2 452.5,261.2 456.7,261.2 460.8,261.2 464.9,261.2 469.0,261.2 473.2,267.5 477.3,269.4 481.4,261.2 485.6,261.2 489.7,272.6 493.8,261.2 498.0,268.8 502.1,263.1 506.2,265.6 510.4,261.2 514.5,265.0" fill="none" stroke="#335AA1" stroke-width="1.1" stroke-linejoin="round" stroke-linecap="round"/>
<g fill="#335AA1"><circle cx="324.5" cy="261.2" r="1.65"/><circle cx="328.6" cy="273.2" r="1.65"/><circle cx="332.8" cy="270.0" r="1.65"/><circle cx="336.9" cy="261.2" r="1.65"/><circle cx="341.0" cy="264.4" r="1.65"/><circle cx="345.1" cy="266.2" r="1.65"/><circle cx="349.3" cy="263.7" r="1.65"/><circle cx="353.4" cy="266.9" r="1.65"/><circle cx="357.5" cy="261.2" r="1.65"/><circle cx="361.7" cy="261.2" r="1.65"/><circle cx="365.8" cy="261.2" r="1.65"/><circle cx="369.9" cy="261.2" r="1.65"/><circle cx="374.1" cy="274.4" r="1.65"/><circle cx="378.2" cy="261.2" r="1.65"/><circle cx="382.3" cy="261.2" r="1.65"/><circle cx="386.4" cy="261.2" r="1.65"/><circle cx="390.6" cy="271.3" r="1.65"/><circle cx="394.7" cy="270.7" r="1.65"/><circle cx="398.8" cy="261.2" r="1.65"/><circle cx="403.0" cy="261.2" r="1.65"/><circle cx="407.1" cy="261.2" r="1.65"/><circle cx="411.2" cy="261.2" r="1.65"/><circle cx="415.4" cy="271.9" r="1.65"/><circle cx="419.5" cy="273.8" r="1.65"/><circle cx="423.6" cy="275.1" r="1.65"/><circle cx="427.8" cy="261.2" r="1.65"/><circle cx="431.9" cy="268.1" r="1.65"/><circle cx="436.0" cy="261.2" r="1.65"/><circle cx="440.1" cy="261.2" r="1.65"/><circle cx="444.3" cy="261.2" r="1.65"/><circle cx="448.4" cy="261.2" r="1.65"/><circle cx="452.5" cy="261.2" r="1.65"/><circle cx="456.7" cy="261.2" r="1.65"/><circle cx="460.8" cy="261.2" r="1.65"/><circle cx="464.9" cy="261.2" r="1.65"/><circle cx="469.0" cy="261.2" r="1.65"/><circle cx="473.2" cy="267.5" r="1.65"/><circle cx="477.3" cy="269.4" r="1.65"/><circle cx="481.4" cy="261.2" r="1.65"/><circle cx="485.6" cy="261.2" r="1.65"/><circle cx="489.7" cy="272.6" r="1.65"/><circle cx="493.8" cy="261.2" r="1.65"/><circle cx="498.0" cy="268.8" r="1.65"/><circle cx="502.1" cy="263.1" r="1.65"/><circle cx="506.2" cy="265.6" r="1.65"/><circle cx="510.4" cy="261.2" r="1.65"/><circle cx="514.5" cy="265.0" r="1.65"/></g>
<polyline points="324.5,261.2 328.6,273.8 332.8,265.6 336.9,261.2 341.0,261.2 345.1,263.7 349.3,261.2 353.4,264.4 357.5,261.2 361.7,261.2 365.8,261.2 369.9,261.2 374.1,271.9 378.2,261.2 382.3,261.2 386.4,261.2 390.6,271.3 394.7,270.0 398.8,261.2 403.0,261.2 407.1,261.2 411.2,261.2 415.4,270.7 419.5,275.1 423.6,274.4 427.8,261.2 431.9,272.6 436.0,268.1 440.1,261.2 444.3,261.2 448.4,261.2 452.5,265.0 456.7,261.2 460.8,261.2 464.9,261.2 469.0,261.2 473.2,266.9 477.3,267.5 481.4,268.8 485.6,261.2 489.7,273.2 493.8,261.2 498.0,269.4 502.1,261.2 506.2,266.2 510.4,261.2 514.5,263.1" fill="none" stroke="#D26012" stroke-width="1.1" stroke-linejoin="round" stroke-linecap="round"/>
<g fill="#D26012"><circle cx="324.5" cy="261.2" r="1.65"/><circle cx="328.6" cy="273.8" r="1.65"/><circle cx="332.8" cy="265.6" r="1.65"/><circle cx="336.9" cy="261.2" r="1.65"/><circle cx="341.0" cy="261.2" r="1.65"/><circle cx="345.1" cy="263.7" r="1.65"/><circle cx="349.3" cy="261.2" r="1.65"/><circle cx="353.4" cy="264.4" r="1.65"/><circle cx="357.5" cy="261.2" r="1.65"/><circle cx="361.7" cy="261.2" r="1.65"/><circle cx="365.8" cy="261.2" r="1.65"/><circle cx="369.9" cy="261.2" r="1.65"/><circle cx="374.1" cy="271.9" r="1.65"/><circle cx="378.2" cy="261.2" r="1.65"/><circle cx="382.3" cy="261.2" r="1.65"/><circle cx="386.4" cy="261.2" r="1.65"/><circle cx="390.6" cy="271.3" r="1.65"/><circle cx="394.7" cy="270.0" r="1.65"/><circle cx="398.8" cy="261.2" r="1.65"/><circle cx="403.0" cy="261.2" r="1.65"/><circle cx="407.1" cy="261.2" r="1.65"/><circle cx="411.2" cy="261.2" r="1.65"/><circle cx="415.4" cy="270.7" r="1.65"/><circle cx="419.5" cy="275.1" r="1.65"/><circle cx="423.6" cy="274.4" r="1.65"/><circle cx="427.8" cy="261.2" r="1.65"/><circle cx="431.9" cy="272.6" r="1.65"/><circle cx="436.0" cy="268.1" r="1.65"/><circle cx="440.1" cy="261.2" r="1.65"/><circle cx="444.3" cy="261.2" r="1.65"/><circle cx="448.4" cy="261.2" r="1.65"/><circle cx="452.5" cy="265.0" r="1.65"/><circle cx="456.7" cy="261.2" r="1.65"/><circle cx="460.8" cy="261.2" r="1.65"/><circle cx="464.9" cy="261.2" r="1.65"/><circle cx="469.0" cy="261.2" r="1.65"/><circle cx="473.2" cy="266.9" r="1.65"/><circle cx="477.3" cy="267.5" r="1.65"/><circle cx="481.4" cy="268.8" r="1.65"/><circle cx="485.6" cy="261.2" r="1.65"/><circle cx="489.7" cy="273.2" r="1.65"/><circle cx="493.8" cy="261.2" r="1.65"/><circle cx="498.0" cy="269.4" r="1.65"/><circle cx="502.1" cy="261.2" r="1.65"/><circle cx="506.2" cy="266.2" r="1.65"/><circle cx="510.4" cy="261.2" r="1.65"/><circle cx="514.5" cy="263.1" r="1.65"/></g>
<polyline points="324.5,261.2 328.6,273.2 332.8,266.2 336.9,261.2 341.0,261.2 345.1,261.2 349.3,261.2 353.4,261.2 357.5,261.2 361.7,261.2 365.8,261.2 369.9,261.2 374.1,273.8 378.2,261.2 382.3,261.2 386.4,261.2 390.6,271.9 394.7,268.1 398.8,261.2 403.0,261.2 407.1,261.2 411.2,261.2 415.4,271.3 419.5,274.4 423.6,275.1 427.8,261.2 431.9,265.6 436.0,268.8 440.1,261.2 444.3,261.2 448.4,261.2 452.5,263.1 456.7,263.7 460.8,261.2 464.9,261.2 469.0,266.9 473.2,267.5 477.3,265.0 481.4,270.0 485.6,261.2 489.7,272.6 493.8,261.2 498.0,270.7 502.1,269.4 506.2,264.4 510.4,261.2 514.5,261.2" fill="none" stroke="#848484" stroke-width="1.1" stroke-linejoin="round" stroke-linecap="round"/>
<g fill="#848484"><circle cx="324.5" cy="261.2" r="1.65"/><circle cx="328.6" cy="273.2" r="1.65"/><circle cx="332.8" cy="266.2" r="1.65"/><circle cx="336.9" cy="261.2" r="1.65"/><circle cx="341.0" cy="261.2" r="1.65"/><circle cx="345.1" cy="261.2" r="1.65"/><circle cx="349.3" cy="261.2" r="1.65"/><circle cx="353.4" cy="261.2" r="1.65"/><circle cx="357.5" cy="261.2" r="1.65"/><circle cx="361.7" cy="261.2" r="1.65"/><circle cx="365.8" cy="261.2" r="1.65"/><circle cx="369.9" cy="261.2" r="1.65"/><circle cx="374.1" cy="273.8" r="1.65"/><circle cx="378.2" cy="261.2" r="1.65"/><circle cx="382.3" cy="261.2" r="1.65"/><circle cx="386.4" cy="261.2" r="1.65"/><circle cx="390.6" cy="271.9" r="1.65"/><circle cx="394.7" cy="268.1" r="1.65"/><circle cx="398.8" cy="261.2" r="1.65"/><circle cx="403.0" cy="261.2" r="1.65"/><circle cx="407.1" cy="261.2" r="1.65"/><circle cx="411.2" cy="261.2" r="1.65"/><circle cx="415.4" cy="271.3" r="1.65"/><circle cx="419.5" cy="274.4" r="1.65"/><circle cx="423.6" cy="275.1" r="1.65"/><circle cx="427.8" cy="261.2" r="1.65"/><circle cx="431.9" cy="265.6" r="1.65"/><circle cx="436.0" cy="268.8" r="1.65"/><circle cx="440.1" cy="261.2" r="1.65"/><circle cx="444.3" cy="261.2" r="1.65"/><circle cx="448.4" cy="261.2" r="1.65"/><circle cx="452.5" cy="263.1" r="1.65"/><circle cx="456.7" cy="263.7" r="1.65"/><circle cx="460.8" cy="261.2" r="1.65"/><circle cx="464.9" cy="261.2" r="1.65"/><circle cx="469.0" cy="266.9" r="1.65"/><circle cx="473.2" cy="267.5" r="1.65"/><circle cx="477.3" cy="265.0" r="1.65"/><circle cx="481.4" cy="270.0" r="1.65"/><circle cx="485.6" cy="261.2" r="1.65"/><circle cx="489.7" cy="272.6" r="1.65"/><circle cx="493.8" cy="261.2" r="1.65"/><circle cx="498.0" cy="270.7" r="1.65"/><circle cx="502.1" cy="269.4" r="1.65"/><circle cx="506.2" cy="264.4" r="1.65"/><circle cx="510.4" cy="261.2" r="1.65"/><circle cx="514.5" cy="261.2" r="1.65"/></g>
<polyline points="324.5,261.2 328.6,273.2 332.8,266.2 336.9,261.2 341.0,261.2 345.1,261.2 349.3,261.2 353.4,261.2 357.5,261.2 361.7,261.2 365.8,263.1 369.9,261.2 374.1,273.8 378.2,261.2 382.3,268.8 386.4,261.2 390.6,272.6 394.7,263.7 398.8,265.6 403.0,261.2 407.1,261.2 411.2,261.2 415.4,274.4 419.5,275.1 423.6,271.3 427.8,261.2 431.9,269.4 436.0,264.4 440.1,261.2 444.3,261.2 448.4,261.2 452.5,261.2 456.7,261.2 460.8,261.2 464.9,261.2 469.0,270.7 473.2,270.0 477.3,266.9 481.4,268.1 485.6,261.2 489.7,271.9 493.8,261.2 498.0,265.0 502.1,267.5 506.2,261.2 510.4,261.2 514.5,261.2" fill="none" stroke="#CC9A00" stroke-width="1.1" stroke-linejoin="round" stroke-linecap="round"/>
<g fill="#CC9A00"><circle cx="324.5" cy="261.2" r="1.65"/><circle cx="328.6" cy="273.2" r="1.65"/><circle cx="332.8" cy="266.2" r="1.65"/><circle cx="336.9" cy="261.2" r="1.65"/><circle cx="341.0" cy="261.2" r="1.65"/><circle cx="345.1" cy="261.2" r="1.65"/><circle cx="349.3" cy="261.2" r="1.65"/><circle cx="353.4" cy="261.2" r="1.65"/><circle cx="357.5" cy="261.2" r="1.65"/><circle cx="361.7" cy="261.2" r="1.65"/><circle cx="365.8" cy="263.1" r="1.65"/><circle cx="369.9" cy="261.2" r="1.65"/><circle cx="374.1" cy="273.8" r="1.65"/><circle cx="378.2" cy="261.2" r="1.65"/><circle cx="382.3" cy="268.8" r="1.65"/><circle cx="386.4" cy="261.2" r="1.65"/><circle cx="390.6" cy="272.6" r="1.65"/><circle cx="394.7" cy="263.7" r="1.65"/><circle cx="398.8" cy="265.6" r="1.65"/><circle cx="403.0" cy="261.2" r="1.65"/><circle cx="407.1" cy="261.2" r="1.65"/><circle cx="411.2" cy="261.2" r="1.65"/><circle cx="415.4" cy="274.4" r="1.65"/><circle cx="419.5" cy="275.1" r="1.65"/><circle cx="423.6" cy="271.3" r="1.65"/><circle cx="427.8" cy="261.2" r="1.65"/><circle cx="431.9" cy="269.4" r="1.65"/><circle cx="436.0" cy="264.4" r="1.65"/><circle cx="440.1" cy="261.2" r="1.65"/><circle cx="444.3" cy="261.2" r="1.65"/><circle cx="448.4" cy="261.2" r="1.65"/><circle cx="452.5" cy="261.2" r="1.65"/><circle cx="456.7" cy="261.2" r="1.65"/><circle cx="460.8" cy="261.2" r="1.65"/><circle cx="464.9" cy="261.2" r="1.65"/><circle cx="469.0" cy="270.7" r="1.65"/><circle cx="473.2" cy="270.0" r="1.65"/><circle cx="477.3" cy="266.9" r="1.65"/><circle cx="481.4" cy="268.1" r="1.65"/><circle cx="485.6" cy="261.2" r="1.65"/><circle cx="489.7" cy="271.9" r="1.65"/><circle cx="493.8" cy="261.2" r="1.65"/><circle cx="498.0" cy="265.0" r="1.65"/><circle cx="502.1" cy="267.5" r="1.65"/><circle cx="506.2" cy="261.2" r="1.65"/><circle cx="510.4" cy="261.2" r="1.65"/><circle cx="514.5" cy="261.2" r="1.65"/></g>
<polyline points="324.5,261.2 328.6,273.8 332.8,265.0 336.9,261.2 341.0,261.2 345.1,261.2 349.3,261.2 353.4,261.2 357.5,261.2 361.7,263.7 365.8,261.2 369.9,261.2 374.1,275.1 378.2,261.2 382.3,269.4 386.4,261.2 390.6,268.8 394.7,261.2 398.8,264.4 403.0,261.2 407.1,261.2 411.2,266.9 415.4,271.9 419.5,274.4 423.6,273.2 427.8,261.2 431.9,266.2 436.0,261.2 440.1,261.2 444.3,261.2 448.4,261.2 452.5,263.1 456.7,261.2 460.8,261.2 464.9,261.2 469.0,271.3 473.2,270.0 477.3,265.6 481.4,270.7 485.6,261.2 489.7,272.6 493.8,261.2 498.0,267.5 502.1,268.1 506.2,261.2 510.4,261.2 514.5,261.2" fill="none" stroke="#327DC2" stroke-width="1.1" stroke-linejoin="round" stroke-linecap="round"/>
<g fill="#327DC2"><circle cx="324.5" cy="261.2" r="1.65"/><circle cx="328.6" cy="273.8" r="1.65"/><circle cx="332.8" cy="265.0" r="1.65"/><circle cx="336.9" cy="261.2" r="1.65"/><circle cx="341.0" cy="261.2" r="1.65"/><circle cx="345.1" cy="261.2" r="1.65"/><circle cx="349.3" cy="261.2" r="1.65"/><circle cx="353.4" cy="261.2" r="1.65"/><circle cx="357.5" cy="261.2" r="1.65"/><circle cx="361.7" cy="263.7" r="1.65"/><circle cx="365.8" cy="261.2" r="1.65"/><circle cx="369.9" cy="261.2" r="1.65"/><circle cx="374.1" cy="275.1" r="1.65"/><circle cx="378.2" cy="261.2" r="1.65"/><circle cx="382.3" cy="269.4" r="1.65"/><circle cx="386.4" cy="261.2" r="1.65"/><circle cx="390.6" cy="268.8" r="1.65"/><circle cx="394.7" cy="261.2" r="1.65"/><circle cx="398.8" cy="264.4" r="1.65"/><circle cx="403.0" cy="261.2" r="1.65"/><circle cx="407.1" cy="261.2" r="1.65"/><circle cx="411.2" cy="266.9" r="1.65"/><circle cx="415.4" cy="271.9" r="1.65"/><circle cx="419.5" cy="274.4" r="1.65"/><circle cx="423.6" cy="273.2" r="1.65"/><circle cx="427.8" cy="261.2" r="1.65"/><circle cx="431.9" cy="266.2" r="1.65"/><circle cx="436.0" cy="261.2" r="1.65"/><circle cx="440.1" cy="261.2" r="1.65"/><circle cx="444.3" cy="261.2" r="1.65"/><circle cx="448.4" cy="261.2" r="1.65"/><circle cx="452.5" cy="263.1" r="1.65"/><circle cx="456.7" cy="261.2" r="1.65"/><circle cx="460.8" cy="261.2" r="1.65"/><circle cx="464.9" cy="261.2" r="1.65"/><circle cx="469.0" cy="271.3" r="1.65"/><circle cx="473.2" cy="270.0" r="1.65"/><circle cx="477.3" cy="265.6" r="1.65"/><circle cx="481.4" cy="270.7" r="1.65"/><circle cx="485.6" cy="261.2" r="1.65"/><circle cx="489.7" cy="272.6" r="1.65"/><circle cx="493.8" cy="261.2" r="1.65"/><circle cx="498.0" cy="267.5" r="1.65"/><circle cx="502.1" cy="268.1" r="1.65"/><circle cx="506.2" cy="261.2" r="1.65"/><circle cx="510.4" cy="261.2" r="1.65"/><circle cx="514.5" cy="261.2" r="1.65"/></g>
<polyline points="324.5,265.6 328.6,274.4 332.8,263.1 336.9,261.2 341.0,261.2 345.1,261.2 349.3,261.2 353.4,261.2 357.5,261.2 361.7,261.2 365.8,261.2 369.9,261.2 374.1,269.4 378.2,261.2 382.3,266.2 386.4,261.2 390.6,268.8 394.7,261.2 398.8,261.2 403.0,261.2 407.1,261.2 411.2,275.1 415.4,270.7 419.5,273.2 423.6,272.6 427.8,261.2 431.9,264.4 436.0,263.7 440.1,261.2 444.3,261.2 448.4,261.2 452.5,261.2 456.7,261.2 460.8,261.2 464.9,261.2 469.0,271.9 473.2,270.0 477.3,265.0 481.4,268.1 485.6,261.2 489.7,273.8 493.8,267.5 498.0,266.9 502.1,271.3 506.2,261.2 510.4,261.2 514.5,261.2" fill="none" stroke="#5A8A39" stroke-width="1.1" stroke-linejoin="round" stroke-linecap="round"/>
<g fill="#5A8A39"><circle cx="324.5" cy="265.6" r="1.65"/><circle cx="328.6" cy="274.4" r="1.65"/><circle cx="332.8" cy="263.1" r="1.65"/><circle cx="336.9" cy="261.2" r="1.65"/><circle cx="341.0" cy="261.2" r="1.65"/><circle cx="345.1" cy="261.2" r="1.65"/><circle cx="349.3" cy="261.2" r="1.65"/><circle cx="353.4" cy="261.2" r="1.65"/><circle cx="357.5" cy="261.2" r="1.65"/><circle cx="361.7" cy="261.2" r="1.65"/><circle cx="365.8" cy="261.2" r="1.65"/><circle cx="369.9" cy="261.2" r="1.65"/><circle cx="374.1" cy="269.4" r="1.65"/><circle cx="378.2" cy="261.2" r="1.65"/><circle cx="382.3" cy="266.2" r="1.65"/><circle cx="386.4" cy="261.2" r="1.65"/><circle cx="390.6" cy="268.8" r="1.65"/><circle cx="394.7" cy="261.2" r="1.65"/><circle cx="398.8" cy="261.2" r="1.65"/><circle cx="403.0" cy="261.2" r="1.65"/><circle cx="407.1" cy="261.2" r="1.65"/><circle cx="411.2" cy="275.1" r="1.65"/><circle cx="415.4" cy="270.7" r="1.65"/><circle cx="419.5" cy="273.2" r="1.65"/><circle cx="423.6" cy="272.6" r="1.65"/><circle cx="427.8" cy="261.2" r="1.65"/><circle cx="431.9" cy="264.4" r="1.65"/><circle cx="436.0" cy="263.7" r="1.65"/><circle cx="440.1" cy="261.2" r="1.65"/><circle cx="444.3" cy="261.2" r="1.65"/><circle cx="448.4" cy="261.2" r="1.65"/><circle cx="452.5" cy="261.2" r="1.65"/><circle cx="456.7" cy="261.2" r="1.65"/><circle cx="460.8" cy="261.2" r="1.65"/><circle cx="464.9" cy="261.2" r="1.65"/><circle cx="469.0" cy="271.9" r="1.65"/><circle cx="473.2" cy="270.0" r="1.65"/><circle cx="477.3" cy="265.0" r="1.65"/><circle cx="481.4" cy="268.1" r="1.65"/><circle cx="485.6" cy="261.2" r="1.65"/><circle cx="489.7" cy="273.8" r="1.65"/><circle cx="493.8" cy="267.5" r="1.65"/><circle cx="498.0" cy="266.9" r="1.65"/><circle cx="502.1" cy="271.3" r="1.65"/><circle cx="506.2" cy="261.2" r="1.65"/><circle cx="510.4" cy="261.2" r="1.65"/><circle cx="514.5" cy="261.2" r="1.65"/></g>
<text transform="translate(327.1,278.2) rotate(-90)" font-size="4.5" fill="#6a6a6a" text-anchor="end">AFC...</text>
<text transform="translate(335.2,278.2) rotate(-90)" font-size="4.5" fill="#6a6a6a" text-anchor="end">Aston...</text>
<text transform="translate(343.3,278.2) rotate(-90)" font-size="4.5" fill="#6a6a6a" text-anchor="end">Birmin...</text>
<text transform="translate(351.5,278.2) rotate(-90)" font-size="4.5" fill="#6a6a6a" text-anchor="end">Blackp...</text>
<text transform="translate(359.6,278.2) rotate(-90)" font-size="4.5" fill="#6a6a6a" text-anchor="end">Bradf...</text>
<text transform="translate(367.7,278.2) rotate(-90)" font-size="4.5" fill="#6a6a6a" text-anchor="end">Cardiff...</text>
<text transform="translate(375.8,278.2) rotate(-90)" font-size="4.5" fill="#6a6a6a" text-anchor="end">Chelsea</text>
<text transform="translate(383.9,278.2) rotate(-90)" font-size="4.5" fill="#6a6a6a" text-anchor="end">Crysta...</text>
<text transform="translate(392.1,278.2) rotate(-90)" font-size="4.5" fill="#6a6a6a" text-anchor="end">Everton</text>
<text transform="translate(400.2,278.2) rotate(-90)" font-size="4.5" fill="#6a6a6a" text-anchor="end">Hull City</text>
<text transform="translate(408.3,278.2) rotate(-90)" font-size="4.5" fill="#6a6a6a" text-anchor="end">Leeds...</text>
<text transform="translate(416.4,278.2) rotate(-90)" font-size="4.5" fill="#6a6a6a" text-anchor="end">Liverp...</text>
<text transform="translate(424.5,278.2) rotate(-90)" font-size="4.5" fill="#6a6a6a" text-anchor="end">Manc...</text>
<text transform="translate(432.7,278.2) rotate(-90)" font-size="4.5" fill="#6a6a6a" text-anchor="end">Newc...</text>
<text transform="translate(440.8,278.2) rotate(-90)" font-size="4.5" fill="#6a6a6a" text-anchor="end">Nottin...</text>
<text transform="translate(448.9,278.2) rotate(-90)" font-size="4.5" fill="#6a6a6a" text-anchor="end">Ports...</text>
<text transform="translate(457.0,278.2) rotate(-90)" font-size="4.5" fill="#6a6a6a" text-anchor="end">Reading</text>
<text transform="translate(465.1,278.2) rotate(-90)" font-size="4.5" fill="#6a6a6a" text-anchor="end">Sheffi...</text>
<text transform="translate(473.3,278.2) rotate(-90)" font-size="4.5" fill="#6a6a6a" text-anchor="end">Stoke...</text>
<text transform="translate(481.4,278.2) rotate(-90)" font-size="4.5" fill="#6a6a6a" text-anchor="end">Swans...</text>
<text transform="translate(489.5,278.2) rotate(-90)" font-size="4.5" fill="#6a6a6a" text-anchor="end">Totten...</text>
<text transform="translate(497.6,278.2) rotate(-90)" font-size="4.5" fill="#6a6a6a" text-anchor="end">West...</text>
<text transform="translate(505.7,278.2) rotate(-90)" font-size="4.5" fill="#6a6a6a" text-anchor="end">Wigan...</text>
<text transform="translate(513.9,278.2) rotate(-90)" font-size="4.5" fill="#6a6a6a" text-anchor="end">Wolve...</text>
<line x1="323.5" y1="307.4" x2="335.8" y2="307.4" stroke="#4472C4" stroke-width="1.1"/><circle cx="329.7" cy="307.1" r="1.6" fill="#4472C4"/>
<text x="336.5" y="309.2" font-size="5.15" fill="#666">1992-93</text>
<line x1="361.5" y1="307.4" x2="373.8" y2="307.4" stroke="#ED7D31" stroke-width="1.1"/><circle cx="367.7" cy="307.1" r="1.6" fill="#ED7D31"/>
<text x="374.5" y="309.2" font-size="5.15" fill="#666">1993-94</text>
<line x1="399.5" y1="307.4" x2="411.8" y2="307.4" stroke="#A5A5A5" stroke-width="1.1"/><circle cx="405.7" cy="307.1" r="1.6" fill="#A5A5A5"/>
<text x="412.5" y="309.2" font-size="5.15" fill="#666">1994-95</text>
<line x1="437.5" y1="307.4" x2="449.8" y2="307.4" stroke="#FFC000" stroke-width="1.1"/><circle cx="443.7" cy="307.1" r="1.6" fill="#FFC000"/>
<text x="450.5" y="309.2" font-size="5.15" fill="#666">1995-96</text>
<line x1="475.5" y1="307.4" x2="487.8" y2="307.4" stroke="#5B9BD5" stroke-width="1.1"/><circle cx="481.7" cy="307.1" r="1.6" fill="#5B9BD5"/>
<text x="488.5" y="309.2" font-size="5.15" fill="#666">1996-97</text>
<line x1="323.5" y1="318.6" x2="335.8" y2="318.6" stroke="#70AD47" stroke-width="1.1"/><circle cx="329.7" cy="318.3" r="1.6" fill="#70AD47"/>
<text x="336.5" y="320.4" font-size="5.15" fill="#666">1997-98</text>
<line x1="361.5" y1="318.6" x2="373.8" y2="318.6" stroke="#264478" stroke-width="1.1"/><circle cx="367.7" cy="318.3" r="1.6" fill="#264478"/>
<text x="374.5" y="320.4" font-size="5.15" fill="#666">1998-99</text>
<line x1="399.5" y1="318.6" x2="411.8" y2="318.6" stroke="#9E480E" stroke-width="1.1"/><circle cx="405.7" cy="318.3" r="1.6" fill="#9E480E"/>
<text x="412.5" y="320.4" font-size="5.15" fill="#666">1999-2000</text>
<line x1="437.5" y1="318.6" x2="449.8" y2="318.6" stroke="#636363" stroke-width="1.1"/><circle cx="443.7" cy="318.3" r="1.6" fill="#636363"/>
<text x="450.5" y="320.4" font-size="5.15" fill="#666">2000-01</text>
<line x1="475.5" y1="318.6" x2="487.8" y2="318.6" stroke="#997300" stroke-width="1.1"/><circle cx="481.7" cy="318.3" r="1.6" fill="#997300"/>
<text x="488.5" y="320.4" font-size="5.15" fill="#666">2001-02</text>
<line x1="323.5" y1="329.9" x2="335.8" y2="329.9" stroke="#255E91" stroke-width="1.1"/><circle cx="329.7" cy="329.6" r="1.6" fill="#255E91"/>
<text x="336.5" y="331.7" font-size="5.15" fill="#666">2002-03</text>
<line x1="361.5" y1="329.9" x2="373.8" y2="329.9" stroke="#43682B" stroke-width="1.1"/><circle cx="367.7" cy="329.6" r="1.6" fill="#43682B"/>
<text x="374.5" y="331.7" font-size="5.15" fill="#666">2003-04</text>
<line x1="399.5" y1="329.9" x2="411.8" y2="329.9" stroke="#698ED0" stroke-width="1.1"/><circle cx="405.7" cy="329.6" r="1.6" fill="#698ED0"/>
<text x="412.5" y="331.7" font-size="5.15" fill="#666">2004-05</text>
<line x1="437.5" y1="329.9" x2="449.8" y2="329.9" stroke="#F1975A" stroke-width="1.1"/><circle cx="443.7" cy="329.6" r="1.6" fill="#F1975A"/>
<text x="450.5" y="331.7" font-size="5.15" fill="#666">2005-06</text>
<line x1="475.5" y1="329.9" x2="487.8" y2="329.9" stroke="#B7B7B7" stroke-width="1.1"/><circle cx="481.7" cy="329.6" r="1.6" fill="#B7B7B7"/>
<text x="488.5" y="331.7" font-size="5.15" fill="#666">2006-07</text>
<line x1="323.5" y1="341.3" x2="335.8" y2="341.3" stroke="#FFCD33" stroke-width="1.1"/><circle cx="329.7" cy="341.0" r="1.6" fill="#FFCD33"/>
<text x="336.5" y="343.1" font-size="5.15" fill="#666">2007-08</text>
<line x1="361.5" y1="341.3" x2="373.8" y2="341.3" stroke="#7CAFDD" stroke-width="1.1"/><circle cx="367.7" cy="341.0" r="1.6" fill="#7CAFDD"/>
<text x="374.5" y="343.1" font-size="5.15" fill="#666">2008-09</text>
<line x1="399.5" y1="341.3" x2="411.8" y2="341.3" stroke="#8CC168" stroke-width="1.1"/><circle cx="405.7" cy="341.0" r="1.6" fill="#8CC168"/>
<text x="412.5" y="343.1" font-size="5.15" fill="#666">2009-10</text>
<line x1="437.5" y1="341.3" x2="449.8" y2="341.3" stroke="#335AA1" stroke-width="1.1"/><circle cx="443.7" cy="341.0" r="1.6" fill="#335AA1"/>
<text x="450.5" y="343.1" font-size="5.15" fill="#666">2010-11</text>
<line x1="475.5" y1="341.3" x2="487.8" y2="341.3" stroke="#D26012" stroke-width="1.1"/><circle cx="481.7" cy="341.0" r="1.6" fill="#D26012"/>
<text x="488.5" y="343.1" font-size="5.15" fill="#666">2011-12</text>
<line x1="323.5" y1="352.8" x2="335.8" y2="352.8" stroke="#848484" stroke-width="1.1"/><circle cx="329.7" cy="352.5" r="1.6" fill="#848484"/>
<text x="336.5" y="354.6" font-size="5.15" fill="#666">2012-13</text>
<line x1="361.5" y1="352.8" x2="373.8" y2="352.8" stroke="#CC9A00" stroke-width="1.1"/><circle cx="367.7" cy="352.5" r="1.6" fill="#CC9A00"/>
<text x="374.5" y="354.6" font-size="5.15" fill="#666">2013-14</text>
<line x1="399.5" y1="352.8" x2="411.8" y2="352.8" stroke="#327DC2" stroke-width="1.1"/><circle cx="405.7" cy="352.5" r="1.6" fill="#327DC2"/>
<text x="412.5" y="354.6" font-size="5.15" fill="#666">2014-15</text>
<line x1="437.5" y1="352.8" x2="449.8" y2="352.8" stroke="#5A8A39" stroke-width="1.1"/><circle cx="443.7" cy="352.5" r="1.6" fill="#5A8A39"/>
<text x="450.5" y="354.6" font-size="5.15" fill="#666">2015-16</text>
<circle cx="308.5" cy="230.9" r="2.6" fill="#fff" stroke="#bdbdbd" stroke-width="0.9"/>
<circle cx="417.9" cy="230.9" r="2.6" fill="#fff" stroke="#bdbdbd" stroke-width="0.9"/>
<circle cx="527.4" cy="230.9" r="2.6" fill="#fff" stroke="#bdbdbd" stroke-width="0.9"/>
<circle cx="308.5" cy="296.9" r="2.6" fill="#fff" stroke="#bdbdbd" stroke-width="0.9"/>
<circle cx="527.4" cy="296.9" r="2.6" fill="#fff" stroke="#bdbdbd" stroke-width="0.9"/>
<circle cx="308.5" cy="362.8" r="2.6" fill="#fff" stroke="#bdbdbd" stroke-width="0.9"/>
<circle cx="417.9" cy="362.8" r="2.6" fill="#fff" stroke="#bdbdbd" stroke-width="0.9"/>
<circle cx="527.4" cy="362.8" r="2.6" fill="#fff" stroke="#bdbdbd" stroke-width="0.9"/>
</svg>
</body></html>
